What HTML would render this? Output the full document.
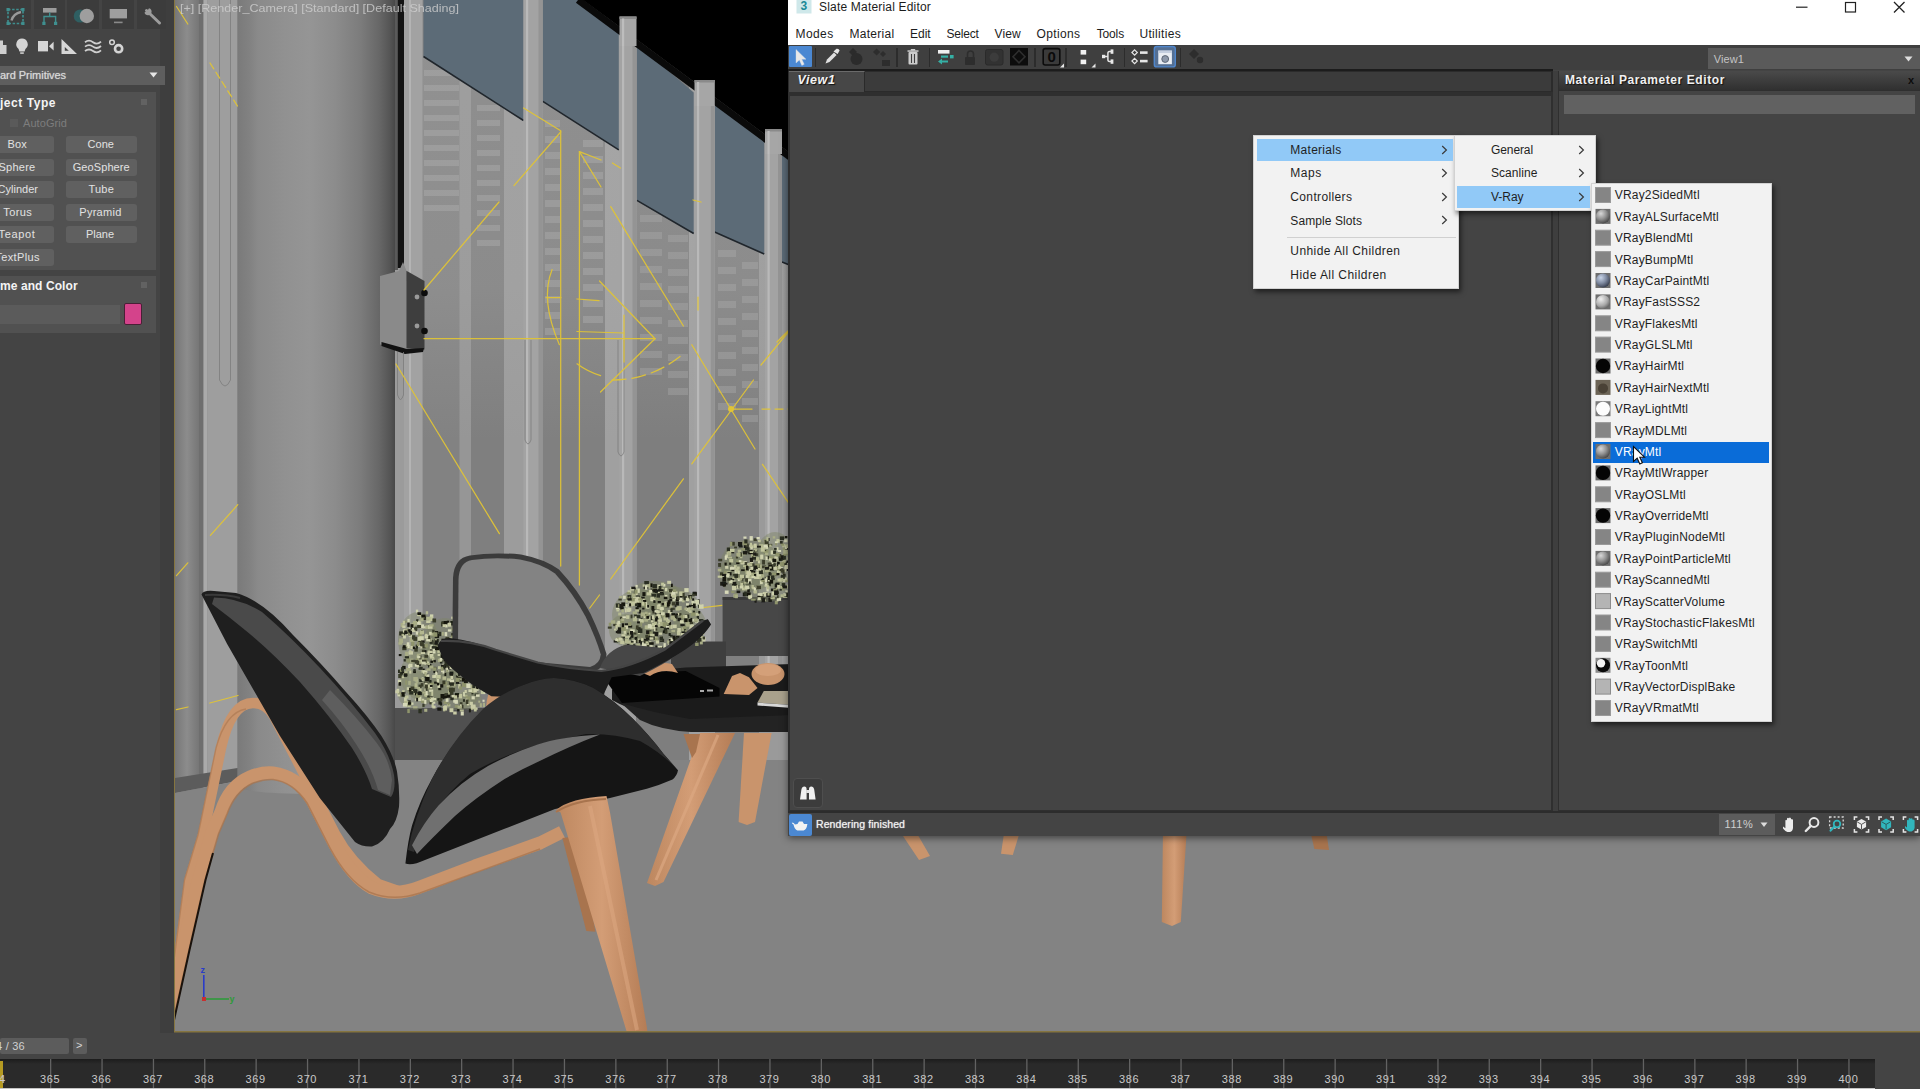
<!DOCTYPE html>
<html><head><meta charset="utf-8"><title>Slate Material Editor</title>
<style>
html,body{margin:0;padding:0;}
body{width:1920px;height:1089px;overflow:hidden;background:#444;font-family:"Liberation Sans",sans-serif;position:relative;}
div,span,svg{box-sizing:border-box;}

</style></head>
<body>
<svg style="position:absolute;left:0;top:0" width="1920" height="1089" viewBox="0 0 1920 1089">
<defs>
<linearGradient id="colg" x1="0" x2="1" y1="0" y2="0">
<stop offset="0" stop-color="#7a7a7a"/><stop offset="0.08" stop-color="#828282"/><stop offset="0.13" stop-color="#8a8a8a"/><stop offset="0.3" stop-color="#919191"/><stop offset="0.46" stop-color="#959595"/><stop offset="0.62" stop-color="#8c8c8c"/><stop offset="0.78" stop-color="#7c7c7c"/><stop offset="0.9" stop-color="#676767"/><stop offset="0.97" stop-color="#545454"/><stop offset="1" stop-color="#484848"/>
</linearGradient>
<linearGradient id="lstrip" x1="0" x2="1" y1="0" y2="0">
<stop offset="0" stop-color="#777"/><stop offset="0.5" stop-color="#8c8c8c"/><stop offset="1" stop-color="#767676"/>
</linearGradient>
<linearGradient id="wood" x1="0" x2="1" y1="0" y2="0"><stop offset="0" stop-color="#bd875f"/><stop offset="0.5" stop-color="#d39d76"/><stop offset="1" stop-color="#b47c55"/></linearGradient>
<filter id="b1" x="-5%" y="-5%" width="110%" height="110%"><feGaussianBlur stdDeviation="0.7"/></filter>
<filter id="b2" x="-2%" y="-2%" width="104%" height="104%"><feGaussianBlur stdDeviation="0.6"/></filter>
<linearGradient id="glz" gradientUnits="userSpaceOnUse" x1="0" y1="56" x2="0" y2="440"><stop offset="0" stop-color="#b0b0b0" stop-opacity=".32"/><stop offset=".6" stop-color="#b0b0b0" stop-opacity=".25"/><stop offset="1" stop-color="#b0b0b0" stop-opacity="0"/></linearGradient>
<clipPath id="vpclip"><rect x="175" y="0" width="1745" height="1031"/></clipPath>
</defs>
<rect x="173.5" y="0" width="1746.5" height="1032.5" fill="#857540"/>
<g clip-path="url(#vpclip)">
<!-- floor -->
<rect x="175" y="0" width="1745" height="1031" fill="#838383"/>
<!-- wall base: vertical stripes -->
<g id="wall">
<rect x="175" y="0" width="24" height="790" fill="url(#lstrip)"/>
<rect x="199" y="0" width="4.5" height="790" fill="#6e6e6e"/>
<rect x="203.5" y="0" width="4" height="790" fill="#aaaaaa"/>
<rect x="207.5" y="0" width="30" height="790" fill="#9e9e9e"/>
<rect x="394" y="0" width="28.5" height="760" fill="#9b9b9b"/>
<rect x="422.5" y="0" width="37" height="760" fill="#828282"/>
<rect x="459.5" y="0" width="11.5" height="760" fill="#969696"/>
<rect x="471" y="0" width="33" height="760" fill="#7f7f7f"/>
<rect x="504" y="0" width="36" height="760" fill="#9c9c9c"/>
<rect x="540" y="0" width="65" height="760" fill="#808080"/>
<rect x="605" y="0" width="31" height="760" fill="#a0a0a0"/>
<rect x="636" y="0" width="53" height="760" fill="#7e7e7e"/>
<rect x="689" y="0" width="26" height="760" fill="#a0a0a0"/>
<rect x="715" y="0" width="44" height="760" fill="#808080"/>
<rect x="759" y="0" width="31" height="760" fill="#9a9a9a"/>
</g>
<g>
<rect x="424" y="70.0" width="35" height="6" fill="#c4c4c4" opacity="0.3"/><rect x="424" y="85.0" width="35" height="6" fill="#c4c4c4" opacity="0.3"/><rect x="424" y="100.0" width="35" height="6" fill="#c4c4c4" opacity="0.3"/><rect x="424" y="115.0" width="35" height="6" fill="#c4c4c4" opacity="0.3"/><rect x="424" y="130.0" width="35" height="6" fill="#c4c4c4" opacity="0.3"/><rect x="424" y="145.0" width="35" height="6" fill="#c4c4c4" opacity="0.3"/><rect x="424" y="160.0" width="35" height="6" fill="#c4c4c4" opacity="0.3"/><rect x="424" y="175.0" width="35" height="6" fill="#c4c4c4" opacity="0.3"/><rect x="424" y="190.0" width="35" height="6" fill="#c4c4c4" opacity="0.3"/><rect x="424" y="205.0" width="35" height="6" fill="#c4c4c4" opacity="0.3"/>
<rect x="477" y="105.0" width="23" height="6" fill="#c4c4c4" opacity="0.3"/><rect x="477" y="120.0" width="23" height="6" fill="#c4c4c4" opacity="0.3"/><rect x="477" y="135.0" width="23" height="6" fill="#c4c4c4" opacity="0.3"/><rect x="477" y="150.0" width="23" height="6" fill="#c4c4c4" opacity="0.3"/><rect x="477" y="165.0" width="23" height="6" fill="#c4c4c4" opacity="0.3"/><rect x="477" y="180.0" width="23" height="6" fill="#c4c4c4" opacity="0.3"/><rect x="477" y="195.0" width="23" height="6" fill="#c4c4c4" opacity="0.3"/><rect x="477" y="210.0" width="23" height="6" fill="#c4c4c4" opacity="0.3"/><rect x="477" y="225.0" width="23" height="6" fill="#c4c4c4" opacity="0.3"/><rect x="477" y="240.0" width="23" height="6" fill="#c4c4c4" opacity="0.3"/>
<rect x="545" y="120.0" width="15" height="7" fill="#c4c4c4" opacity="0.28"/><rect x="545" y="136.0" width="15" height="7" fill="#c4c4c4" opacity="0.28"/><rect x="545" y="152.0" width="15" height="7" fill="#c4c4c4" opacity="0.28"/><rect x="545" y="168.0" width="15" height="7" fill="#c4c4c4" opacity="0.28"/><rect x="545" y="184.0" width="15" height="7" fill="#c4c4c4" opacity="0.28"/><rect x="545" y="200.0" width="15" height="7" fill="#c4c4c4" opacity="0.28"/><rect x="545" y="216.0" width="15" height="7" fill="#c4c4c4" opacity="0.28"/><rect x="545" y="232.0" width="15" height="7" fill="#c4c4c4" opacity="0.28"/><rect x="545" y="248.0" width="15" height="7" fill="#c4c4c4" opacity="0.28"/><rect x="545" y="264.0" width="15" height="7" fill="#c4c4c4" opacity="0.28"/><rect x="545" y="280.0" width="15" height="7" fill="#c4c4c4" opacity="0.28"/><rect x="545" y="296.0" width="15" height="7" fill="#c4c4c4" opacity="0.28"/><rect x="545" y="312.0" width="15" height="7" fill="#c4c4c4" opacity="0.28"/><rect x="545" y="328.0" width="15" height="7" fill="#c4c4c4" opacity="0.28"/>
<rect x="583" y="140.0" width="20" height="7" fill="#c4c4c4" opacity="0.3"/><rect x="583" y="156.0" width="20" height="7" fill="#c4c4c4" opacity="0.3"/><rect x="583" y="172.0" width="20" height="7" fill="#c4c4c4" opacity="0.3"/><rect x="583" y="188.0" width="20" height="7" fill="#c4c4c4" opacity="0.3"/><rect x="583" y="204.0" width="20" height="7" fill="#c4c4c4" opacity="0.3"/><rect x="583" y="220.0" width="20" height="7" fill="#c4c4c4" opacity="0.3"/><rect x="583" y="236.0" width="20" height="7" fill="#c4c4c4" opacity="0.3"/><rect x="583" y="252.0" width="20" height="7" fill="#c4c4c4" opacity="0.3"/><rect x="583" y="268.0" width="20" height="7" fill="#c4c4c4" opacity="0.3"/><rect x="583" y="284.0" width="20" height="7" fill="#c4c4c4" opacity="0.3"/><rect x="583" y="300.0" width="20" height="7" fill="#c4c4c4" opacity="0.3"/><rect x="583" y="316.0" width="20" height="7" fill="#c4c4c4" opacity="0.3"/>
<rect x="640" y="215.0" width="22" height="7" fill="#c4c4c4" opacity="0.25"/><rect x="640" y="232.0" width="22" height="7" fill="#c4c4c4" opacity="0.25"/><rect x="640" y="249.0" width="22" height="7" fill="#c4c4c4" opacity="0.25"/><rect x="640" y="266.0" width="22" height="7" fill="#c4c4c4" opacity="0.25"/><rect x="640" y="283.0" width="22" height="7" fill="#c4c4c4" opacity="0.25"/><rect x="640" y="300.0" width="22" height="7" fill="#c4c4c4" opacity="0.25"/><rect x="640" y="317.0" width="22" height="7" fill="#c4c4c4" opacity="0.25"/><rect x="640" y="334.0" width="22" height="7" fill="#c4c4c4" opacity="0.25"/><rect x="640" y="351.0" width="22" height="7" fill="#c4c4c4" opacity="0.25"/><rect x="640" y="368.0" width="22" height="7" fill="#c4c4c4" opacity="0.25"/>
<rect x="668" y="235.0" width="20" height="7" fill="#c4c4c4" opacity="0.25"/><rect x="668" y="252.0" width="20" height="7" fill="#c4c4c4" opacity="0.25"/><rect x="668" y="269.0" width="20" height="7" fill="#c4c4c4" opacity="0.25"/><rect x="668" y="286.0" width="20" height="7" fill="#c4c4c4" opacity="0.25"/><rect x="668" y="303.0" width="20" height="7" fill="#c4c4c4" opacity="0.25"/><rect x="668" y="320.0" width="20" height="7" fill="#c4c4c4" opacity="0.25"/><rect x="668" y="337.0" width="20" height="7" fill="#c4c4c4" opacity="0.25"/><rect x="668" y="354.0" width="20" height="7" fill="#c4c4c4" opacity="0.25"/><rect x="668" y="371.0" width="20" height="7" fill="#c4c4c4" opacity="0.25"/><rect x="668" y="388.0" width="20" height="7" fill="#c4c4c4" opacity="0.25"/>
<rect x="718" y="250.0" width="18" height="7" fill="#c4c4c4" opacity="0.25"/><rect x="718" y="267.0" width="18" height="7" fill="#c4c4c4" opacity="0.25"/><rect x="718" y="284.0" width="18" height="7" fill="#c4c4c4" opacity="0.25"/><rect x="718" y="301.0" width="18" height="7" fill="#c4c4c4" opacity="0.25"/><rect x="718" y="318.0" width="18" height="7" fill="#c4c4c4" opacity="0.25"/><rect x="718" y="335.0" width="18" height="7" fill="#c4c4c4" opacity="0.25"/><rect x="718" y="352.0" width="18" height="7" fill="#c4c4c4" opacity="0.25"/><rect x="718" y="369.0" width="18" height="7" fill="#c4c4c4" opacity="0.25"/><rect x="718" y="386.0" width="18" height="7" fill="#c4c4c4" opacity="0.25"/><rect x="718" y="403.0" width="18" height="7" fill="#c4c4c4" opacity="0.25"/>
<rect x="742" y="262.0" width="16" height="7" fill="#c4c4c4" opacity="0.25"/><rect x="742" y="279.0" width="16" height="7" fill="#c4c4c4" opacity="0.25"/><rect x="742" y="296.0" width="16" height="7" fill="#c4c4c4" opacity="0.25"/><rect x="742" y="313.0" width="16" height="7" fill="#c4c4c4" opacity="0.25"/><rect x="742" y="330.0" width="16" height="7" fill="#c4c4c4" opacity="0.25"/><rect x="742" y="347.0" width="16" height="7" fill="#c4c4c4" opacity="0.25"/><rect x="742" y="364.0" width="16" height="7" fill="#c4c4c4" opacity="0.25"/><rect x="742" y="381.0" width="16" height="7" fill="#c4c4c4" opacity="0.25"/><rect x="742" y="398.0" width="16" height="7" fill="#c4c4c4" opacity="0.25"/><rect x="742" y="415.0" width="16" height="7" fill="#c4c4c4" opacity="0.25"/>
</g>
<polygon points="422.5,56 524,120 543,101 619,150 637,200 694,233 715,232 764,254 790,262 790,440 422.5,440" fill="url(#glz)"/>
<rect x="395" y="0" width="3" height="270" fill="#5a5a5a"/><rect x="397.8" y="0" width="6.4" height="268" fill="#141414"/>
<rect x="404" y="0" width="18.5" height="700" fill="#a2a2a2"/>
<rect x="409" y="0" width="2" height="700" fill="#b4b4b4"/>
<polygon points="423.5,0 523.5,0 523.5,120.5 423.5,56.5" fill="#5c6b77"/>
<polygon points="542.8,0 583.5,0 618.8,33 618.8,149.8 542.8,101.3" fill="#5c6b77"/>
<polygon points="636.9,44 693.7,92.5 693.7,233.5 636.9,200.4" fill="#5c6b77"/>
<polygon points="714.6,103.5 764.2,141 764.2,254 714.6,232" fill="#5c6b77"/>
<polygon points="782,155 792,162 792,266 782,262" fill="#5c6b77"/>
<g stroke="#20262c" stroke-width="1.6" fill="none"><path d="M423.5 56.5L523.5 120.5M542.8 101.3L618.8 149.8M636.9 200.4L693.7 233.5M714.6 232L764.2 254M782 262L792 266"/></g>
<rect x="523.5" y="0" width="19.0" height="700" fill="#a3a3a3"/>
<rect x="526.0" y="0" width="2.2" height="700" fill="#b9b9b9"/>
<rect x="538.5" y="0" width="4" height="700" fill="#949494"/>
<rect x="619.5" y="16.5" width="17.0" height="683.5" fill="#a3a3a3"/>
<rect x="622.0" y="16.5" width="2.2" height="683.5" fill="#b9b9b9"/>
<rect x="632.5" y="16.5" width="4" height="683.5" fill="#949494"/>
<rect x="694.5" y="80" width="20.299999999999955" height="620" fill="#a3a3a3"/>
<rect x="697.0" y="80" width="2.2" height="620" fill="#b9b9b9"/>
<rect x="710.8" y="80" width="4" height="620" fill="#949494"/>
<rect x="765" y="129" width="17" height="571" fill="#a3a3a3"/>
<rect x="767.5" y="129" width="2.2" height="571" fill="#b9b9b9"/>
<rect x="778" y="129" width="4" height="571" fill="#949494"/>
<polygon points="583.5,0 792,0 792,154.5" fill="#000"/>
<path d="M578 0L792 158.5" stroke="#0a0a0a" stroke-width="7" fill="none"/>
<polygon points="583.5,0 792,0 792,151" fill="#000"/>
<rect x="619.5" y="16.5" width="17.0" height="29.5" fill="#a6a6a6"/>
<rect x="619.5" y="16.5" width="17.0" height="2.5" fill="#8a8a8a"/>
<rect x="622.0" y="18.5" width="2.2" height="27.5" fill="#bdbdbd"/>
<rect x="694.5" y="80" width="20.299999999999955" height="26" fill="#a6a6a6"/>
<rect x="694.5" y="80" width="20.299999999999955" height="2.5" fill="#8a8a8a"/>
<rect x="697.0" y="82" width="2.2" height="24" fill="#bdbdbd"/>
<rect x="765" y="129" width="17" height="25" fill="#a6a6a6"/>
<rect x="765" y="129" width="17" height="2.5" fill="#8a8a8a"/>
<rect x="767.5" y="131" width="2.2" height="23" fill="#bdbdbd"/>
<path d="M237.5 0H395V785Q395 794 316 794Q237.5 794 237.5 785Z" fill="url(#colg)"/>
<polygon points="175,778 237.5,768 237.5,781 175,793" fill="#5c5c5c"/>
<polygon points="175,793 237.5,781 237.5,1031 175,1031" fill="#838383"/>
<polygon points="395,708 500,708 620,708 620,760 395,760" fill="#4c4c4c"/>
<polygon points="395,708 470,708 520,742 560,760 395,760" fill="#505050"/>
<polygon points="380,276 399,271 403,262 406.4,270.7 406.4,348.5 380,344.4" fill="#8a8a8a"/>
<polygon points="406.4,270.7 424.5,281 424.5,349.5 406.4,348.5" fill="#3e3e3e"/>
<polygon points="381.5,342 407,349 424,348 423,352 405,354 381.5,346" fill="#111"/>
<circle cx="424.5" cy="293" r="3.3" fill="#0c0c0c"/><circle cx="424.5" cy="331" r="3.3" fill="#0c0c0c"/><circle cx="417" cy="297" r="2.4" fill="#9a9a9a"/><circle cx="417" cy="326" r="2.4" fill="#9a9a9a"/>
<g fill="none" stroke="#7c7c7c" stroke-width="1" opacity=".8"><path d="M219.5 0V380Q225 392 230.5 380V0"/><path d="M397.5 352V395Q400.5 404 403.5 395V352"/><path d="M525 340V440Q528 448 531 440V340"/><path d="M618 340V452Q621 460 624 452V340"/></g>
<g stroke="#e0c436" stroke-width="1.25" fill="none" stroke-linecap="round" opacity=".95">
<path d="M176.5 6.5L187.8 24"/>
<path d="M424 290L499 202"/>
<path d="M514 185.6L560.7 132"/>
<path d="M523.6 108L560.7 130.8"/>
<path d="M560.7 131L560.7 566"/>
<path d="M579.4 151.7L579.4 585"/>
<path d="M579.4 151.7L601 160"/>
<path d="M579.4 151.7L601 187"/>
<path d="M424 338.7L655 338.7"/>
<path d="M624 315L624 362"/>
<path d="M599.5 281L655 338.7"/>
<path d="M600.5 392L655 338.7"/>
<path d="M610.7 206.7L683.4 326"/>
<path d="M396 364L499.4 533.7"/>
<path d="M691.8 344.7L755 449"/>
<path d="M691.8 463.8L753.5 380"/>
<path d="M731 409L752 409"/>
<path d="M761 365L790 330"/>
<path d="M683.4 478.8L610.7 579"/>
<path d="M762.5 464.3L790 505"/>
<path d="M210.4 535.4L237.8 504.7"/>
<path d="M176.5 575.7L187.8 562.8"/>
<path d="M546 297.6L561 297.6"/>
<path d="M577 299L599 300.6"/>
<path d="M577 331.5L624 333"/>
<path d="M612.4 163L620.4 168"/>
<path d="M693 200L701 202"/>
<path d="M698 297L698 310"/>
<path d="M777 342L790 329"/>
<path d="M599.5 595L589.8 608"/>
<path d="M699.5 608L722 605.4"/>
<path d="M209.8 703L238 695.5"/>
<path d="M176.4 709.7L188 707"/>
<path d="M210 63L237.8 106.5" stroke-dasharray="7 4"/>
<path d="M762 409H790" stroke-dasharray="8 5"/>
<path d="M552 269.7Q540 300 559.4 344.7"/>
<path d="M577 363.8Q588 372 600.6 375.6"/>
<path d="M612 380Q650 380 680 356.5" stroke-dasharray="14 6"/>
</g>
<circle cx="731" cy="409" r="3" fill="#e0c436"/>
<rect x="722.6" y="597" width="70" height="59" fill="#474747"/>
<rect x="722.6" y="597" width="70" height="3" fill="#3a3a3a"/>
<polygon points="671,641.5 726,641.5 726,672 671,672" fill="#3e3e3e"/>
<g filter="url(#b1)"><ellipse cx="418.0" cy="640.0" rx="20.0" ry="28.0" fill="#7f8464" opacity=".45"/><ellipse cx="430.0" cy="675.0" rx="30.0" ry="28.0" fill="#7f8464" opacity=".45"/><ellipse cx="455.0" cy="690.0" rx="26.0" ry="20.0" fill="#7f8464" opacity=".45"/><ellipse cx="415.0" cy="690.0" rx="18.0" ry="20.0" fill="#7f8464" opacity=".45"/><ellipse cx="445.0" cy="640.0" rx="20.0" ry="22.0" fill="#7f8464" opacity=".45"/><ellipse cx="470.0" cy="700.0" rx="12.0" ry="10.0" fill="#7f8464" opacity=".45"/><rect x="406.1" y="695.4" width="2.5" height="3.2" fill="#c0c49c"/><rect x="434.5" y="674.0" width="2.1" height="1.9" fill="#1a1c14"/><rect x="434.1" y="681.6" width="3.5" height="2.1" fill="#1a1c14"/><rect x="473.3" y="677.8" width="3.3" height="3.9" fill="#c9cba6"/><rect x="425.1" y="676.8" width="4.5" height="4.4" fill="#15160f"/><rect x="431.5" y="702.9" width="2.3" height="4.6" fill="#c0c49c"/><rect x="423.9" y="681.6" width="4.4" height="3.0" fill="#3a3d2c"/><rect x="468.7" y="676.1" width="2.6" height="4.5" fill="#2a2d20"/><rect x="460.9" y="647.1" width="2.3" height="3.3" fill="#a9ad86"/><rect x="457.3" y="676.5" width="2.0" height="3.7" fill="#8f946c"/><rect x="403.7" y="620.8" width="3.2" height="1.9" fill="#8f946c"/><rect x="397.9" y="679.7" width="3.4" height="3.6" fill="#cfd2ae"/><rect x="409.2" y="627.7" width="4.0" height="3.3" fill="#c9cba6"/><rect x="435.3" y="632.4" width="3.5" height="3.8" fill="#3a3d2c"/><rect x="428.5" y="696.4" width="4.1" height="3.3" fill="#3a3d2c"/><rect x="444.5" y="649.4" width="3.1" height="2.8" fill="#c9cba6"/><rect x="443.9" y="705.6" width="3.2" height="2.8" fill="#b4b890"/><rect x="425.1" y="661.7" width="4.0" height="2.7" fill="#cfd2ae"/><rect x="448.0" y="690.7" width="2.3" height="3.4" fill="#a9ad86"/><rect x="471.5" y="690.0" width="1.9" height="4.4" fill="#2a2d20"/><rect x="461.9" y="633.7" width="2.1" height="3.5" fill="#2a2d20"/><rect x="441.5" y="621.3" width="3.6" height="2.6" fill="#2a2d20"/><rect x="422.1" y="640.4" width="2.5" height="2.5" fill="#1a1c14"/><rect x="459.7" y="709.5" width="4.1" height="1.9" fill="#b4b890"/><rect x="457.4" y="676.9" width="4.1" height="4.5" fill="#3a3d2c"/><rect x="450.8" y="678.8" width="2.4" height="3.6" fill="#15160f"/><rect x="429.5" y="665.8" width="3.6" height="3.0" fill="#8f946c"/><rect x="408.2" y="664.6" width="1.8" height="4.3" fill="#d6d8b8"/><rect x="397.4" y="692.3" width="3.1" height="4.1" fill="#cfd2ae"/><rect x="472.3" y="688.0" width="3.2" height="2.9" fill="#cfd2ae"/><rect x="425.2" y="625.4" width="4.3" height="3.5" fill="#a9ad86"/><rect x="449.1" y="646.9" width="1.9" height="2.4" fill="#2a2d20"/><rect x="454.7" y="694.3" width="2.8" height="4.3" fill="#3a3d2c"/><rect x="455.8" y="655.8" width="2.0" height="1.9" fill="#1a1c14"/><rect x="418.1" y="639.2" width="4.2" height="2.8" fill="#3a3d2c"/><rect x="424.6" y="634.7" width="4.0" height="3.8" fill="#cfd2ae"/><rect x="438.0" y="666.2" width="2.7" height="2.9" fill="#c0c49c"/><rect x="446.9" y="704.0" width="3.4" height="2.4" fill="#c0c49c"/><rect x="401.4" y="632.1" width="3.4" height="4.4" fill="#2a2d20"/><rect x="435.2" y="633.2" width="4.1" height="1.8" fill="#c9cba6"/><rect x="404.4" y="699.5" width="2.3" height="4.0" fill="#c9cba6"/><rect x="446.8" y="620.7" width="2.3" height="2.5" fill="#15160f"/><rect x="416.8" y="655.0" width="2.4" height="2.7" fill="#c0c49c"/><rect x="396.5" y="688.8" width="2.7" height="2.9" fill="#cfd2ae"/><rect x="422.6" y="668.6" width="2.1" height="2.4" fill="#15160f"/><rect x="455.9" y="675.1" width="2.3" height="2.4" fill="#2a2d20"/><rect x="411.9" y="642.3" width="2.1" height="3.9" fill="#2a2d20"/><rect x="410.8" y="689.4" width="4.3" height="2.6" fill="#cfd2ae"/><rect x="424.1" y="662.3" width="4.1" height="2.1" fill="#cfd2ae"/><rect x="413.8" y="691.1" width="2.0" height="3.3" fill="#b4b890"/><rect x="451.2" y="634.7" width="3.2" height="4.2" fill="#8f946c"/><rect x="407.9" y="657.7" width="2.0" height="4.5" fill="#8f946c"/><rect x="409.6" y="687.6" width="4.1" height="2.7" fill="#d6d8b8"/><rect x="403.6" y="659.1" width="2.2" height="2.4" fill="#2a2d20"/><rect x="443.1" y="681.8" width="4.1" height="3.5" fill="#8f946c"/><rect x="454.5" y="663.3" width="2.3" height="3.0" fill="#1a1c14"/><rect x="408.2" y="680.9" width="2.5" height="4.0" fill="#a9ad86"/><rect x="455.4" y="651.7" width="3.3" height="3.3" fill="#b4b890"/><rect x="429.6" y="639.9" width="3.2" height="4.0" fill="#2a2d20"/><rect x="446.2" y="667.7" width="2.5" height="4.1" fill="#d6d8b8"/><rect x="429.8" y="646.7" width="2.0" height="3.2" fill="#cfd2ae"/><rect x="410.0" y="637.6" width="4.4" height="4.4" fill="#a9ad86"/><rect x="451.5" y="627.6" width="3.2" height="3.1" fill="#8f946c"/><rect x="414.3" y="647.9" width="3.5" height="3.8" fill="#3a3d2c"/><rect x="476.9" y="686.2" width="4.3" height="2.2" fill="#a9ad86"/><rect x="462.9" y="699.2" width="2.6" height="2.6" fill="#2a2d20"/><rect x="443.7" y="621.0" width="3.5" height="4.2" fill="#15160f"/><rect x="474.7" y="707.6" width="2.9" height="2.2" fill="#cfd2ae"/><rect x="432.4" y="705.6" width="3.2" height="2.9" fill="#c9cba6"/><rect x="451.3" y="644.9" width="3.3" height="4.6" fill="#d6d8b8"/><rect x="417.0" y="614.0" width="4.5" height="2.2" fill="#c0c49c"/><rect x="463.8" y="694.8" width="3.7" height="2.0" fill="#a9ad86"/><rect x="470.6" y="705.5" width="2.9" height="4.3" fill="#b4b890"/><rect x="433.4" y="670.8" width="4.5" height="2.1" fill="#15160f"/><rect x="448.1" y="647.5" width="3.6" height="2.6" fill="#c0c49c"/><rect x="428.1" y="664.0" width="3.3" height="3.4" fill="#1a1c14"/><rect x="415.8" y="631.4" width="2.6" height="3.3" fill="#d6d8b8"/><rect x="418.6" y="666.8" width="4.1" height="3.0" fill="#2a2d20"/><rect x="471.5" y="696.2" width="3.3" height="3.2" fill="#d6d8b8"/><rect x="471.0" y="686.8" width="4.3" height="2.4" fill="#cfd2ae"/><rect x="467.0" y="701.5" width="2.1" height="3.9" fill="#c9cba6"/><rect x="443.1" y="708.2" width="2.2" height="3.2" fill="#a9ad86"/><rect x="445.5" y="636.9" width="3.7" height="3.9" fill="#3a3d2c"/><rect x="423.1" y="616.5" width="2.8" height="3.3" fill="#15160f"/><rect x="424.5" y="682.7" width="3.2" height="3.6" fill="#cfd2ae"/><rect x="428.0" y="625.2" width="4.6" height="3.6" fill="#c9cba6"/><rect x="459.0" y="683.5" width="2.4" height="4.4" fill="#3a3d2c"/><rect x="448.1" y="659.3" width="3.8" height="3.1" fill="#2a2d20"/><rect x="454.2" y="624.5" width="1.8" height="2.9" fill="#3a3d2c"/><rect x="432.3" y="647.2" width="3.4" height="3.9" fill="#cfd2ae"/><rect x="474.8" y="684.6" width="4.6" height="2.5" fill="#15160f"/><rect x="408.0" y="687.9" width="4.0" height="4.2" fill="#b4b890"/><rect x="463.1" y="691.9" width="1.8" height="4.4" fill="#cfd2ae"/><rect x="465.8" y="647.8" width="2.2" height="4.1" fill="#2a2d20"/><rect x="437.6" y="653.9" width="2.6" height="2.1" fill="#c9cba6"/><rect x="451.2" y="633.1" width="2.4" height="2.4" fill="#2a2d20"/><rect x="400.7" y="693.5" width="3.6" height="3.1" fill="#3a3d2c"/><rect x="420.7" y="683.1" width="2.6" height="3.5" fill="#3a3d2c"/><rect x="414.9" y="664.2" width="3.2" height="2.5" fill="#d6d8b8"/><rect x="448.9" y="681.0" width="4.5" height="3.8" fill="#2a2d20"/><rect x="422.5" y="650.1" width="4.0" height="2.3" fill="#1a1c14"/><rect x="450.3" y="621.1" width="3.4" height="4.4" fill="#15160f"/><rect x="408.6" y="687.9" width="2.8" height="3.9" fill="#15160f"/><rect x="415.6" y="681.3" width="2.7" height="2.1" fill="#a9ad86"/><rect x="429.7" y="656.7" width="4.5" height="1.9" fill="#c0c49c"/><rect x="461.7" y="677.5" width="3.8" height="4.1" fill="#15160f"/><rect x="424.8" y="694.3" width="3.5" height="2.3" fill="#c0c49c"/><rect x="414.0" y="628.4" width="2.9" height="2.3" fill="#15160f"/><rect x="414.9" y="692.4" width="3.3" height="2.9" fill="#15160f"/><rect x="434.7" y="631.1" width="3.5" height="4.3" fill="#15160f"/><rect x="465.8" y="696.5" width="4.3" height="4.2" fill="#8f946c"/><rect x="419.8" y="624.4" width="4.3" height="3.9" fill="#d6d8b8"/><rect x="407.7" y="702.6" width="2.9" height="4.3" fill="#c9cba6"/><rect x="442.8" y="664.6" width="2.2" height="3.1" fill="#2a2d20"/><rect x="469.6" y="701.8" width="3.3" height="3.3" fill="#c9cba6"/><rect x="405.6" y="704.7" width="2.1" height="1.9" fill="#b4b890"/><rect x="451.4" y="684.2" width="4.1" height="2.3" fill="#a9ad86"/><rect x="434.3" y="638.9" width="4.5" height="3.6" fill="#2a2d20"/><rect x="415.9" y="609.6" width="2.3" height="3.0" fill="#cfd2ae"/><rect x="456.8" y="672.6" width="4.3" height="3.3" fill="#c9cba6"/><rect x="442.4" y="680.6" width="3.0" height="3.7" fill="#3a3d2c"/><rect x="458.2" y="684.0" width="2.5" height="4.5" fill="#c0c49c"/><rect x="407.6" y="703.1" width="4.2" height="1.9" fill="#b4b890"/><rect x="402.2" y="691.6" width="3.2" height="2.1" fill="#15160f"/><rect x="422.1" y="616.8" width="3.0" height="2.2" fill="#c9cba6"/><rect x="429.6" y="680.1" width="1.9" height="3.3" fill="#15160f"/><rect x="402.1" y="690.2" width="2.6" height="4.2" fill="#c0c49c"/><rect x="399.2" y="631.4" width="4.0" height="4.1" fill="#2a2d20"/><rect x="432.2" y="629.7" width="2.4" height="4.4" fill="#3a3d2c"/><rect x="439.8" y="645.6" width="3.1" height="2.2" fill="#cfd2ae"/><rect x="444.3" y="695.0" width="3.8" height="3.3" fill="#cfd2ae"/><rect x="474.7" y="693.6" width="3.9" height="2.4" fill="#2a2d20"/><rect x="429.0" y="638.3" width="2.8" height="3.4" fill="#b4b890"/><rect x="397.9" y="691.8" width="3.0" height="2.7" fill="#8f946c"/><rect x="418.5" y="684.6" width="3.2" height="3.3" fill="#3a3d2c"/><rect x="407.4" y="702.7" width="4.0" height="3.4" fill="#8f946c"/><rect x="434.7" y="633.5" width="4.4" height="4.4" fill="#15160f"/><rect x="481.3" y="691.9" width="4.0" height="2.2" fill="#cfd2ae"/><rect x="441.1" y="665.7" width="4.0" height="3.8" fill="#2a2d20"/><rect x="461.2" y="642.4" width="2.8" height="2.7" fill="#a9ad86"/><rect x="447.8" y="640.1" width="2.3" height="2.2" fill="#3a3d2c"/><rect x="455.9" y="664.3" width="3.9" height="4.4" fill="#d6d8b8"/><rect x="449.8" y="691.5" width="3.7" height="3.8" fill="#3a3d2c"/><rect x="451.7" y="696.2" width="3.6" height="2.3" fill="#1a1c14"/><rect x="427.1" y="695.4" width="2.4" height="2.4" fill="#2a2d20"/><rect x="438.4" y="701.0" width="3.0" height="3.7" fill="#1a1c14"/><rect x="443.0" y="706.0" width="4.1" height="4.6" fill="#c0c49c"/><rect x="417.1" y="624.9" width="4.0" height="3.2" fill="#3a3d2c"/><rect x="437.8" y="647.0" width="4.0" height="3.4" fill="#3a3d2c"/><rect x="411.1" y="635.6" width="1.8" height="2.1" fill="#a9ad86"/><rect x="421.2" y="699.7" width="4.5" height="3.3" fill="#8f946c"/><rect x="445.5" y="663.1" width="3.0" height="4.4" fill="#3a3d2c"/><rect x="448.2" y="666.3" width="2.6" height="3.2" fill="#15160f"/><rect x="446.8" y="662.9" width="2.5" height="1.8" fill="#d6d8b8"/><rect x="432.2" y="675.1" width="2.8" height="2.9" fill="#c9cba6"/><rect x="478.3" y="700.6" width="1.9" height="2.1" fill="#a9ad86"/><rect x="418.2" y="632.6" width="3.6" height="4.2" fill="#8f946c"/><rect x="463.2" y="645.3" width="2.8" height="3.0" fill="#15160f"/><rect x="417.4" y="696.5" width="4.0" height="4.5" fill="#cfd2ae"/><rect x="431.9" y="632.8" width="4.0" height="3.2" fill="#8f946c"/><rect x="458.4" y="656.6" width="2.1" height="2.2" fill="#b4b890"/><rect x="459.1" y="693.9" width="3.0" height="4.5" fill="#c0c49c"/><rect x="398.2" y="674.0" width="3.7" height="4.1" fill="#3a3d2c"/><rect x="460.7" y="711.5" width="3.1" height="4.0" fill="#d6d8b8"/><rect x="471.2" y="688.7" width="3.6" height="4.2" fill="#a9ad86"/><rect x="405.1" y="651.8" width="3.2" height="4.3" fill="#a9ad86"/><rect x="404.5" y="696.1" width="2.2" height="3.5" fill="#c0c49c"/><rect x="460.9" y="704.9" width="2.6" height="3.2" fill="#3a3d2c"/><rect x="413.3" y="685.8" width="4.2" height="2.1" fill="#8f946c"/><rect x="462.2" y="682.5" width="4.4" height="4.5" fill="#8f946c"/><rect x="418.1" y="661.9" width="2.6" height="4.3" fill="#15160f"/><rect x="416.2" y="619.2" width="2.3" height="3.4" fill="#2a2d20"/><rect x="419.2" y="678.8" width="3.2" height="3.2" fill="#2a2d20"/><rect x="447.9" y="629.3" width="3.5" height="2.3" fill="#d6d8b8"/><rect x="399.2" y="638.5" width="3.9" height="4.6" fill="#a9ad86"/><rect x="413.2" y="670.9" width="2.7" height="2.2" fill="#15160f"/><rect x="406.6" y="631.0" width="3.6" height="4.1" fill="#c0c49c"/><rect x="453.4" y="636.6" width="1.8" height="1.9" fill="#8f946c"/><rect x="421.5" y="670.1" width="3.9" height="2.6" fill="#c0c49c"/><rect x="450.3" y="696.9" width="3.5" height="3.3" fill="#2a2d20"/><rect x="416.6" y="686.9" width="3.4" height="2.8" fill="#a9ad86"/><rect x="421.0" y="630.1" width="1.9" height="1.9" fill="#3a3d2c"/><rect x="406.5" y="646.5" width="3.7" height="2.1" fill="#a9ad86"/><rect x="473.9" y="707.5" width="2.8" height="4.0" fill="#c0c49c"/><rect x="451.7" y="694.9" width="4.4" height="2.6" fill="#cfd2ae"/><rect x="402.2" y="665.9" width="3.4" height="3.3" fill="#15160f"/><rect x="429.4" y="700.9" width="2.2" height="3.5" fill="#3a3d2c"/><rect x="403.9" y="629.2" width="2.6" height="1.9" fill="#b4b890"/><rect x="405.3" y="680.3" width="2.0" height="4.5" fill="#8f946c"/><rect x="426.7" y="663.5" width="3.7" height="1.9" fill="#3a3d2c"/><rect x="421.7" y="677.4" width="2.0" height="3.4" fill="#d6d8b8"/><rect x="454.9" y="693.1" width="4.2" height="4.2" fill="#15160f"/><rect x="424.2" y="699.9" width="2.2" height="4.0" fill="#d6d8b8"/><rect x="420.6" y="677.9" width="3.5" height="1.8" fill="#a9ad86"/><rect x="479.7" y="703.2" width="2.2" height="3.9" fill="#a9ad86"/><rect x="455.1" y="633.1" width="2.9" height="3.5" fill="#8f946c"/><rect x="406.6" y="658.4" width="3.3" height="4.0" fill="#8f946c"/><rect x="436.7" y="679.0" width="2.5" height="3.4" fill="#cfd2ae"/><rect x="426.2" y="620.3" width="4.4" height="2.7" fill="#c9cba6"/><rect x="453.2" y="711.5" width="3.5" height="3.0" fill="#c9cba6"/><rect x="426.3" y="685.2" width="3.0" height="3.8" fill="#8f946c"/><rect x="454.6" y="700.2" width="3.3" height="3.6" fill="#d6d8b8"/><rect x="474.5" y="685.6" width="4.5" height="1.9" fill="#c0c49c"/><rect x="424.2" y="708.7" width="3.1" height="3.1" fill="#a9ad86"/><rect x="438.3" y="687.3" width="3.0" height="2.9" fill="#1a1c14"/><rect x="404.8" y="656.2" width="4.2" height="2.2" fill="#2a2d20"/><rect x="400.7" y="622.9" width="3.2" height="4.1" fill="#a9ad86"/><rect x="416.9" y="653.6" width="3.8" height="4.0" fill="#a9ad86"/><rect x="414.6" y="678.8" width="3.3" height="2.5" fill="#c9cba6"/><rect x="442.3" y="663.8" width="2.3" height="3.4" fill="#d6d8b8"/><rect x="440.2" y="649.6" width="4.4" height="3.8" fill="#c9cba6"/><rect x="457.0" y="678.3" width="4.6" height="2.0" fill="#a9ad86"/><rect x="429.8" y="653.7" width="3.6" height="2.9" fill="#cfd2ae"/><rect x="444.4" y="672.9" width="1.9" height="3.3" fill="#15160f"/><rect x="444.5" y="693.1" width="3.6" height="4.6" fill="#3a3d2c"/><rect x="456.9" y="679.1" width="3.2" height="2.6" fill="#1a1c14"/><rect x="419.2" y="622.1" width="2.0" height="2.8" fill="#cfd2ae"/><rect x="416.7" y="644.9" width="3.1" height="2.2" fill="#cfd2ae"/><rect x="405.7" y="630.5" width="2.0" height="3.4" fill="#1a1c14"/><rect x="449.7" y="662.2" width="3.4" height="3.4" fill="#1a1c14"/><rect x="429.2" y="624.3" width="4.4" height="2.2" fill="#a9ad86"/><rect x="430.5" y="648.5" width="3.5" height="2.2" fill="#d6d8b8"/><rect x="415.7" y="644.6" width="2.4" height="3.8" fill="#2a2d20"/><rect x="429.7" y="684.6" width="2.4" height="3.8" fill="#d6d8b8"/><rect x="425.3" y="661.4" width="3.2" height="2.6" fill="#c0c49c"/><rect x="427.5" y="651.4" width="2.0" height="4.1" fill="#cfd2ae"/><rect x="422.4" y="691.5" width="4.1" height="2.1" fill="#a9ad86"/><rect x="433.2" y="666.9" width="3.2" height="2.9" fill="#1a1c14"/><rect x="413.1" y="706.2" width="4.4" height="2.2" fill="#a9ad86"/><rect x="458.5" y="630.8" width="3.8" height="4.1" fill="#c9cba6"/><rect x="430.9" y="632.8" width="3.0" height="2.6" fill="#a9ad86"/><rect x="402.8" y="693.6" width="2.3" height="1.8" fill="#d6d8b8"/><rect x="429.5" y="682.6" width="4.3" height="2.1" fill="#8f946c"/><rect x="432.0" y="651.2" width="3.5" height="2.3" fill="#d6d8b8"/><rect x="439.9" y="659.9" width="2.5" height="3.6" fill="#1a1c14"/><rect x="446.7" y="685.5" width="2.8" height="1.9" fill="#c0c49c"/><rect x="398.0" y="669.6" width="3.1" height="3.4" fill="#2a2d20"/><rect x="402.3" y="646.6" width="4.2" height="3.6" fill="#3a3d2c"/><rect x="432.4" y="667.2" width="4.0" height="3.5" fill="#8f946c"/><rect x="399.9" y="669.2" width="3.0" height="4.6" fill="#8f946c"/><rect x="427.2" y="663.0" width="2.8" height="2.0" fill="#a9ad86"/><rect x="442.6" y="639.5" width="1.8" height="2.2" fill="#3a3d2c"/><rect x="423.3" y="626.3" width="2.2" height="2.1" fill="#cfd2ae"/><rect x="422.5" y="658.4" width="4.6" height="4.2" fill="#8f946c"/><rect x="399.7" y="671.8" width="3.9" height="2.9" fill="#2a2d20"/><rect x="419.5" y="688.7" width="2.0" height="2.3" fill="#c0c49c"/><rect x="401.5" y="633.8" width="2.5" height="2.4" fill="#a9ad86"/><rect x="418.9" y="655.4" width="2.6" height="4.2" fill="#3a3d2c"/><rect x="422.4" y="703.9" width="2.2" height="3.0" fill="#3a3d2c"/><rect x="426.8" y="684.5" width="4.6" height="3.0" fill="#c9cba6"/><rect x="408.7" y="663.7" width="3.8" height="3.6" fill="#cfd2ae"/><rect x="441.3" y="623.1" width="2.5" height="3.4" fill="#1a1c14"/><rect x="458.9" y="653.0" width="4.5" height="2.7" fill="#8f946c"/><rect x="416.8" y="663.2" width="2.4" height="4.3" fill="#c9cba6"/><rect x="441.2" y="621.9" width="2.4" height="3.0" fill="#3a3d2c"/><rect x="415.9" y="658.1" width="2.9" height="3.6" fill="#8f946c"/><rect x="411.6" y="622.8" width="3.5" height="4.5" fill="#a9ad86"/><rect x="446.3" y="669.9" width="1.9" height="1.9" fill="#8f946c"/><rect x="403.4" y="671.2" width="4.1" height="3.4" fill="#b4b890"/><rect x="424.5" y="673.5" width="3.8" height="4.1" fill="#1a1c14"/><rect x="443.5" y="657.6" width="3.5" height="3.9" fill="#15160f"/><rect x="475.5" y="686.7" width="3.1" height="4.1" fill="#cfd2ae"/><rect x="417.3" y="636.8" width="3.9" height="4.0" fill="#cfd2ae"/><rect x="435.2" y="641.8" width="3.0" height="3.8" fill="#3a3d2c"/><rect x="477.3" y="678.9" width="4.2" height="2.0" fill="#b4b890"/><rect x="404.0" y="698.0" width="2.5" height="3.3" fill="#c9cba6"/><rect x="421.8" y="698.7" width="2.4" height="2.0" fill="#c9cba6"/><rect x="452.1" y="617.0" width="3.5" height="2.5" fill="#b4b890"/><rect x="410.5" y="686.5" width="3.9" height="3.6" fill="#3a3d2c"/><rect x="421.2" y="644.2" width="4.5" height="4.1" fill="#3a3d2c"/><rect x="471.2" y="705.5" width="4.4" height="3.5" fill="#b4b890"/><rect x="449.6" y="671.6" width="3.8" height="2.9" fill="#1a1c14"/><rect x="450.0" y="681.5" width="3.9" height="4.3" fill="#2a2d20"/><rect x="421.7" y="657.3" width="2.2" height="4.6" fill="#a9ad86"/><rect x="433.3" y="640.3" width="3.2" height="4.4" fill="#3a3d2c"/><rect x="404.0" y="673.4" width="3.7" height="3.0" fill="#3a3d2c"/><rect x="469.8" y="685.0" width="3.2" height="3.2" fill="#a9ad86"/><rect x="472.3" y="684.5" width="3.0" height="4.0" fill="#2a2d20"/><rect x="408.7" y="634.8" width="4.5" height="2.0" fill="#c9cba6"/><rect x="459.9" y="695.9" width="2.0" height="1.9" fill="#c0c49c"/><rect x="424.5" y="688.6" width="1.8" height="2.4" fill="#cfd2ae"/><rect x="412.0" y="635.2" width="3.3" height="4.3" fill="#3a3d2c"/><rect x="410.4" y="645.7" width="2.5" height="3.4" fill="#c9cba6"/><rect x="434.7" y="639.1" width="2.1" height="3.4" fill="#b4b890"/><rect x="410.6" y="627.5" width="4.3" height="2.1" fill="#2a2d20"/><rect x="465.5" y="698.7" width="2.0" height="3.0" fill="#d6d8b8"/><rect x="414.8" y="684.5" width="2.0" height="2.0" fill="#8f946c"/><rect x="412.0" y="627.8" width="2.1" height="2.4" fill="#d6d8b8"/><rect x="419.8" y="630.5" width="4.2" height="3.8" fill="#b4b890"/><rect x="459.2" y="686.4" width="2.8" height="3.1" fill="#8f946c"/><rect x="472.7" y="674.9" width="2.9" height="3.0" fill="#a9ad86"/><rect x="416.0" y="693.5" width="4.4" height="3.5" fill="#8f946c"/><rect x="465.8" y="699.5" width="2.7" height="4.5" fill="#3a3d2c"/><rect x="424.2" y="693.6" width="3.1" height="2.8" fill="#b4b890"/><rect x="429.6" y="654.4" width="2.8" height="2.6" fill="#c9cba6"/><rect x="421.2" y="616.8" width="3.8" height="2.2" fill="#3a3d2c"/><rect x="435.2" y="671.4" width="2.3" height="4.1" fill="#d6d8b8"/><rect x="416.8" y="641.8" width="2.3" height="4.2" fill="#8f946c"/><rect x="421.9" y="649.7" width="2.8" height="3.1" fill="#3a3d2c"/><rect x="455.7" y="655.3" width="4.6" height="3.8" fill="#c9cba6"/><rect x="411.2" y="641.8" width="3.2" height="4.2" fill="#8f946c"/><rect x="471.2" y="688.2" width="4.1" height="2.8" fill="#a9ad86"/><rect x="452.9" y="623.1" width="1.9" height="2.6" fill="#b4b890"/><rect x="416.2" y="695.4" width="3.4" height="2.5" fill="#8f946c"/><rect x="445.2" y="624.3" width="2.4" height="3.2" fill="#d6d8b8"/><rect x="418.0" y="620.7" width="2.7" height="3.2" fill="#c0c49c"/><rect x="432.9" y="698.0" width="3.2" height="2.3" fill="#cfd2ae"/><rect x="406.8" y="687.2" width="2.3" height="2.8" fill="#c9cba6"/><rect x="398.4" y="642.3" width="3.7" height="2.4" fill="#a9ad86"/><rect x="433.7" y="674.5" width="2.8" height="3.4" fill="#cfd2ae"/><rect x="469.4" y="676.1" width="2.4" height="4.3" fill="#c9cba6"/><rect x="443.7" y="701.2" width="3.2" height="2.8" fill="#8f946c"/><rect x="437.9" y="658.7" width="3.9" height="3.4" fill="#a9ad86"/><rect x="437.3" y="648.3" width="2.5" height="4.6" fill="#c0c49c"/><rect x="452.1" y="638.2" width="4.3" height="2.4" fill="#d6d8b8"/><rect x="417.6" y="692.1" width="4.5" height="3.0" fill="#2a2d20"/><rect x="420.2" y="615.6" width="4.4" height="2.4" fill="#b4b890"/><rect x="426.1" y="674.3" width="3.2" height="2.6" fill="#cfd2ae"/><rect x="417.0" y="621.8" width="2.8" height="2.9" fill="#d6d8b8"/><rect x="441.0" y="664.8" width="2.9" height="3.1" fill="#1a1c14"/><rect x="468.9" y="708.8" width="1.9" height="3.6" fill="#1a1c14"/><rect x="440.7" y="654.4" width="3.8" height="4.4" fill="#15160f"/><rect x="443.7" y="664.3" width="2.3" height="3.4" fill="#15160f"/><rect x="398.6" y="682.1" width="2.5" height="3.6" fill="#15160f"/><rect x="443.2" y="695.8" width="3.9" height="2.8" fill="#15160f"/><rect x="408.5" y="651.2" width="4.5" height="3.4" fill="#c9cba6"/><rect x="415.1" y="698.5" width="3.0" height="2.3" fill="#c9cba6"/><rect x="412.8" y="646.6" width="2.1" height="2.5" fill="#15160f"/><rect x="410.2" y="702.4" width="3.3" height="2.5" fill="#cfd2ae"/><rect x="422.0" y="659.7" width="4.5" height="3.5" fill="#3a3d2c"/><rect x="404.7" y="644.4" width="3.2" height="2.3" fill="#a9ad86"/><rect x="442.0" y="642.7" width="2.0" height="3.8" fill="#1a1c14"/><rect x="402.8" y="645.2" width="2.9" height="3.1" fill="#15160f"/><rect x="441.0" y="667.7" width="2.3" height="4.5" fill="#cfd2ae"/><rect x="434.5" y="645.5" width="4.0" height="2.3" fill="#8f946c"/><rect x="447.8" y="622.7" width="3.4" height="4.0" fill="#c9cba6"/><rect x="398.8" y="654.0" width="2.7" height="2.1" fill="#15160f"/><rect x="430.1" y="697.4" width="3.9" height="3.1" fill="#cfd2ae"/><rect x="407.4" y="618.9" width="2.3" height="4.0" fill="#cfd2ae"/><rect x="482.5" y="699.7" width="2.1" height="2.1" fill="#d6d8b8"/><rect x="427.7" y="638.1" width="2.9" height="2.9" fill="#2a2d20"/><rect x="458.5" y="635.9" width="3.6" height="2.9" fill="#2a2d20"/><rect x="454.9" y="704.9" width="3.8" height="2.7" fill="#8f946c"/><rect x="447.3" y="653.4" width="3.7" height="4.1" fill="#15160f"/><rect x="442.3" y="696.6" width="1.9" height="2.7" fill="#1a1c14"/><rect x="426.4" y="668.4" width="4.2" height="2.4" fill="#a9ad86"/><rect x="464.5" y="670.1" width="2.0" height="3.5" fill="#1a1c14"/><rect x="428.6" y="680.5" width="2.1" height="1.8" fill="#2a2d20"/><rect x="425.6" y="691.1" width="2.1" height="4.0" fill="#d6d8b8"/><rect x="424.6" y="643.9" width="3.3" height="3.6" fill="#8f946c"/><rect x="457.1" y="709.1" width="2.3" height="2.3" fill="#1a1c14"/><rect x="433.8" y="659.9" width="2.2" height="2.7" fill="#b4b890"/><rect x="465.4" y="679.5" width="3.5" height="1.9" fill="#8f946c"/><rect x="464.1" y="627.7" width="3.2" height="4.4" fill="#cfd2ae"/><rect x="406.8" y="642.3" width="2.6" height="3.9" fill="#d6d8b8"/><rect x="411.7" y="629.3" width="3.8" height="2.7" fill="#c9cba6"/><rect x="418.0" y="659.6" width="4.0" height="4.1" fill="#c0c49c"/><rect x="430.0" y="614.4" width="3.3" height="3.6" fill="#cfd2ae"/><rect x="425.4" y="684.8" width="3.0" height="4.5" fill="#b4b890"/><rect x="407.0" y="629.2" width="3.7" height="3.1" fill="#1a1c14"/><rect x="449.5" y="664.9" width="2.3" height="4.1" fill="#c9cba6"/><rect x="406.0" y="628.7" width="2.8" height="3.0" fill="#a9ad86"/><rect x="424.8" y="684.5" width="3.1" height="3.7" fill="#3a3d2c"/><rect x="441.1" y="666.7" width="2.1" height="4.2" fill="#8f946c"/><rect x="451.2" y="616.6" width="2.8" height="2.2" fill="#c9cba6"/><rect x="437.5" y="684.8" width="3.0" height="3.1" fill="#cfd2ae"/><rect x="442.5" y="676.5" width="3.6" height="3.3" fill="#b4b890"/><rect x="437.0" y="683.0" width="2.1" height="2.4" fill="#15160f"/><rect x="449.0" y="679.0" width="2.1" height="2.1" fill="#c0c49c"/><rect x="440.1" y="702.3" width="2.1" height="3.2" fill="#1a1c14"/><rect x="450.5" y="676.0" width="2.6" height="3.5" fill="#c9cba6"/><rect x="433.4" y="632.3" width="4.0" height="4.5" fill="#8f946c"/><rect x="440.2" y="684.2" width="3.1" height="3.4" fill="#15160f"/><rect x="410.4" y="658.6" width="2.9" height="4.5" fill="#a9ad86"/><rect x="429.9" y="685.0" width="2.7" height="2.0" fill="#1a1c14"/><rect x="407.3" y="709.0" width="2.5" height="4.1" fill="#8f946c"/><rect x="421.3" y="614.6" width="4.2" height="3.0" fill="#15160f"/><rect x="459.7" y="702.2" width="2.8" height="3.8" fill="#3a3d2c"/><rect x="418.2" y="691.3" width="2.6" height="3.6" fill="#15160f"/><rect x="423.0" y="670.6" width="4.4" height="3.1" fill="#cfd2ae"/><rect x="449.0" y="660.7" width="4.2" height="1.9" fill="#cfd2ae"/><rect x="409.3" y="670.3" width="2.1" height="3.3" fill="#c9cba6"/><rect x="414.5" y="626.7" width="2.8" height="3.7" fill="#3a3d2c"/><rect x="444.6" y="632.1" width="2.6" height="4.1" fill="#d6d8b8"/><rect x="413.3" y="677.0" width="4.5" height="3.9" fill="#a9ad86"/><rect x="407.3" y="622.5" width="2.4" height="4.4" fill="#1a1c14"/><rect x="426.9" y="697.6" width="4.1" height="2.4" fill="#8f946c"/><rect x="407.9" y="700.2" width="2.9" height="3.1" fill="#3a3d2c"/><rect x="459.9" y="704.3" width="1.8" height="2.7" fill="#cfd2ae"/><rect x="463.9" y="679.4" width="4.0" height="3.7" fill="#1a1c14"/><rect x="463.1" y="652.8" width="2.4" height="3.2" fill="#d6d8b8"/><rect x="402.9" y="635.3" width="3.0" height="3.2" fill="#cfd2ae"/><rect x="402.9" y="629.4" width="2.1" height="3.2" fill="#cfd2ae"/><rect x="457.6" y="705.7" width="4.3" height="3.0" fill="#a9ad86"/><rect x="443.8" y="649.0" width="3.6" height="4.4" fill="#c9cba6"/><rect x="449.5" y="672.6" width="3.5" height="3.1" fill="#1a1c14"/><rect x="432.0" y="658.5" width="2.7" height="4.4" fill="#c0c49c"/><rect x="444.5" y="661.6" width="4.4" height="4.3" fill="#2a2d20"/><rect x="475.9" y="687.0" width="2.5" height="2.1" fill="#15160f"/><rect x="457.5" y="644.5" width="3.4" height="2.2" fill="#15160f"/><rect x="401.6" y="676.3" width="2.6" height="1.9" fill="#c0c49c"/><rect x="426.2" y="638.6" width="4.3" height="2.8" fill="#d6d8b8"/><rect x="441.4" y="638.7" width="4.6" height="3.6" fill="#1a1c14"/><rect x="457.1" y="636.9" width="4.1" height="2.7" fill="#2a2d20"/><rect x="437.3" y="698.2" width="2.2" height="2.5" fill="#1a1c14"/><rect x="408.5" y="631.3" width="2.2" height="4.1" fill="#1a1c14"/><rect x="480.8" y="689.7" width="2.7" height="4.3" fill="#c0c49c"/><rect x="413.4" y="689.1" width="4.0" height="3.8" fill="#2a2d20"/><rect x="420.1" y="710.2" width="2.0" height="2.0" fill="#8f946c"/><rect x="414.8" y="660.1" width="3.1" height="3.5" fill="#3a3d2c"/><rect x="409.1" y="650.2" width="2.3" height="2.5" fill="#c0c49c"/><rect x="413.3" y="669.1" width="2.5" height="2.8" fill="#2a2d20"/><rect x="416.2" y="697.8" width="1.9" height="3.6" fill="#1a1c14"/><rect x="406.2" y="668.0" width="4.5" height="3.0" fill="#a9ad86"/><rect x="459.6" y="664.0" width="4.1" height="4.5" fill="#d6d8b8"/><rect x="442.5" y="624.2" width="3.3" height="2.8" fill="#c9cba6"/><rect x="430.4" y="660.6" width="2.6" height="2.3" fill="#15160f"/><rect x="437.1" y="645.9" width="2.4" height="1.9" fill="#cfd2ae"/><rect x="429.7" y="698.9" width="3.1" height="3.2" fill="#cfd2ae"/><rect x="464.6" y="690.0" width="2.2" height="3.0" fill="#c9cba6"/><rect x="429.1" y="632.6" width="2.4" height="2.7" fill="#c9cba6"/><rect x="428.2" y="635.7" width="1.9" height="3.4" fill="#3a3d2c"/><rect x="411.2" y="659.8" width="4.3" height="2.4" fill="#3a3d2c"/><rect x="413.0" y="621.0" width="4.2" height="4.3" fill="#a9ad86"/><rect x="395.3" y="690.3" width="3.8" height="3.0" fill="#c9cba6"/><rect x="436.2" y="675.0" width="4.5" height="3.7" fill="#c0c49c"/><rect x="424.4" y="654.8" width="3.6" height="3.0" fill="#3a3d2c"/><rect x="430.4" y="645.1" width="2.4" height="4.3" fill="#cfd2ae"/><rect x="403.9" y="673.6" width="3.1" height="3.2" fill="#1a1c14"/><rect x="447.0" y="686.6" width="2.2" height="2.3" fill="#8f946c"/><rect x="455.9" y="681.0" width="3.2" height="2.9" fill="#1a1c14"/><rect x="401.6" y="671.2" width="2.6" height="2.0" fill="#1a1c14"/><rect x="435.0" y="646.5" width="4.2" height="3.7" fill="#15160f"/><rect x="453.8" y="695.3" width="3.4" height="3.4" fill="#c0c49c"/><rect x="422.0" y="661.6" width="3.8" height="2.7" fill="#cfd2ae"/><rect x="434.9" y="640.3" width="2.8" height="4.2" fill="#1a1c14"/><rect x="440.1" y="645.9" width="2.4" height="2.9" fill="#d6d8b8"/><rect x="442.5" y="670.6" width="1.9" height="3.0" fill="#d6d8b8"/><rect x="429.9" y="649.4" width="2.7" height="4.4" fill="#15160f"/><rect x="401.0" y="693.7" width="2.3" height="3.0" fill="#b4b890"/><rect x="439.7" y="657.9" width="2.5" height="3.0" fill="#d6d8b8"/><rect x="437.3" y="707.4" width="4.2" height="3.3" fill="#15160f"/><rect x="419.8" y="642.1" width="4.1" height="3.8" fill="#3a3d2c"/><rect x="441.8" y="631.9" width="2.0" height="3.8" fill="#a9ad86"/><rect x="429.1" y="631.8" width="2.5" height="1.8" fill="#cfd2ae"/><rect x="407.7" y="644.9" width="2.0" height="3.1" fill="#d6d8b8"/><rect x="418.4" y="660.7" width="2.4" height="3.5" fill="#a9ad86"/><rect x="403.9" y="701.0" width="4.4" height="2.9" fill="#b4b890"/><rect x="401.4" y="692.1" width="3.4" height="4.6" fill="#15160f"/><rect x="432.8" y="701.6" width="2.5" height="2.2" fill="#cfd2ae"/><rect x="458.7" y="694.7" width="3.3" height="3.1" fill="#c0c49c"/><rect x="457.4" y="642.1" width="4.4" height="3.8" fill="#3a3d2c"/><rect x="463.6" y="635.6" width="3.6" height="3.0" fill="#d6d8b8"/><rect x="425.6" y="688.0" width="2.0" height="2.8" fill="#3a3d2c"/><rect x="408.0" y="702.2" width="3.2" height="2.6" fill="#15160f"/><rect x="447.7" y="639.8" width="4.3" height="2.0" fill="#15160f"/><rect x="449.0" y="687.7" width="3.9" height="4.5" fill="#3a3d2c"/><rect x="410.5" y="624.2" width="2.9" height="3.3" fill="#15160f"/><rect x="418.4" y="709.1" width="3.4" height="4.2" fill="#2a2d20"/><rect x="457.7" y="653.5" width="3.8" height="2.7" fill="#c0c49c"/><rect x="457.6" y="672.5" width="2.8" height="3.6" fill="#2a2d20"/><rect x="449.9" y="637.6" width="3.9" height="2.7" fill="#c9cba6"/><rect x="473.5" y="688.7" width="3.4" height="3.7" fill="#c9cba6"/><rect x="470.9" y="678.2" width="3.0" height="3.9" fill="#c0c49c"/><rect x="462.6" y="641.0" width="3.9" height="2.2" fill="#b4b890"/><rect x="457.1" y="647.8" width="2.3" height="3.4" fill="#a9ad86"/><rect x="459.1" y="666.5" width="3.9" height="1.9" fill="#2a2d20"/><rect x="447.4" y="702.6" width="2.3" height="2.9" fill="#8f946c"/><rect x="482.8" y="702.7" width="2.2" height="4.3" fill="#a9ad86"/><rect x="401.1" y="667.1" width="2.9" height="3.8" fill="#2a2d20"/><rect x="466.3" y="683.6" width="4.2" height="4.4" fill="#d6d8b8"/><rect x="428.9" y="616.6" width="4.1" height="4.4" fill="#c0c49c"/><rect x="407.6" y="629.3" width="1.9" height="2.0" fill="#1a1c14"/><rect x="431.3" y="691.9" width="1.9" height="4.0" fill="#c0c49c"/><rect x="429.1" y="689.6" width="4.1" height="2.2" fill="#cfd2ae"/><rect x="445.7" y="698.4" width="2.8" height="3.5" fill="#d6d8b8"/><rect x="468.4" y="689.3" width="3.7" height="2.7" fill="#cfd2ae"/><rect x="471.0" y="704.5" width="4.5" height="4.1" fill="#c9cba6"/><rect x="420.8" y="652.1" width="4.2" height="1.9" fill="#c9cba6"/><rect x="419.3" y="636.2" width="4.5" height="4.0" fill="#cfd2ae"/><rect x="451.7" y="687.9" width="3.2" height="3.9" fill="#3a3d2c"/><rect x="404.2" y="630.5" width="2.7" height="3.5" fill="#1a1c14"/><rect x="444.2" y="705.5" width="2.4" height="4.2" fill="#c9cba6"/><rect x="426.3" y="616.9" width="4.3" height="3.0" fill="#b4b890"/><rect x="416.5" y="660.5" width="2.7" height="4.5" fill="#3a3d2c"/><rect x="414.6" y="683.2" width="2.8" height="4.2" fill="#b4b890"/><rect x="432.4" y="618.5" width="3.7" height="4.0" fill="#3a3d2c"/><rect x="408.5" y="632.7" width="2.8" height="2.5" fill="#8f946c"/><rect x="417.2" y="655.6" width="3.3" height="2.8" fill="#cfd2ae"/><rect x="475.8" y="694.3" width="3.8" height="2.5" fill="#d6d8b8"/><rect x="455.9" y="678.0" width="3.9" height="3.9" fill="#8f946c"/><rect x="429.3" y="665.5" width="4.0" height="2.8" fill="#a9ad86"/><rect x="447.0" y="678.3" width="3.9" height="2.6" fill="#b4b890"/><rect x="425.8" y="611.2" width="2.4" height="3.1" fill="#b4b890"/><rect x="425.2" y="633.8" width="2.1" height="3.3" fill="#c9cba6"/><rect x="420.4" y="646.4" width="2.0" height="2.2" fill="#c9cba6"/><rect x="446.8" y="694.8" width="3.7" height="2.9" fill="#15160f"/><rect x="402.9" y="703.0" width="4.3" height="3.6" fill="#d6d8b8"/><rect x="413.3" y="636.7" width="4.0" height="4.2" fill="#3a3d2c"/><rect x="420.4" y="618.1" width="3.2" height="3.1" fill="#a9ad86"/><rect x="433.3" y="659.8" width="2.6" height="2.7" fill="#1a1c14"/><rect x="438.7" y="631.8" width="2.5" height="4.3" fill="#2a2d20"/><rect x="453.2" y="699.8" width="4.3" height="2.9" fill="#d6d8b8"/><rect x="402.3" y="625.4" width="3.3" height="2.7" fill="#c9cba6"/><rect x="449.6" y="679.5" width="4.4" height="2.8" fill="#d6d8b8"/><rect x="450.2" y="659.6" width="3.3" height="1.9" fill="#1a1c14"/><rect x="409.2" y="691.1" width="4.1" height="3.5" fill="#2a2d20"/><rect x="412.9" y="689.3" width="3.6" height="1.9" fill="#2a2d20"/><rect x="438.7" y="697.9" width="3.7" height="3.6" fill="#3a3d2c"/><rect x="428.2" y="650.5" width="4.6" height="2.7" fill="#c9cba6"/><rect x="446.9" y="656.1" width="3.4" height="3.7" fill="#1a1c14"/><rect x="424.3" y="672.1" width="2.3" height="4.4" fill="#a9ad86"/><rect x="440.5" y="694.0" width="4.2" height="4.0" fill="#15160f"/><rect x="431.7" y="646.1" width="4.0" height="2.6" fill="#2a2d20"/><rect x="417.4" y="612.3" width="3.7" height="2.7" fill="#15160f"/><rect x="409.8" y="630.7" width="2.2" height="3.7" fill="#1a1c14"/><rect x="443.6" y="664.8" width="1.8" height="2.9" fill="#2a2d20"/><rect x="402.7" y="620.7" width="2.3" height="3.8" fill="#c0c49c"/><rect x="446.0" y="644.1" width="3.8" height="2.4" fill="#cfd2ae"/><rect x="449.5" y="708.2" width="3.9" height="4.0" fill="#c9cba6"/></g>
<g filter="url(#b1)"><ellipse cx="640.0" cy="615.0" rx="28.0" ry="26.0" fill="#7f8464" opacity=".45"/><ellipse cx="670.0" cy="610.0" rx="30.0" ry="24.0" fill="#7f8464" opacity=".45"/><ellipse cx="655.0" cy="595.0" rx="26.0" ry="14.0" fill="#7f8464" opacity=".45"/><ellipse cx="625.0" cy="630.0" rx="16.0" ry="16.0" fill="#7f8464" opacity=".45"/><ellipse cx="690.0" cy="625.0" rx="16.0" ry="18.0" fill="#7f8464" opacity=".45"/><ellipse cx="650.0" cy="638.0" rx="30.0" ry="12.0" fill="#7f8464" opacity=".45"/><rect x="691.2" y="633.9" width="4.2" height="2.5" fill="#a9ad86"/><rect x="671.1" y="639.1" width="4.5" height="3.3" fill="#3a3d2c"/><rect x="651.4" y="598.4" width="4.2" height="2.8" fill="#c9cba6"/><rect x="649.2" y="645.2" width="3.4" height="2.5" fill="#d6d8b8"/><rect x="619.9" y="616.8" width="3.7" height="2.3" fill="#3a3d2c"/><rect x="697.1" y="638.6" width="4.3" height="3.9" fill="#3a3d2c"/><rect x="686.6" y="604.9" width="2.3" height="3.9" fill="#15160f"/><rect x="678.9" y="613.1" width="2.5" height="2.6" fill="#3a3d2c"/><rect x="656.8" y="617.2" width="3.7" height="3.1" fill="#8f946c"/><rect x="698.1" y="604.7" width="3.8" height="3.2" fill="#3a3d2c"/><rect x="628.6" y="602.7" width="4.3" height="3.5" fill="#d6d8b8"/><rect x="684.8" y="614.5" width="4.5" height="3.8" fill="#2a2d20"/><rect x="657.4" y="617.3" width="3.5" height="2.9" fill="#a9ad86"/><rect x="680.6" y="615.2" width="4.4" height="3.5" fill="#8f946c"/><rect x="613.7" y="640.4" width="4.6" height="2.1" fill="#1a1c14"/><rect x="642.7" y="597.0" width="2.0" height="4.5" fill="#c9cba6"/><rect x="632.1" y="639.8" width="3.9" height="3.3" fill="#d6d8b8"/><rect x="687.0" y="596.8" width="1.8" height="4.4" fill="#c9cba6"/><rect x="670.0" y="634.8" width="2.7" height="1.9" fill="#2a2d20"/><rect x="651.8" y="636.2" width="4.3" height="3.9" fill="#c9cba6"/><rect x="694.0" y="631.6" width="4.5" height="2.1" fill="#15160f"/><rect x="658.9" y="637.4" width="3.2" height="2.2" fill="#15160f"/><rect x="667.8" y="609.9" width="3.8" height="4.5" fill="#c9cba6"/><rect x="674.4" y="597.2" width="2.3" height="2.1" fill="#d6d8b8"/><rect x="670.8" y="616.6" width="4.6" height="2.5" fill="#c9cba6"/><rect x="651.4" y="597.1" width="2.4" height="4.0" fill="#cfd2ae"/><rect x="669.6" y="605.3" width="3.0" height="3.3" fill="#a9ad86"/><rect x="647.7" y="586.4" width="2.5" height="2.1" fill="#c0c49c"/><rect x="659.1" y="613.3" width="3.3" height="2.9" fill="#2a2d20"/><rect x="675.8" y="635.8" width="3.8" height="3.0" fill="#1a1c14"/><rect x="658.2" y="622.2" width="4.3" height="4.4" fill="#c9cba6"/><rect x="665.3" y="648.0" width="2.8" height="3.3" fill="#15160f"/><rect x="700.0" y="624.4" width="3.7" height="4.4" fill="#2a2d20"/><rect x="637.4" y="644.5" width="2.1" height="2.7" fill="#b4b890"/><rect x="691.7" y="629.1" width="4.1" height="2.0" fill="#c9cba6"/><rect x="671.0" y="613.2" width="3.5" height="1.8" fill="#cfd2ae"/><rect x="679.8" y="594.7" width="2.3" height="3.4" fill="#15160f"/><rect x="646.0" y="613.2" width="2.9" height="2.1" fill="#8f946c"/><rect x="692.7" y="626.7" width="3.7" height="1.9" fill="#1a1c14"/><rect x="673.2" y="637.1" width="2.6" height="4.5" fill="#15160f"/><rect x="620.4" y="606.5" width="3.3" height="3.1" fill="#15160f"/><rect x="636.3" y="595.6" width="3.5" height="3.3" fill="#15160f"/><rect x="677.0" y="631.1" width="3.4" height="4.1" fill="#c0c49c"/><rect x="615.8" y="605.1" width="4.1" height="4.3" fill="#d6d8b8"/><rect x="675.5" y="639.5" width="2.2" height="2.6" fill="#c9cba6"/><rect x="629.6" y="629.0" width="2.7" height="2.3" fill="#a9ad86"/><rect x="635.3" y="589.9" width="2.1" height="3.2" fill="#b4b890"/><rect x="679.0" y="597.6" width="3.1" height="3.8" fill="#d6d8b8"/><rect x="685.8" y="621.6" width="3.1" height="3.8" fill="#d6d8b8"/><rect x="688.6" y="607.1" width="2.9" height="2.0" fill="#d6d8b8"/><rect x="633.9" y="597.3" width="3.8" height="3.1" fill="#b4b890"/><rect x="682.1" y="628.0" width="3.3" height="2.3" fill="#1a1c14"/><rect x="689.3" y="607.1" width="4.4" height="2.7" fill="#a9ad86"/><rect x="659.4" y="646.9" width="3.6" height="4.1" fill="#15160f"/><rect x="680.4" y="624.1" width="4.3" height="2.1" fill="#1a1c14"/><rect x="689.2" y="636.3" width="2.6" height="4.4" fill="#1a1c14"/><rect x="665.2" y="615.2" width="2.2" height="3.5" fill="#cfd2ae"/><rect x="650.3" y="597.3" width="2.3" height="3.8" fill="#cfd2ae"/><rect x="641.7" y="646.8" width="4.1" height="3.6" fill="#3a3d2c"/><rect x="683.0" y="614.9" width="4.4" height="3.1" fill="#a9ad86"/><rect x="695.5" y="613.0" width="3.5" height="2.8" fill="#c0c49c"/><rect x="669.8" y="641.3" width="2.0" height="3.2" fill="#d6d8b8"/><rect x="634.8" y="613.5" width="2.8" height="3.3" fill="#c9cba6"/><rect x="645.0" y="611.7" width="2.7" height="3.6" fill="#a9ad86"/><rect x="655.3" y="618.9" width="2.0" height="4.1" fill="#2a2d20"/><rect x="637.0" y="627.1" width="3.6" height="2.9" fill="#2a2d20"/><rect x="670.6" y="607.7" width="4.2" height="2.2" fill="#3a3d2c"/><rect x="657.5" y="584.8" width="2.5" height="3.1" fill="#c9cba6"/><rect x="629.7" y="599.1" width="2.1" height="4.1" fill="#c0c49c"/><rect x="644.7" y="605.7" width="2.8" height="2.7" fill="#8f946c"/><rect x="643.0" y="615.8" width="3.1" height="2.2" fill="#2a2d20"/><rect x="628.0" y="598.8" width="2.1" height="2.5" fill="#d6d8b8"/><rect x="625.3" y="629.6" width="2.3" height="2.2" fill="#8f946c"/><rect x="644.6" y="639.4" width="2.6" height="3.8" fill="#8f946c"/><rect x="666.7" y="622.1" width="3.9" height="3.9" fill="#8f946c"/><rect x="635.7" y="625.3" width="2.0" height="2.7" fill="#a9ad86"/><rect x="655.4" y="597.6" width="3.0" height="2.0" fill="#8f946c"/><rect x="695.6" y="633.7" width="3.0" height="3.3" fill="#a9ad86"/><rect x="630.2" y="641.3" width="3.3" height="3.1" fill="#b4b890"/><rect x="686.0" y="603.2" width="3.0" height="2.5" fill="#d6d8b8"/><rect x="641.0" y="596.7" width="3.8" height="1.9" fill="#1a1c14"/><rect x="701.9" y="627.2" width="2.0" height="2.2" fill="#cfd2ae"/><rect x="692.8" y="610.7" width="2.2" height="3.3" fill="#2a2d20"/><rect x="692.2" y="603.7" width="4.5" height="2.4" fill="#cfd2ae"/><rect x="694.9" y="619.4" width="3.5" height="3.4" fill="#cfd2ae"/><rect x="652.4" y="609.3" width="3.1" height="4.3" fill="#3a3d2c"/><rect x="652.0" y="622.9" width="4.4" height="3.7" fill="#c0c49c"/><rect x="637.2" y="638.6" width="2.5" height="3.7" fill="#c9cba6"/><rect x="640.3" y="640.3" width="1.9" height="4.3" fill="#15160f"/><rect x="630.6" y="614.6" width="1.9" height="3.7" fill="#3a3d2c"/><rect x="640.4" y="618.2" width="2.2" height="3.2" fill="#1a1c14"/><rect x="644.7" y="625.3" width="4.3" height="3.8" fill="#b4b890"/><rect x="657.7" y="647.7" width="3.2" height="4.1" fill="#d6d8b8"/><rect x="638.0" y="600.7" width="3.4" height="3.1" fill="#c0c49c"/><rect x="635.0" y="636.2" width="2.4" height="3.8" fill="#2a2d20"/><rect x="677.3" y="628.0" width="3.5" height="3.9" fill="#c9cba6"/><rect x="627.7" y="607.8" width="3.6" height="3.6" fill="#c9cba6"/><rect x="681.7" y="631.4" width="3.3" height="3.9" fill="#15160f"/><rect x="637.9" y="630.4" width="2.2" height="3.7" fill="#c0c49c"/><rect x="699.5" y="636.0" width="4.5" height="4.3" fill="#c0c49c"/><rect x="653.3" y="600.2" width="2.2" height="2.7" fill="#1a1c14"/><rect x="636.3" y="643.5" width="3.8" height="2.6" fill="#a9ad86"/><rect x="640.0" y="618.9" width="3.5" height="3.9" fill="#b4b890"/><rect x="623.4" y="644.5" width="2.9" height="3.5" fill="#8f946c"/><rect x="668.7" y="622.1" width="2.3" height="3.1" fill="#15160f"/><rect x="664.5" y="601.5" width="2.8" height="3.6" fill="#d6d8b8"/><rect x="654.1" y="636.4" width="3.6" height="4.3" fill="#a9ad86"/><rect x="675.6" y="601.4" width="3.3" height="4.1" fill="#1a1c14"/><rect x="616.0" y="638.0" width="2.4" height="2.7" fill="#c9cba6"/><rect x="638.5" y="597.4" width="2.8" height="3.0" fill="#a9ad86"/><rect x="648.8" y="641.3" width="2.6" height="3.4" fill="#c9cba6"/><rect x="627.6" y="590.3" width="3.6" height="3.1" fill="#c0c49c"/><rect x="686.4" y="596.1" width="2.6" height="4.5" fill="#cfd2ae"/><rect x="677.6" y="617.8" width="3.6" height="3.4" fill="#1a1c14"/><rect x="632.7" y="597.0" width="3.9" height="4.1" fill="#cfd2ae"/><rect x="618.2" y="612.6" width="3.1" height="2.9" fill="#b4b890"/><rect x="627.9" y="595.0" width="3.3" height="4.3" fill="#3a3d2c"/><rect x="667.5" y="619.3" width="2.0" height="3.8" fill="#c9cba6"/><rect x="647.0" y="617.1" width="2.8" height="2.8" fill="#c0c49c"/><rect x="652.9" y="631.4" width="1.9" height="3.1" fill="#2a2d20"/><rect x="638.8" y="618.9" width="2.2" height="2.6" fill="#cfd2ae"/><rect x="683.7" y="626.8" width="2.0" height="3.7" fill="#3a3d2c"/><rect x="650.6" y="588.7" width="3.2" height="2.6" fill="#2a2d20"/><rect x="610.8" y="620.3" width="4.4" height="3.5" fill="#a9ad86"/><rect x="616.9" y="637.6" width="4.0" height="4.4" fill="#8f946c"/><rect x="634.1" y="614.3" width="3.2" height="4.5" fill="#2a2d20"/><rect x="661.1" y="624.3" width="3.0" height="2.5" fill="#b4b890"/><rect x="624.6" y="624.6" width="3.5" height="4.5" fill="#c9cba6"/><rect x="690.4" y="629.2" width="1.9" height="4.2" fill="#2a2d20"/><rect x="704.8" y="621.0" width="2.9" height="4.3" fill="#1a1c14"/><rect x="617.3" y="623.4" width="2.5" height="3.3" fill="#c0c49c"/><rect x="616.5" y="630.6" width="3.2" height="2.6" fill="#c0c49c"/><rect x="658.8" y="618.1" width="3.0" height="4.0" fill="#b4b890"/><rect x="667.1" y="640.4" width="3.0" height="3.2" fill="#a9ad86"/><rect x="621.4" y="609.3" width="2.5" height="3.0" fill="#a9ad86"/><rect x="653.4" y="610.1" width="4.0" height="2.8" fill="#2a2d20"/><rect x="646.3" y="641.5" width="2.6" height="4.2" fill="#b4b890"/><rect x="676.0" y="596.8" width="2.8" height="4.2" fill="#15160f"/><rect x="653.1" y="628.4" width="4.2" height="2.2" fill="#3a3d2c"/><rect x="617.2" y="630.0" width="3.9" height="3.6" fill="#1a1c14"/><rect x="667.0" y="625.4" width="2.1" height="3.9" fill="#15160f"/><rect x="691.0" y="612.4" width="4.4" height="3.4" fill="#8f946c"/><rect x="622.9" y="595.7" width="2.9" height="3.2" fill="#d6d8b8"/><rect x="647.5" y="647.3" width="4.4" height="2.6" fill="#cfd2ae"/><rect x="633.0" y="601.8" width="2.9" height="1.9" fill="#c9cba6"/><rect x="652.4" y="586.7" width="2.7" height="2.7" fill="#8f946c"/><rect x="647.4" y="634.8" width="4.0" height="3.3" fill="#8f946c"/><rect x="655.0" y="625.1" width="3.0" height="2.1" fill="#1a1c14"/><rect x="656.3" y="632.3" width="1.8" height="2.9" fill="#c9cba6"/><rect x="672.4" y="624.6" width="4.3" height="3.6" fill="#c9cba6"/><rect x="664.7" y="594.9" width="2.7" height="2.7" fill="#cfd2ae"/><rect x="685.7" y="607.7" width="3.8" height="3.1" fill="#cfd2ae"/><rect x="634.5" y="616.3" width="2.8" height="2.8" fill="#cfd2ae"/><rect x="643.9" y="638.9" width="3.3" height="3.6" fill="#1a1c14"/><rect x="669.7" y="593.9" width="2.5" height="4.2" fill="#15160f"/><rect x="665.9" y="616.8" width="1.8" height="3.9" fill="#d6d8b8"/><rect x="681.5" y="627.4" width="2.4" height="3.8" fill="#a9ad86"/><rect x="668.8" y="638.1" width="4.4" height="4.6" fill="#d6d8b8"/><rect x="628.2" y="625.2" width="4.0" height="2.4" fill="#15160f"/><rect x="624.9" y="608.1" width="1.8" height="4.3" fill="#c9cba6"/><rect x="637.1" y="621.4" width="2.9" height="2.0" fill="#15160f"/><rect x="653.2" y="588.9" width="4.3" height="3.6" fill="#15160f"/><rect x="633.2" y="644.1" width="2.0" height="4.1" fill="#3a3d2c"/><rect x="659.7" y="638.7" width="4.4" height="3.3" fill="#2a2d20"/><rect x="663.1" y="583.9" width="2.3" height="2.7" fill="#d6d8b8"/><rect x="677.0" y="612.9" width="2.2" height="2.4" fill="#c9cba6"/><rect x="669.1" y="626.3" width="2.1" height="2.3" fill="#a9ad86"/><rect x="689.0" y="594.9" width="2.1" height="2.1" fill="#8f946c"/><rect x="685.1" y="616.4" width="2.2" height="2.2" fill="#cfd2ae"/><rect x="649.2" y="634.5" width="3.3" height="1.9" fill="#2a2d20"/><rect x="607.8" y="626.5" width="3.9" height="2.2" fill="#3a3d2c"/><rect x="675.0" y="614.5" width="2.6" height="4.3" fill="#2a2d20"/><rect x="621.4" y="634.2" width="4.1" height="4.3" fill="#c9cba6"/><rect x="641.9" y="642.3" width="4.5" height="4.0" fill="#d6d8b8"/><rect x="629.3" y="633.2" width="4.1" height="4.6" fill="#1a1c14"/><rect x="695.3" y="628.7" width="3.0" height="3.6" fill="#1a1c14"/><rect x="691.0" y="603.4" width="3.6" height="2.8" fill="#15160f"/><rect x="675.8" y="606.7" width="3.9" height="3.9" fill="#b4b890"/><rect x="670.6" y="624.8" width="2.0" height="4.1" fill="#c0c49c"/><rect x="679.5" y="591.5" width="4.5" height="3.7" fill="#a9ad86"/><rect x="619.2" y="596.0" width="2.9" height="2.1" fill="#a9ad86"/><rect x="629.7" y="604.2" width="1.9" height="2.1" fill="#b4b890"/><rect x="688.7" y="604.8" width="2.7" height="2.4" fill="#1a1c14"/><rect x="644.8" y="601.8" width="2.3" height="4.2" fill="#d6d8b8"/><rect x="688.6" y="621.3" width="4.5" height="2.7" fill="#3a3d2c"/><rect x="663.4" y="615.9" width="3.9" height="4.6" fill="#b4b890"/><rect x="623.7" y="639.2" width="4.0" height="3.1" fill="#2a2d20"/><rect x="649.3" y="630.3" width="2.0" height="1.8" fill="#3a3d2c"/><rect x="652.9" y="584.8" width="3.3" height="3.3" fill="#3a3d2c"/><rect x="643.7" y="586.1" width="4.6" height="3.0" fill="#1a1c14"/><rect x="657.8" y="645.8" width="4.2" height="2.7" fill="#d6d8b8"/><rect x="652.5" y="635.3" width="3.9" height="3.7" fill="#c0c49c"/><rect x="628.4" y="637.8" width="3.0" height="1.9" fill="#c9cba6"/><rect x="645.9" y="636.1" width="4.6" height="3.8" fill="#1a1c14"/><rect x="701.4" y="621.6" width="3.2" height="2.5" fill="#1a1c14"/><rect x="634.4" y="597.9" width="3.6" height="4.5" fill="#c9cba6"/><rect x="658.2" y="632.5" width="4.0" height="2.3" fill="#c9cba6"/><rect x="639.0" y="600.2" width="1.9" height="2.7" fill="#a9ad86"/><rect x="651.6" y="593.8" width="4.5" height="3.0" fill="#2a2d20"/><rect x="638.7" y="609.8" width="2.3" height="3.7" fill="#1a1c14"/><rect x="655.0" y="610.1" width="2.0" height="4.5" fill="#2a2d20"/><rect x="660.2" y="589.6" width="2.8" height="4.5" fill="#c9cba6"/><rect x="672.5" y="635.6" width="3.0" height="3.7" fill="#15160f"/><rect x="684.9" y="630.3" width="2.1" height="1.8" fill="#8f946c"/><rect x="627.0" y="632.8" width="1.9" height="1.9" fill="#3a3d2c"/><rect x="665.8" y="648.7" width="2.9" height="4.3" fill="#c0c49c"/><rect x="670.7" y="592.2" width="2.5" height="4.3" fill="#c9cba6"/><rect x="698.2" y="632.5" width="4.2" height="3.4" fill="#3a3d2c"/><rect x="616.4" y="622.5" width="2.4" height="3.7" fill="#c9cba6"/><rect x="675.3" y="591.4" width="2.3" height="2.1" fill="#c9cba6"/><rect x="626.4" y="596.4" width="3.7" height="4.3" fill="#8f946c"/><rect x="686.4" y="596.9" width="2.8" height="3.7" fill="#c0c49c"/><rect x="627.4" y="607.4" width="2.0" height="4.1" fill="#c9cba6"/><rect x="663.7" y="627.6" width="3.3" height="4.4" fill="#2a2d20"/><rect x="637.9" y="628.4" width="4.5" height="4.6" fill="#2a2d20"/><rect x="657.1" y="588.6" width="2.8" height="4.5" fill="#cfd2ae"/><rect x="649.4" y="627.0" width="4.5" height="2.3" fill="#c0c49c"/><rect x="667.7" y="648.2" width="3.1" height="3.5" fill="#c0c49c"/><rect x="654.9" y="589.5" width="3.1" height="3.3" fill="#1a1c14"/><rect x="631.2" y="597.7" width="4.4" height="3.8" fill="#8f946c"/><rect x="651.1" y="616.2" width="2.4" height="4.1" fill="#1a1c14"/><rect x="617.4" y="620.8" width="3.0" height="3.2" fill="#cfd2ae"/><rect x="697.6" y="599.2" width="2.1" height="4.5" fill="#2a2d20"/><rect x="624.6" y="623.3" width="3.9" height="2.0" fill="#1a1c14"/><rect x="653.7" y="627.0" width="1.8" height="4.3" fill="#cfd2ae"/><rect x="629.2" y="631.3" width="2.0" height="4.3" fill="#a9ad86"/><rect x="634.5" y="635.7" width="2.3" height="2.3" fill="#c0c49c"/><rect x="649.1" y="642.2" width="4.6" height="2.6" fill="#15160f"/><rect x="669.5" y="644.3" width="2.4" height="4.6" fill="#b4b890"/><rect x="626.1" y="615.3" width="3.2" height="3.6" fill="#c0c49c"/><rect x="638.6" y="639.8" width="1.9" height="3.1" fill="#15160f"/><rect x="676.6" y="596.2" width="2.9" height="3.6" fill="#3a3d2c"/><rect x="673.2" y="618.1" width="2.6" height="3.1" fill="#b4b890"/><rect x="630.4" y="629.4" width="4.3" height="2.5" fill="#d6d8b8"/><rect x="660.6" y="587.7" width="3.4" height="1.9" fill="#b4b890"/><rect x="698.5" y="632.2" width="3.9" height="2.3" fill="#3a3d2c"/><rect x="656.8" y="604.5" width="3.8" height="4.6" fill="#c0c49c"/><rect x="668.2" y="590.4" width="2.6" height="1.8" fill="#b4b890"/><rect x="627.3" y="598.2" width="4.4" height="2.4" fill="#1a1c14"/><rect x="655.2" y="617.8" width="3.1" height="3.9" fill="#15160f"/><rect x="692.2" y="625.4" width="2.4" height="3.0" fill="#3a3d2c"/><rect x="652.4" y="618.0" width="2.3" height="2.3" fill="#a9ad86"/><rect x="668.9" y="589.0" width="4.2" height="3.2" fill="#3a3d2c"/><rect x="681.9" y="598.8" width="2.7" height="3.5" fill="#b4b890"/><rect x="664.9" y="587.9" width="2.5" height="3.4" fill="#cfd2ae"/><rect x="684.8" y="614.9" width="2.2" height="1.9" fill="#cfd2ae"/><rect x="658.6" y="586.0" width="2.8" height="3.8" fill="#2a2d20"/><rect x="675.3" y="613.4" width="2.7" height="1.8" fill="#1a1c14"/><rect x="692.5" y="635.0" width="4.4" height="2.9" fill="#cfd2ae"/><rect x="649.5" y="624.6" width="2.6" height="3.9" fill="#cfd2ae"/><rect x="671.8" y="594.4" width="4.3" height="3.3" fill="#c0c49c"/><rect x="636.0" y="647.0" width="2.1" height="3.7" fill="#c9cba6"/><rect x="636.5" y="649.4" width="2.5" height="3.2" fill="#2a2d20"/><rect x="693.7" y="618.8" width="3.4" height="3.3" fill="#2a2d20"/><rect x="666.0" y="620.2" width="4.1" height="2.0" fill="#b4b890"/><rect x="621.3" y="602.4" width="3.9" height="3.7" fill="#15160f"/><rect x="692.2" y="598.3" width="1.9" height="3.2" fill="#15160f"/><rect x="660.3" y="626.0" width="3.5" height="2.0" fill="#1a1c14"/><rect x="623.6" y="629.4" width="2.6" height="4.5" fill="#c9cba6"/><rect x="657.6" y="624.0" width="2.6" height="2.5" fill="#b4b890"/><rect x="686.0" y="621.3" width="3.7" height="4.3" fill="#a9ad86"/><rect x="616.4" y="609.3" width="2.9" height="2.2" fill="#c0c49c"/><rect x="626.5" y="608.9" width="3.7" height="3.0" fill="#c9cba6"/><rect x="648.1" y="583.4" width="4.5" height="3.7" fill="#15160f"/><rect x="671.3" y="613.1" width="3.8" height="4.1" fill="#15160f"/><rect x="696.7" y="615.9" width="2.4" height="3.1" fill="#2a2d20"/><rect x="660.0" y="647.2" width="2.4" height="4.4" fill="#8f946c"/><rect x="688.2" y="595.1" width="3.9" height="3.6" fill="#1a1c14"/><rect x="657.6" y="589.1" width="2.4" height="2.6" fill="#1a1c14"/><rect x="655.6" y="614.5" width="3.7" height="3.2" fill="#a9ad86"/><rect x="634.7" y="589.4" width="1.9" height="3.0" fill="#15160f"/><rect x="660.0" y="591.9" width="3.5" height="3.3" fill="#1a1c14"/><rect x="671.4" y="629.9" width="3.7" height="2.2" fill="#a9ad86"/><rect x="643.8" y="640.0" width="4.3" height="3.4" fill="#3a3d2c"/><rect x="628.1" y="622.0" width="3.3" height="4.0" fill="#8f946c"/><rect x="675.0" y="637.0" width="3.4" height="4.5" fill="#2a2d20"/><rect x="671.0" y="583.7" width="1.8" height="3.3" fill="#15160f"/><rect x="672.0" y="590.9" width="3.5" height="3.9" fill="#d6d8b8"/><rect x="694.0" y="602.6" width="4.4" height="1.8" fill="#cfd2ae"/><rect x="659.4" y="636.4" width="2.9" height="3.9" fill="#c9cba6"/><rect x="627.5" y="595.0" width="1.9" height="2.5" fill="#2a2d20"/><rect x="615.8" y="630.9" width="3.8" height="2.3" fill="#1a1c14"/><rect x="663.8" y="596.7" width="3.6" height="2.4" fill="#15160f"/><rect x="620.0" y="620.5" width="4.3" height="2.3" fill="#8f946c"/><rect x="642.4" y="614.2" width="4.4" height="3.1" fill="#2a2d20"/><rect x="670.9" y="599.0" width="4.1" height="1.9" fill="#cfd2ae"/><rect x="661.6" y="603.0" width="2.5" height="2.4" fill="#1a1c14"/><rect x="684.1" y="631.8" width="2.2" height="2.7" fill="#2a2d20"/><rect x="621.2" y="618.3" width="2.9" height="2.8" fill="#a9ad86"/><rect x="656.8" y="614.1" width="4.0" height="3.7" fill="#c9cba6"/><rect x="691.2" y="624.5" width="2.5" height="3.7" fill="#cfd2ae"/><rect x="679.9" y="620.2" width="4.0" height="3.0" fill="#cfd2ae"/><rect x="660.0" y="589.3" width="3.6" height="2.1" fill="#1a1c14"/><rect x="661.6" y="613.1" width="2.9" height="4.0" fill="#8f946c"/><rect x="621.2" y="636.6" width="4.0" height="2.1" fill="#2a2d20"/><rect x="641.0" y="637.5" width="1.9" height="3.8" fill="#8f946c"/><rect x="683.4" y="618.5" width="4.6" height="3.3" fill="#8f946c"/><rect x="657.7" y="601.0" width="3.3" height="1.9" fill="#15160f"/><rect x="689.6" y="596.1" width="1.9" height="4.0" fill="#8f946c"/><rect x="629.1" y="603.3" width="2.1" height="3.1" fill="#15160f"/><rect x="613.2" y="623.9" width="3.3" height="2.2" fill="#3a3d2c"/><rect x="654.8" y="637.6" width="3.5" height="3.1" fill="#8f946c"/><rect x="684.3" y="588.1" width="4.4" height="4.1" fill="#cfd2ae"/><rect x="689.0" y="610.2" width="2.7" height="2.7" fill="#c0c49c"/><rect x="621.4" y="626.9" width="4.5" height="4.0" fill="#8f946c"/><rect x="615.4" y="624.7" width="2.2" height="4.0" fill="#c0c49c"/><rect x="630.9" y="645.1" width="3.5" height="3.8" fill="#2a2d20"/><rect x="645.1" y="639.8" width="3.2" height="3.1" fill="#2a2d20"/><rect x="683.5" y="596.3" width="3.7" height="4.0" fill="#2a2d20"/><rect x="652.5" y="584.1" width="4.4" height="4.2" fill="#2a2d20"/><rect x="643.0" y="600.0" width="3.2" height="2.2" fill="#15160f"/><rect x="665.6" y="604.8" width="3.5" height="2.6" fill="#3a3d2c"/><rect x="645.3" y="634.9" width="3.6" height="2.8" fill="#3a3d2c"/><rect x="646.3" y="583.2" width="4.1" height="3.8" fill="#a9ad86"/><rect x="620.2" y="640.6" width="4.4" height="3.4" fill="#c0c49c"/><rect x="632.8" y="617.7" width="4.1" height="3.6" fill="#b4b890"/><rect x="651.9" y="615.2" width="2.5" height="3.8" fill="#c9cba6"/><rect x="680.7" y="633.1" width="3.9" height="3.6" fill="#a9ad86"/><rect x="659.5" y="636.4" width="3.5" height="4.1" fill="#2a2d20"/><rect x="627.0" y="642.6" width="2.4" height="4.3" fill="#15160f"/><rect x="655.4" y="633.5" width="3.2" height="2.5" fill="#d6d8b8"/><rect x="632.7" y="611.4" width="4.2" height="2.8" fill="#a9ad86"/><rect x="674.7" y="604.4" width="1.8" height="2.8" fill="#2a2d20"/><rect x="630.3" y="587.1" width="3.7" height="3.4" fill="#c9cba6"/><rect x="651.1" y="636.4" width="3.7" height="3.5" fill="#2a2d20"/><rect x="633.5" y="632.6" width="2.9" height="1.9" fill="#3a3d2c"/><rect x="672.0" y="602.1" width="3.0" height="3.3" fill="#3a3d2c"/><rect x="635.2" y="590.8" width="2.2" height="3.4" fill="#a9ad86"/><rect x="643.3" y="615.6" width="4.6" height="2.5" fill="#cfd2ae"/><rect x="695.1" y="599.8" width="4.0" height="4.5" fill="#cfd2ae"/><rect x="691.4" y="600.7" width="3.3" height="4.3" fill="#cfd2ae"/><rect x="667.6" y="646.5" width="3.6" height="1.9" fill="#a9ad86"/><rect x="608.7" y="622.7" width="2.4" height="3.1" fill="#8f946c"/><rect x="662.8" y="630.4" width="2.7" height="2.8" fill="#15160f"/><rect x="639.9" y="620.7" width="3.6" height="2.5" fill="#a9ad86"/><rect x="681.7" y="592.9" width="3.0" height="4.5" fill="#3a3d2c"/><rect x="668.6" y="633.0" width="2.1" height="2.9" fill="#1a1c14"/><rect x="660.4" y="608.2" width="2.2" height="4.3" fill="#b4b890"/><rect x="684.4" y="607.5" width="2.7" height="2.6" fill="#a9ad86"/><rect x="630.9" y="640.8" width="2.6" height="1.8" fill="#2a2d20"/><rect x="644.0" y="646.9" width="3.8" height="3.9" fill="#b4b890"/><rect x="628.6" y="635.6" width="1.9" height="3.3" fill="#cfd2ae"/><rect x="663.5" y="643.1" width="2.3" height="4.2" fill="#d6d8b8"/><rect x="661.1" y="582.7" width="3.0" height="3.0" fill="#c0c49c"/><rect x="633.6" y="592.7" width="3.9" height="2.0" fill="#3a3d2c"/><rect x="618.6" y="637.6" width="4.0" height="3.1" fill="#c9cba6"/><rect x="647.5" y="592.0" width="3.4" height="2.0" fill="#cfd2ae"/><rect x="700.9" y="631.5" width="3.3" height="3.5" fill="#b4b890"/><rect x="654.3" y="648.0" width="2.2" height="3.2" fill="#c9cba6"/><rect x="654.4" y="610.1" width="3.8" height="2.4" fill="#d6d8b8"/><rect x="635.2" y="609.3" width="4.1" height="2.4" fill="#b4b890"/><rect x="646.2" y="605.3" width="3.2" height="3.3" fill="#d6d8b8"/><rect x="625.6" y="604.1" width="2.0" height="3.4" fill="#cfd2ae"/><rect x="665.5" y="613.2" width="4.0" height="4.2" fill="#15160f"/><rect x="666.4" y="602.3" width="3.4" height="3.9" fill="#15160f"/><rect x="659.5" y="592.8" width="4.4" height="2.3" fill="#2a2d20"/><rect x="692.4" y="634.9" width="4.0" height="3.8" fill="#2a2d20"/><rect x="668.4" y="643.6" width="2.8" height="3.0" fill="#c9cba6"/><rect x="690.8" y="627.9" width="2.4" height="3.6" fill="#2a2d20"/><rect x="651.4" y="606.0" width="2.9" height="3.8" fill="#15160f"/><rect x="656.6" y="593.3" width="3.4" height="4.3" fill="#2a2d20"/><rect x="626.7" y="592.2" width="3.4" height="2.0" fill="#8f946c"/><rect x="654.3" y="631.9" width="4.1" height="4.4" fill="#1a1c14"/><rect x="648.1" y="590.2" width="2.5" height="3.0" fill="#8f946c"/><rect x="624.8" y="638.7" width="3.9" height="4.5" fill="#b4b890"/><rect x="687.5" y="608.1" width="2.4" height="4.1" fill="#b4b890"/><rect x="693.8" y="618.8" width="2.1" height="1.9" fill="#15160f"/><rect x="672.6" y="589.2" width="3.6" height="2.8" fill="#8f946c"/><rect x="698.9" y="619.0" width="4.5" height="2.4" fill="#2a2d20"/><rect x="635.3" y="591.5" width="2.5" height="3.5" fill="#c9cba6"/><rect x="703.6" y="621.6" width="2.3" height="3.0" fill="#a9ad86"/><rect x="645.5" y="641.3" width="2.7" height="2.2" fill="#c0c49c"/><rect x="670.4" y="608.7" width="2.2" height="3.3" fill="#2a2d20"/><rect x="690.9" y="618.8" width="4.4" height="2.8" fill="#d6d8b8"/><rect x="659.5" y="607.8" width="4.4" height="2.1" fill="#c0c49c"/><rect x="634.5" y="636.7" width="2.5" height="2.6" fill="#1a1c14"/><rect x="626.9" y="640.6" width="3.6" height="3.2" fill="#b4b890"/><rect x="636.6" y="615.1" width="3.9" height="3.0" fill="#2a2d20"/><rect x="634.8" y="598.7" width="3.7" height="3.8" fill="#c9cba6"/><rect x="633.5" y="644.9" width="1.9" height="4.5" fill="#15160f"/><rect x="646.6" y="592.4" width="4.4" height="3.0" fill="#c0c49c"/><rect x="638.2" y="597.8" width="3.3" height="2.1" fill="#8f946c"/><rect x="636.0" y="588.5" width="3.8" height="4.4" fill="#cfd2ae"/><rect x="649.2" y="589.7" width="2.9" height="3.1" fill="#d6d8b8"/><rect x="644.1" y="618.7" width="4.0" height="3.0" fill="#a9ad86"/><rect x="648.1" y="631.4" width="4.4" height="4.1" fill="#8f946c"/><rect x="693.8" y="618.3" width="4.0" height="3.6" fill="#a9ad86"/><rect x="699.0" y="604.3" width="4.6" height="4.5" fill="#cfd2ae"/><rect x="690.4" y="617.9" width="1.9" height="3.8" fill="#1a1c14"/><rect x="636.4" y="596.6" width="3.0" height="2.0" fill="#c9cba6"/><rect x="679.2" y="591.6" width="3.3" height="4.4" fill="#c0c49c"/><rect x="630.0" y="631.0" width="3.0" height="3.7" fill="#1a1c14"/><rect x="641.1" y="638.2" width="2.3" height="2.7" fill="#c9cba6"/><rect x="647.8" y="624.1" width="3.4" height="4.0" fill="#d6d8b8"/><rect x="692.6" y="592.3" width="4.4" height="3.5" fill="#2a2d20"/><rect x="684.2" y="618.4" width="3.4" height="3.7" fill="#15160f"/><rect x="683.0" y="626.3" width="3.5" height="2.6" fill="#8f946c"/><rect x="640.3" y="622.5" width="1.8" height="4.0" fill="#8f946c"/><rect x="649.5" y="637.3" width="4.0" height="2.4" fill="#c9cba6"/><rect x="646.9" y="645.0" width="2.4" height="3.2" fill="#3a3d2c"/><rect x="677.4" y="606.1" width="4.3" height="3.9" fill="#b4b890"/><rect x="631.3" y="586.7" width="4.4" height="2.4" fill="#1a1c14"/><rect x="631.4" y="601.5" width="3.3" height="4.3" fill="#c0c49c"/><rect x="667.2" y="580.8" width="3.9" height="3.1" fill="#c9cba6"/><rect x="689.4" y="624.8" width="4.5" height="4.4" fill="#c9cba6"/><rect x="631.9" y="593.4" width="3.4" height="3.4" fill="#a9ad86"/><rect x="688.0" y="634.2" width="3.7" height="3.6" fill="#d6d8b8"/><rect x="629.1" y="636.8" width="2.4" height="2.8" fill="#2a2d20"/><rect x="650.1" y="633.8" width="4.4" height="2.3" fill="#c0c49c"/><rect x="642.2" y="607.7" width="2.3" height="1.8" fill="#15160f"/><rect x="692.7" y="591.7" width="3.8" height="2.1" fill="#1a1c14"/><rect x="615.2" y="638.6" width="3.2" height="2.5" fill="#cfd2ae"/><rect x="664.4" y="602.4" width="2.4" height="4.5" fill="#b4b890"/><rect x="625.1" y="636.1" width="4.6" height="1.8" fill="#c0c49c"/><rect x="635.5" y="584.9" width="2.2" height="2.7" fill="#d6d8b8"/><rect x="651.8" y="608.9" width="2.5" height="2.3" fill="#1a1c14"/><rect x="685.8" y="597.7" width="3.0" height="3.3" fill="#cfd2ae"/><rect x="688.6" y="629.5" width="1.9" height="4.5" fill="#d6d8b8"/><rect x="645.3" y="614.1" width="2.4" height="3.9" fill="#8f946c"/><rect x="686.2" y="624.0" width="3.3" height="2.7" fill="#a9ad86"/><rect x="640.7" y="612.4" width="4.3" height="4.1" fill="#a9ad86"/><rect x="636.9" y="602.8" width="4.3" height="4.6" fill="#15160f"/><rect x="643.6" y="602.6" width="2.5" height="3.3" fill="#8f946c"/><rect x="615.8" y="603.4" width="4.1" height="4.3" fill="#2a2d20"/><rect x="660.2" y="606.9" width="3.4" height="3.1" fill="#cfd2ae"/><rect x="658.2" y="604.2" width="2.1" height="2.0" fill="#cfd2ae"/><rect x="640.1" y="619.6" width="3.6" height="2.5" fill="#c0c49c"/><rect x="614.0" y="628.6" width="2.3" height="1.9" fill="#c0c49c"/><rect x="618.0" y="627.4" width="3.1" height="3.6" fill="#1a1c14"/><rect x="634.7" y="589.4" width="2.9" height="4.2" fill="#8f946c"/><rect x="625.6" y="599.8" width="2.1" height="2.9" fill="#b4b890"/><rect x="692.9" y="603.5" width="2.8" height="4.6" fill="#15160f"/><rect x="664.7" y="630.2" width="2.8" height="3.7" fill="#3a3d2c"/><rect x="698.3" y="611.0" width="2.0" height="2.6" fill="#1a1c14"/><rect x="667.7" y="600.2" width="2.9" height="3.6" fill="#15160f"/><rect x="617.9" y="604.2" width="3.4" height="3.2" fill="#8f946c"/><rect x="647.2" y="605.0" width="1.9" height="2.6" fill="#15160f"/><rect x="622.3" y="616.3" width="3.6" height="1.9" fill="#d6d8b8"/><rect x="641.7" y="601.7" width="2.5" height="4.0" fill="#c0c49c"/><rect x="701.4" y="637.3" width="4.1" height="4.2" fill="#c9cba6"/><rect x="653.9" y="621.6" width="3.2" height="2.1" fill="#b4b890"/><rect x="644.3" y="581.0" width="4.6" height="3.1" fill="#2a2d20"/><rect x="651.0" y="620.3" width="2.5" height="2.0" fill="#c9cba6"/><rect x="670.8" y="615.4" width="3.9" height="4.3" fill="#a9ad86"/><rect x="669.3" y="598.7" width="3.0" height="2.5" fill="#1a1c14"/><rect x="682.2" y="633.8" width="3.5" height="4.0" fill="#cfd2ae"/><rect x="660.1" y="622.0" width="4.2" height="4.2" fill="#a9ad86"/><rect x="618.4" y="598.7" width="3.4" height="1.8" fill="#3a3d2c"/><rect x="702.6" y="636.5" width="2.4" height="2.9" fill="#3a3d2c"/><rect x="656.1" y="610.4" width="3.7" height="3.0" fill="#c9cba6"/><rect x="621.8" y="623.3" width="2.2" height="3.9" fill="#15160f"/><rect x="692.2" y="593.9" width="2.4" height="2.4" fill="#3a3d2c"/><rect x="644.9" y="585.2" width="2.5" height="4.6" fill="#d6d8b8"/><rect x="646.4" y="616.0" width="2.6" height="2.8" fill="#15160f"/><rect x="695.1" y="642.7" width="3.5" height="3.3" fill="#8f946c"/><rect x="699.9" y="640.3" width="2.9" height="4.1" fill="#a9ad86"/><rect x="669.3" y="641.1" width="3.7" height="4.3" fill="#1a1c14"/><rect x="655.7" y="616.3" width="2.2" height="2.8" fill="#1a1c14"/><rect x="662.6" y="622.4" width="4.1" height="4.3" fill="#8f946c"/><rect x="619.4" y="604.0" width="3.9" height="4.6" fill="#1a1c14"/><rect x="680.9" y="633.3" width="3.8" height="2.0" fill="#cfd2ae"/><rect x="689.1" y="638.3" width="3.4" height="2.9" fill="#2a2d20"/><rect x="635.8" y="625.3" width="2.8" height="4.2" fill="#3a3d2c"/><rect x="648.4" y="612.6" width="2.1" height="2.0" fill="#c0c49c"/><rect x="657.5" y="619.5" width="4.4" height="2.3" fill="#c9cba6"/><rect x="642.7" y="584.4" width="1.9" height="2.4" fill="#c0c49c"/><rect x="655.8" y="640.4" width="3.2" height="3.2" fill="#c9cba6"/><rect x="688.6" y="619.0" width="3.2" height="2.9" fill="#15160f"/><rect x="661.0" y="612.2" width="3.7" height="3.2" fill="#cfd2ae"/><rect x="651.9" y="648.2" width="1.9" height="3.6" fill="#2a2d20"/><rect x="635.1" y="603.4" width="3.1" height="2.8" fill="#2a2d20"/><rect x="655.3" y="645.4" width="2.0" height="3.0" fill="#1a1c14"/><rect x="651.4" y="596.7" width="2.6" height="3.3" fill="#c0c49c"/><rect x="635.5" y="607.2" width="3.2" height="2.0" fill="#15160f"/><rect x="646.1" y="630.3" width="3.3" height="3.9" fill="#1a1c14"/><rect x="668.8" y="638.8" width="1.8" height="2.0" fill="#15160f"/><rect x="642.4" y="592.1" width="3.1" height="3.9" fill="#15160f"/><rect x="666.0" y="625.9" width="3.1" height="1.8" fill="#d6d8b8"/><rect x="635.8" y="639.5" width="1.8" height="3.6" fill="#3a3d2c"/><rect x="697.2" y="637.8" width="4.3" height="3.8" fill="#2a2d20"/></g>
<g filter="url(#b1)"><ellipse cx="750.0" cy="565.0" rx="30.0" ry="26.0" fill="#7f8464" opacity=".45"/><ellipse cx="775.0" cy="560.0" rx="20.0" ry="28.0" fill="#7f8464" opacity=".45"/><ellipse cx="735.0" cy="575.0" rx="16.0" ry="18.0" fill="#7f8464" opacity=".45"/><ellipse cx="765.0" cy="590.0" rx="24.0" ry="12.0" fill="#7f8464" opacity=".45"/><rect x="734.6" y="574.1" width="4.4" height="3.1" fill="#8f946c"/><rect x="761.3" y="578.4" width="2.5" height="2.5" fill="#15160f"/><rect x="793.7" y="568.9" width="2.9" height="4.2" fill="#15160f"/><rect x="734.1" y="546.6" width="2.9" height="1.8" fill="#3a3d2c"/><rect x="776.6" y="547.2" width="1.9" height="4.0" fill="#cfd2ae"/><rect x="780.2" y="554.9" width="3.8" height="4.3" fill="#cfd2ae"/><rect x="778.5" y="567.1" width="4.3" height="2.1" fill="#d6d8b8"/><rect x="726.6" y="551.2" width="4.0" height="4.2" fill="#b4b890"/><rect x="748.8" y="594.3" width="2.8" height="3.4" fill="#cfd2ae"/><rect x="761.6" y="599.3" width="4.4" height="1.9" fill="#a9ad86"/><rect x="737.8" y="578.4" width="3.8" height="2.7" fill="#d6d8b8"/><rect x="758.3" y="576.0" width="3.8" height="2.4" fill="#c0c49c"/><rect x="780.9" y="576.1" width="2.1" height="3.1" fill="#2a2d20"/><rect x="765.8" y="569.8" width="4.0" height="2.9" fill="#8f946c"/><rect x="727.8" y="556.6" width="4.2" height="1.9" fill="#b4b890"/><rect x="763.9" y="539.1" width="3.3" height="4.4" fill="#8f946c"/><rect x="737.8" y="552.5" width="2.7" height="2.0" fill="#c9cba6"/><rect x="747.8" y="578.7" width="3.7" height="4.5" fill="#d6d8b8"/><rect x="742.5" y="561.2" width="4.3" height="2.9" fill="#d6d8b8"/><rect x="751.9" y="572.4" width="4.2" height="3.7" fill="#a9ad86"/><rect x="779.3" y="555.0" width="3.8" height="2.5" fill="#a9ad86"/><rect x="756.6" y="574.4" width="4.0" height="4.6" fill="#c9cba6"/><rect x="740.6" y="562.4" width="3.6" height="2.0" fill="#cfd2ae"/><rect x="764.9" y="568.6" width="4.4" height="3.5" fill="#a9ad86"/><rect x="737.8" y="570.3" width="2.0" height="3.7" fill="#cfd2ae"/><rect x="791.1" y="553.6" width="2.6" height="3.5" fill="#15160f"/><rect x="729.8" y="549.0" width="2.5" height="4.0" fill="#cfd2ae"/><rect x="726.3" y="571.0" width="4.1" height="2.5" fill="#a9ad86"/><rect x="730.6" y="566.5" width="2.1" height="2.7" fill="#c0c49c"/><rect x="782.7" y="547.8" width="3.9" height="2.4" fill="#8f946c"/><rect x="760.3" y="554.9" width="1.9" height="4.5" fill="#c0c49c"/><rect x="783.4" y="559.8" width="2.0" height="3.5" fill="#a9ad86"/><rect x="762.0" y="565.5" width="4.0" height="2.6" fill="#3a3d2c"/><rect x="743.0" y="565.2" width="3.4" height="1.9" fill="#b4b890"/><rect x="748.2" y="550.0" width="4.4" height="4.3" fill="#15160f"/><rect x="793.0" y="566.4" width="1.9" height="3.1" fill="#1a1c14"/><rect x="774.8" y="588.4" width="3.3" height="4.3" fill="#2a2d20"/><rect x="783.2" y="596.1" width="4.1" height="1.9" fill="#c0c49c"/><rect x="786.5" y="584.6" width="3.4" height="1.8" fill="#b4b890"/><rect x="774.1" y="548.0" width="2.5" height="1.9" fill="#2a2d20"/><rect x="757.9" y="539.7" width="2.8" height="2.5" fill="#c0c49c"/><rect x="783.2" y="569.4" width="2.8" height="2.4" fill="#c9cba6"/><rect x="757.7" y="593.2" width="2.5" height="2.6" fill="#d6d8b8"/><rect x="785.4" y="545.0" width="3.2" height="3.4" fill="#c9cba6"/><rect x="747.2" y="589.0" width="2.6" height="3.3" fill="#1a1c14"/><rect x="749.0" y="569.1" width="4.2" height="4.0" fill="#c9cba6"/><rect x="753.7" y="538.3" width="3.2" height="2.7" fill="#3a3d2c"/><rect x="740.5" y="560.6" width="2.9" height="2.7" fill="#a9ad86"/><rect x="749.4" y="544.9" width="3.8" height="2.9" fill="#c9cba6"/><rect x="745.1" y="578.3" width="2.9" height="4.0" fill="#3a3d2c"/><rect x="764.6" y="566.2" width="3.6" height="3.9" fill="#8f946c"/><rect x="737.1" y="577.3" width="2.4" height="2.2" fill="#b4b890"/><rect x="718.2" y="558.8" width="4.0" height="2.5" fill="#3a3d2c"/><rect x="752.2" y="544.6" width="4.2" height="3.3" fill="#a9ad86"/><rect x="745.4" y="543.6" width="3.4" height="2.1" fill="#8f946c"/><rect x="776.4" y="539.1" width="3.4" height="3.6" fill="#c0c49c"/><rect x="745.3" y="593.4" width="4.2" height="2.1" fill="#8f946c"/><rect x="781.8" y="583.1" width="3.4" height="4.0" fill="#2a2d20"/><rect x="755.9" y="586.1" width="3.4" height="2.1" fill="#c0c49c"/><rect x="759.2" y="574.5" width="2.3" height="2.0" fill="#cfd2ae"/><rect x="751.4" y="585.0" width="2.5" height="3.5" fill="#b4b890"/><rect x="789.2" y="575.0" width="2.9" height="2.5" fill="#c0c49c"/><rect x="788.5" y="595.1" width="3.7" height="3.9" fill="#b4b890"/><rect x="768.6" y="572.2" width="2.2" height="2.9" fill="#15160f"/><rect x="785.2" y="547.4" width="3.9" height="4.4" fill="#15160f"/><rect x="756.3" y="567.0" width="2.2" height="3.9" fill="#d6d8b8"/><rect x="727.4" y="572.1" width="4.2" height="3.3" fill="#1a1c14"/><rect x="776.8" y="583.0" width="3.5" height="3.4" fill="#b4b890"/><rect x="740.0" y="554.8" width="2.4" height="3.4" fill="#b4b890"/><rect x="734.6" y="569.8" width="3.0" height="3.8" fill="#d6d8b8"/><rect x="770.7" y="550.4" width="4.1" height="4.1" fill="#cfd2ae"/><rect x="759.5" y="569.7" width="4.2" height="2.9" fill="#c0c49c"/><rect x="752.5" y="552.1" width="3.6" height="4.0" fill="#1a1c14"/><rect x="785.4" y="590.3" width="2.3" height="3.8" fill="#d6d8b8"/><rect x="783.5" y="557.9" width="2.1" height="4.0" fill="#b4b890"/><rect x="725.2" y="554.5" width="2.8" height="3.4" fill="#c9cba6"/><rect x="750.0" y="570.0" width="3.6" height="3.9" fill="#1a1c14"/><rect x="754.2" y="544.8" width="2.1" height="2.6" fill="#8f946c"/><rect x="767.9" y="543.9" width="4.3" height="2.1" fill="#3a3d2c"/><rect x="789.4" y="562.2" width="3.9" height="2.6" fill="#8f946c"/><rect x="768.7" y="581.8" width="2.1" height="4.4" fill="#2a2d20"/><rect x="742.4" y="575.6" width="2.1" height="3.2" fill="#3a3d2c"/><rect x="743.5" y="586.3" width="3.8" height="3.9" fill="#a9ad86"/><rect x="766.4" y="587.1" width="2.3" height="4.3" fill="#d6d8b8"/><rect x="767.1" y="544.6" width="2.2" height="2.7" fill="#3a3d2c"/><rect x="772.2" y="577.8" width="2.6" height="2.3" fill="#3a3d2c"/><rect x="753.6" y="590.8" width="2.1" height="2.3" fill="#c0c49c"/><rect x="759.2" y="576.3" width="2.8" height="2.5" fill="#b4b890"/><rect x="755.4" y="553.3" width="2.8" height="2.7" fill="#3a3d2c"/><rect x="747.5" y="573.9" width="2.8" height="4.2" fill="#c0c49c"/><rect x="724.8" y="590.5" width="3.8" height="3.4" fill="#d6d8b8"/><rect x="768.3" y="563.4" width="3.5" height="2.2" fill="#d6d8b8"/><rect x="747.1" y="549.6" width="2.3" height="2.3" fill="#3a3d2c"/><rect x="783.7" y="561.9" width="1.9" height="4.0" fill="#2a2d20"/><rect x="745.9" y="574.7" width="2.7" height="3.2" fill="#cfd2ae"/><rect x="757.3" y="585.5" width="3.2" height="3.5" fill="#a9ad86"/><rect x="772.7" y="536.2" width="2.5" height="2.3" fill="#a9ad86"/><rect x="764.8" y="549.9" width="2.4" height="4.1" fill="#3a3d2c"/><rect x="724.7" y="555.8" width="2.2" height="4.0" fill="#d6d8b8"/><rect x="788.5" y="558.6" width="3.7" height="2.2" fill="#8f946c"/><rect x="782.9" y="578.1" width="3.8" height="3.9" fill="#c9cba6"/><rect x="742.8" y="592.5" width="3.0" height="3.9" fill="#1a1c14"/><rect x="753.8" y="543.6" width="2.9" height="4.2" fill="#c9cba6"/><rect x="771.1" y="563.4" width="3.8" height="3.3" fill="#15160f"/><rect x="748.9" y="581.4" width="1.9" height="3.1" fill="#2a2d20"/><rect x="769.9" y="566.7" width="4.3" height="3.8" fill="#15160f"/><rect x="744.6" y="562.0" width="2.8" height="2.9" fill="#3a3d2c"/><rect x="736.2" y="561.9" width="3.3" height="2.2" fill="#15160f"/><rect x="765.7" y="545.7" width="2.3" height="3.2" fill="#cfd2ae"/><rect x="750.9" y="564.5" width="2.5" height="1.9" fill="#c9cba6"/><rect x="754.5" y="599.6" width="2.1" height="3.1" fill="#1a1c14"/><rect x="728.9" y="579.6" width="4.4" height="3.5" fill="#8f946c"/><rect x="779.0" y="556.4" width="4.0" height="4.5" fill="#15160f"/><rect x="754.1" y="575.3" width="4.1" height="3.6" fill="#c9cba6"/><rect x="742.9" y="542.6" width="3.5" height="1.8" fill="#c0c49c"/><rect x="720.2" y="581.8" width="4.3" height="3.9" fill="#1a1c14"/><rect x="742.5" y="569.5" width="4.4" height="1.9" fill="#8f946c"/><rect x="739.8" y="578.5" width="2.0" height="2.6" fill="#b4b890"/><rect x="782.3" y="544.0" width="3.3" height="3.3" fill="#b4b890"/><rect x="776.7" y="564.2" width="4.1" height="3.3" fill="#b4b890"/><rect x="788.0" y="561.4" width="3.0" height="3.0" fill="#b4b890"/><rect x="770.8" y="560.2" width="3.2" height="3.9" fill="#d6d8b8"/><rect x="787.4" y="584.8" width="2.2" height="3.8" fill="#c9cba6"/><rect x="717.8" y="568.7" width="3.6" height="2.7" fill="#a9ad86"/><rect x="762.9" y="592.1" width="4.3" height="4.2" fill="#c9cba6"/><rect x="751.1" y="598.8" width="4.6" height="1.8" fill="#8f946c"/><rect x="731.2" y="591.1" width="3.4" height="2.1" fill="#8f946c"/><rect x="722.3" y="581.4" width="3.7" height="4.5" fill="#1a1c14"/><rect x="789.0" y="546.0" width="2.1" height="2.6" fill="#c9cba6"/><rect x="756.2" y="571.3" width="2.7" height="4.3" fill="#cfd2ae"/><rect x="777.0" y="568.7" width="2.0" height="4.1" fill="#cfd2ae"/><rect x="791.4" y="549.9" width="2.0" height="3.1" fill="#2a2d20"/><rect x="733.4" y="594.1" width="3.2" height="3.7" fill="#a9ad86"/><rect x="770.6" y="564.2" width="3.0" height="2.1" fill="#a9ad86"/><rect x="781.2" y="577.6" width="2.4" height="3.3" fill="#b4b890"/><rect x="752.2" y="587.0" width="2.8" height="2.3" fill="#c0c49c"/><rect x="774.8" y="600.7" width="3.0" height="3.6" fill="#8f946c"/><rect x="763.3" y="551.0" width="4.1" height="2.0" fill="#8f946c"/><rect x="734.4" y="566.7" width="2.4" height="2.3" fill="#2a2d20"/><rect x="788.6" y="586.8" width="3.1" height="3.8" fill="#cfd2ae"/><rect x="782.5" y="561.7" width="4.3" height="4.5" fill="#1a1c14"/><rect x="753.8" y="590.1" width="3.1" height="3.4" fill="#b4b890"/><rect x="731.2" y="550.5" width="3.0" height="2.8" fill="#15160f"/><rect x="773.9" y="588.3" width="2.2" height="3.0" fill="#2a2d20"/><rect x="786.9" y="567.1" width="2.2" height="3.9" fill="#1a1c14"/><rect x="745.1" y="547.3" width="4.4" height="3.1" fill="#2a2d20"/><rect x="793.9" y="551.6" width="2.6" height="3.1" fill="#2a2d20"/><rect x="785.2" y="592.5" width="3.9" height="4.4" fill="#2a2d20"/><rect x="756.5" y="537.0" width="3.3" height="2.3" fill="#d6d8b8"/><rect x="776.1" y="568.6" width="4.5" height="1.9" fill="#8f946c"/><rect x="749.7" y="559.7" width="3.5" height="4.1" fill="#c9cba6"/><rect x="751.1" y="554.3" width="4.0" height="3.0" fill="#a9ad86"/><rect x="764.9" y="583.3" width="2.5" height="2.2" fill="#cfd2ae"/><rect x="775.1" y="591.3" width="3.9" height="2.7" fill="#3a3d2c"/><rect x="779.7" y="568.2" width="3.7" height="4.4" fill="#3a3d2c"/><rect x="779.5" y="578.2" width="2.8" height="3.6" fill="#b4b890"/><rect x="780.9" y="543.1" width="3.0" height="2.6" fill="#8f946c"/><rect x="735.9" y="555.8" width="2.2" height="2.7" fill="#3a3d2c"/><rect x="756.7" y="564.8" width="4.1" height="4.4" fill="#1a1c14"/><rect x="758.9" y="570.1" width="4.0" height="3.9" fill="#2a2d20"/><rect x="736.9" y="566.5" width="2.8" height="3.2" fill="#c0c49c"/><rect x="766.2" y="549.7" width="2.3" height="2.9" fill="#8f946c"/><rect x="780.6" y="558.1" width="2.4" height="1.9" fill="#2a2d20"/><rect x="740.7" y="578.7" width="2.6" height="2.2" fill="#3a3d2c"/><rect x="722.2" y="572.8" width="4.1" height="3.6" fill="#a9ad86"/><rect x="779.8" y="536.4" width="4.5" height="3.7" fill="#2a2d20"/><rect x="752.0" y="556.3" width="1.9" height="2.5" fill="#3a3d2c"/><rect x="790.7" y="546.1" width="3.7" height="3.1" fill="#d6d8b8"/><rect x="730.1" y="579.9" width="2.3" height="4.1" fill="#2a2d20"/><rect x="784.2" y="539.4" width="3.3" height="2.9" fill="#d6d8b8"/><rect x="724.4" y="563.3" width="2.6" height="2.2" fill="#c9cba6"/><rect x="790.2" y="570.0" width="3.1" height="3.9" fill="#8f946c"/><rect x="757.4" y="595.8" width="3.4" height="3.1" fill="#15160f"/><rect x="758.0" y="567.0" width="3.1" height="2.9" fill="#3a3d2c"/><rect x="775.0" y="556.7" width="2.6" height="4.2" fill="#d6d8b8"/><rect x="790.8" y="558.2" width="2.2" height="3.5" fill="#1a1c14"/><rect x="760.7" y="547.1" width="4.0" height="4.6" fill="#c0c49c"/><rect x="769.5" y="572.8" width="2.1" height="3.3" fill="#2a2d20"/><rect x="750.4" y="546.2" width="2.4" height="3.1" fill="#cfd2ae"/><rect x="760.0" y="580.6" width="2.8" height="3.5" fill="#cfd2ae"/><rect x="783.3" y="594.5" width="4.5" height="2.6" fill="#2a2d20"/><rect x="730.2" y="578.1" width="3.9" height="2.8" fill="#1a1c14"/><rect x="766.3" y="555.8" width="3.1" height="3.1" fill="#2a2d20"/><rect x="757.5" y="597.2" width="3.3" height="3.0" fill="#cfd2ae"/><rect x="764.2" y="540.8" width="3.3" height="3.5" fill="#b4b890"/><rect x="738.7" y="552.5" width="2.9" height="4.5" fill="#b4b890"/><rect x="744.6" y="551.0" width="3.2" height="2.1" fill="#3a3d2c"/><rect x="773.1" y="563.3" width="2.8" height="2.6" fill="#3a3d2c"/><rect x="755.4" y="563.9" width="4.3" height="3.7" fill="#8f946c"/><rect x="724.1" y="570.7" width="2.4" height="2.8" fill="#8f946c"/><rect x="763.9" y="545.8" width="2.4" height="3.0" fill="#c0c49c"/><rect x="773.2" y="558.0" width="3.9" height="4.1" fill="#15160f"/><rect x="769.2" y="544.5" width="2.4" height="2.2" fill="#b4b890"/><rect x="739.9" y="574.7" width="4.1" height="3.5" fill="#c0c49c"/><rect x="743.4" y="536.5" width="3.1" height="2.2" fill="#d6d8b8"/><rect x="731.9" y="580.5" width="3.6" height="3.6" fill="#cfd2ae"/><rect x="750.0" y="542.8" width="2.0" height="4.3" fill="#c0c49c"/><rect x="774.2" y="558.5" width="2.7" height="4.4" fill="#c9cba6"/><rect x="765.2" y="542.6" width="2.7" height="3.0" fill="#a9ad86"/><rect x="761.5" y="597.9" width="3.6" height="4.5" fill="#1a1c14"/><rect x="720.0" y="572.3" width="3.3" height="3.4" fill="#3a3d2c"/><rect x="782.9" y="573.7" width="2.8" height="3.1" fill="#2a2d20"/><rect x="790.9" y="551.9" width="2.6" height="4.3" fill="#cfd2ae"/><rect x="726.4" y="573.2" width="3.3" height="2.7" fill="#cfd2ae"/><rect x="783.1" y="576.9" width="2.4" height="2.0" fill="#3a3d2c"/><rect x="749.8" y="557.8" width="3.2" height="4.2" fill="#1a1c14"/><rect x="788.4" y="571.1" width="2.7" height="3.9" fill="#1a1c14"/><rect x="741.5" y="553.3" width="4.1" height="2.0" fill="#a9ad86"/><rect x="747.3" y="563.2" width="2.6" height="2.8" fill="#d6d8b8"/><rect x="773.1" y="550.5" width="3.0" height="3.4" fill="#2a2d20"/><rect x="735.1" y="585.0" width="4.1" height="2.8" fill="#1a1c14"/><rect x="734.1" y="583.9" width="2.9" height="3.3" fill="#3a3d2c"/><rect x="762.6" y="580.0" width="2.8" height="2.0" fill="#15160f"/><rect x="757.8" y="568.0" width="3.4" height="2.6" fill="#c9cba6"/><rect x="753.7" y="548.5" width="2.7" height="3.9" fill="#b4b890"/><rect x="782.4" y="569.4" width="2.2" height="4.4" fill="#3a3d2c"/><rect x="765.5" y="579.6" width="3.5" height="3.4" fill="#3a3d2c"/><rect x="768.9" y="556.2" width="4.6" height="4.1" fill="#8f946c"/><rect x="774.3" y="556.4" width="3.0" height="3.4" fill="#c9cba6"/><rect x="775.6" y="565.6" width="3.4" height="2.5" fill="#8f946c"/><rect x="770.4" y="575.4" width="3.8" height="2.7" fill="#b4b890"/><rect x="753.9" y="573.9" width="2.3" height="2.9" fill="#15160f"/><rect x="753.6" y="550.1" width="3.7" height="2.1" fill="#3a3d2c"/><rect x="759.1" y="544.2" width="4.2" height="3.2" fill="#b4b890"/><rect x="753.2" y="566.4" width="2.8" height="3.7" fill="#2a2d20"/><rect x="736.6" y="590.6" width="3.7" height="2.5" fill="#1a1c14"/><rect x="736.2" y="560.3" width="4.3" height="2.1" fill="#8f946c"/><rect x="770.9" y="588.5" width="4.6" height="2.7" fill="#1a1c14"/><rect x="750.4" y="566.0" width="3.7" height="3.0" fill="#cfd2ae"/><rect x="778.7" y="554.0" width="2.6" height="4.3" fill="#3a3d2c"/><rect x="749.6" y="536.1" width="3.2" height="4.5" fill="#d6d8b8"/><rect x="782.1" y="586.9" width="2.5" height="3.6" fill="#8f946c"/><rect x="743.9" y="544.3" width="4.5" height="3.9" fill="#1a1c14"/><rect x="753.8" y="587.7" width="2.1" height="2.7" fill="#d6d8b8"/><rect x="779.6" y="587.2" width="2.2" height="3.5" fill="#2a2d20"/><rect x="785.0" y="545.7" width="3.8" height="3.6" fill="#c9cba6"/><rect x="756.4" y="585.6" width="4.6" height="3.5" fill="#3a3d2c"/><rect x="736.5" y="585.1" width="2.0" height="3.7" fill="#c9cba6"/><rect x="772.7" y="594.4" width="2.1" height="4.0" fill="#8f946c"/><rect x="746.3" y="592.4" width="4.4" height="3.8" fill="#15160f"/><rect x="764.9" y="566.9" width="4.0" height="2.8" fill="#1a1c14"/><rect x="733.9" y="565.1" width="2.9" height="4.5" fill="#c0c49c"/><rect x="724.9" y="582.7" width="2.6" height="1.9" fill="#1a1c14"/><rect x="760.4" y="554.6" width="2.9" height="4.3" fill="#cfd2ae"/><rect x="732.3" y="577.0" width="2.7" height="2.0" fill="#a9ad86"/><rect x="778.0" y="571.0" width="2.6" height="4.4" fill="#c0c49c"/><rect x="789.2" y="546.4" width="2.2" height="4.6" fill="#3a3d2c"/><rect x="729.1" y="561.6" width="2.1" height="3.2" fill="#2a2d20"/><rect x="753.4" y="553.3" width="1.9" height="1.9" fill="#b4b890"/><rect x="764.5" y="540.1" width="4.2" height="4.3" fill="#3a3d2c"/><rect x="752.9" y="557.0" width="4.0" height="2.7" fill="#2a2d20"/><rect x="759.9" y="564.4" width="1.9" height="4.5" fill="#a9ad86"/><rect x="730.9" y="541.8" width="3.9" height="3.8" fill="#3a3d2c"/><rect x="726.8" y="547.5" width="3.2" height="4.5" fill="#2a2d20"/><rect x="771.5" y="575.2" width="3.0" height="2.8" fill="#b4b890"/><rect x="789.2" y="558.6" width="3.9" height="2.5" fill="#15160f"/><rect x="752.9" y="554.0" width="2.1" height="2.5" fill="#8f946c"/><rect x="753.4" y="565.5" width="3.8" height="3.5" fill="#1a1c14"/><rect x="740.9" y="581.8" width="3.1" height="3.0" fill="#3a3d2c"/><rect x="748.9" y="576.4" width="3.0" height="1.9" fill="#b4b890"/><rect x="773.2" y="588.6" width="4.3" height="2.9" fill="#8f946c"/><rect x="757.0" y="545.7" width="3.9" height="1.9" fill="#1a1c14"/><rect x="748.2" y="595.2" width="3.9" height="3.1" fill="#cfd2ae"/><rect x="745.5" y="571.2" width="3.5" height="3.1" fill="#b4b890"/><rect x="717.7" y="575.6" width="4.5" height="2.2" fill="#c0c49c"/><rect x="776.6" y="599.0" width="2.1" height="2.4" fill="#c0c49c"/><rect x="787.7" y="574.5" width="4.3" height="3.0" fill="#d6d8b8"/><rect x="727.3" y="551.1" width="3.2" height="3.6" fill="#b4b890"/><rect x="762.1" y="560.0" width="2.9" height="4.5" fill="#3a3d2c"/><rect x="738.0" y="542.0" width="4.2" height="4.2" fill="#1a1c14"/><rect x="742.0" y="587.7" width="2.7" height="2.6" fill="#c0c49c"/><rect x="732.8" y="574.0" width="3.8" height="1.8" fill="#3a3d2c"/><rect x="766.3" y="593.1" width="4.4" height="3.9" fill="#1a1c14"/><rect x="779.9" y="541.0" width="2.8" height="2.6" fill="#2a2d20"/><rect x="742.9" y="551.1" width="4.4" height="3.4" fill="#1a1c14"/><rect x="725.1" y="565.9" width="3.3" height="2.9" fill="#c9cba6"/><rect x="761.1" y="594.0" width="2.4" height="4.4" fill="#3a3d2c"/><rect x="740.3" y="582.5" width="3.0" height="4.0" fill="#c0c49c"/><rect x="771.8" y="591.6" width="2.5" height="3.9" fill="#cfd2ae"/><rect x="763.4" y="544.6" width="4.2" height="2.8" fill="#d6d8b8"/><rect x="729.2" y="559.0" width="4.0" height="3.5" fill="#c0c49c"/><rect x="777.1" y="561.9" width="2.6" height="4.2" fill="#15160f"/><rect x="731.4" y="568.3" width="2.8" height="2.8" fill="#15160f"/><rect x="753.4" y="570.7" width="1.8" height="2.0" fill="#15160f"/><rect x="739.8" y="552.4" width="2.1" height="4.2" fill="#3a3d2c"/><rect x="722.1" y="573.8" width="4.2" height="4.3" fill="#1a1c14"/><rect x="745.6" y="543.5" width="3.1" height="3.9" fill="#3a3d2c"/><rect x="768.8" y="597.3" width="3.9" height="2.1" fill="#3a3d2c"/><rect x="775.5" y="582.6" width="4.1" height="2.6" fill="#1a1c14"/><rect x="767.7" y="538.0" width="1.9" height="3.0" fill="#1a1c14"/><rect x="772.4" y="558.8" width="3.9" height="3.5" fill="#15160f"/><rect x="775.8" y="584.9" width="4.2" height="3.8" fill="#c9cba6"/><rect x="766.4" y="537.1" width="2.2" height="4.2" fill="#b4b890"/><rect x="750.7" y="572.5" width="3.1" height="3.5" fill="#a9ad86"/><rect x="787.3" y="557.2" width="2.6" height="2.5" fill="#a9ad86"/><rect x="750.2" y="563.3" width="4.3" height="3.3" fill="#3a3d2c"/><rect x="738.8" y="560.1" width="2.6" height="2.0" fill="#d6d8b8"/><rect x="749.6" y="551.2" width="3.6" height="1.8" fill="#c0c49c"/><rect x="773.3" y="566.8" width="3.6" height="3.1" fill="#c9cba6"/><rect x="767.5" y="578.1" width="4.3" height="3.3" fill="#cfd2ae"/><rect x="774.1" y="590.4" width="4.2" height="4.6" fill="#1a1c14"/><rect x="722.8" y="584.4" width="2.9" height="2.3" fill="#15160f"/><rect x="782.6" y="586.0" width="4.3" height="2.5" fill="#3a3d2c"/><rect x="764.8" y="552.6" width="3.4" height="2.6" fill="#a9ad86"/><rect x="767.5" y="592.9" width="2.1" height="2.7" fill="#a9ad86"/><rect x="739.5" y="577.9" width="2.7" height="2.6" fill="#a9ad86"/><rect x="764.8" y="576.9" width="2.7" height="4.6" fill="#15160f"/><rect x="753.1" y="552.8" width="3.3" height="2.8" fill="#1a1c14"/><rect x="757.9" y="560.3" width="2.3" height="3.1" fill="#c9cba6"/><rect x="741.5" y="548.0" width="3.4" height="2.5" fill="#8f946c"/><rect x="771.4" y="580.4" width="1.8" height="3.3" fill="#c9cba6"/><rect x="769.0" y="558.3" width="2.6" height="2.5" fill="#cfd2ae"/><rect x="783.3" y="593.3" width="2.9" height="3.1" fill="#cfd2ae"/><rect x="768.3" y="564.4" width="4.4" height="4.2" fill="#15160f"/><rect x="788.7" y="584.9" width="3.0" height="2.8" fill="#2a2d20"/><rect x="778.2" y="564.5" width="2.9" height="4.3" fill="#c9cba6"/><rect x="775.3" y="584.1" width="1.9" height="2.5" fill="#b4b890"/><rect x="744.8" y="566.1" width="2.8" height="3.0" fill="#a9ad86"/><rect x="745.9" y="584.6" width="3.5" height="2.4" fill="#2a2d20"/><rect x="784.9" y="536.0" width="2.5" height="2.2" fill="#15160f"/><rect x="775.2" y="573.0" width="4.3" height="2.3" fill="#15160f"/><rect x="780.5" y="594.3" width="3.9" height="2.9" fill="#b4b890"/><rect x="732.1" y="581.7" width="4.2" height="3.7" fill="#1a1c14"/><rect x="744.2" y="591.5" width="2.6" height="4.3" fill="#2a2d20"/><rect x="767.7" y="562.5" width="4.0" height="2.2" fill="#3a3d2c"/><rect x="742.8" y="541.3" width="4.3" height="3.9" fill="#8f946c"/><rect x="737.7" y="549.6" width="3.6" height="2.4" fill="#b4b890"/><rect x="772.2" y="572.6" width="4.2" height="2.5" fill="#8f946c"/><rect x="784.4" y="564.9" width="4.5" height="4.1" fill="#c9cba6"/><rect x="787.1" y="548.1" width="4.0" height="3.7" fill="#15160f"/><rect x="736.4" y="552.8" width="4.2" height="3.9" fill="#a9ad86"/><rect x="775.3" y="541.8" width="1.8" height="3.4" fill="#8f946c"/><rect x="785.2" y="579.7" width="3.0" height="2.6" fill="#8f946c"/><rect x="765.6" y="577.0" width="3.1" height="2.3" fill="#c0c49c"/><rect x="769.2" y="566.6" width="2.5" height="2.0" fill="#c0c49c"/><rect x="734.3" y="573.8" width="3.9" height="4.1" fill="#2a2d20"/><rect x="761.2" y="579.9" width="4.2" height="1.9" fill="#8f946c"/><rect x="721.9" y="576.2" width="2.3" height="2.4" fill="#d6d8b8"/><rect x="777.8" y="550.0" width="3.3" height="2.0" fill="#d6d8b8"/><rect x="746.8" y="571.2" width="4.3" height="4.1" fill="#c9cba6"/><rect x="770.8" y="575.3" width="3.7" height="4.2" fill="#2a2d20"/><rect x="730.3" y="548.9" width="4.3" height="3.2" fill="#c0c49c"/><rect x="728.0" y="552.6" width="3.2" height="2.9" fill="#a9ad86"/><rect x="768.4" y="597.9" width="3.5" height="4.1" fill="#1a1c14"/><rect x="777.0" y="597.5" width="4.1" height="3.4" fill="#d6d8b8"/><rect x="735.5" y="568.3" width="2.9" height="4.2" fill="#c0c49c"/><rect x="764.8" y="578.4" width="2.4" height="4.3" fill="#d6d8b8"/><rect x="790.7" y="554.7" width="3.1" height="4.2" fill="#d6d8b8"/><rect x="718.1" y="563.0" width="3.0" height="3.9" fill="#3a3d2c"/><rect x="734.5" y="593.3" width="3.1" height="3.8" fill="#8f946c"/><rect x="784.9" y="577.5" width="1.9" height="2.8" fill="#c9cba6"/><rect x="769.6" y="579.5" width="3.6" height="4.2" fill="#15160f"/><rect x="780.1" y="586.0" width="1.9" height="2.8" fill="#b4b890"/><rect x="781.8" y="560.6" width="3.9" height="2.7" fill="#a9ad86"/><rect x="761.2" y="574.3" width="2.9" height="2.9" fill="#a9ad86"/><rect x="722.4" y="576.9" width="3.7" height="4.5" fill="#15160f"/><rect x="774.7" y="583.8" width="2.4" height="3.8" fill="#1a1c14"/><rect x="765.5" y="556.3" width="2.2" height="3.7" fill="#d6d8b8"/><rect x="767.6" y="575.5" width="2.3" height="4.5" fill="#1a1c14"/><rect x="745.1" y="585.4" width="4.1" height="3.9" fill="#cfd2ae"/><rect x="756.0" y="557.1" width="3.3" height="4.0" fill="#b4b890"/><rect x="739.7" y="585.8" width="3.5" height="2.7" fill="#cfd2ae"/><rect x="746.0" y="565.6" width="2.6" height="4.6" fill="#15160f"/><rect x="751.4" y="575.9" width="4.2" height="2.3" fill="#cfd2ae"/><rect x="724.4" y="562.6" width="2.4" height="3.0" fill="#15160f"/><rect x="738.8" y="545.6" width="3.8" height="1.9" fill="#1a1c14"/><rect x="748.1" y="563.2" width="4.2" height="3.0" fill="#b4b890"/><rect x="735.1" y="594.5" width="2.8" height="3.7" fill="#a9ad86"/><rect x="743.5" y="581.7" width="2.8" height="1.9" fill="#a9ad86"/><rect x="744.3" y="539.5" width="3.2" height="3.9" fill="#2a2d20"/><rect x="731.9" y="585.9" width="4.3" height="4.4" fill="#c9cba6"/><rect x="741.1" y="569.3" width="3.6" height="1.8" fill="#15160f"/><rect x="782.2" y="557.2" width="2.2" height="2.9" fill="#3a3d2c"/><rect x="783.0" y="553.3" width="2.7" height="4.0" fill="#8f946c"/><rect x="767.0" y="585.2" width="2.3" height="4.1" fill="#b4b890"/><rect x="780.1" y="562.1" width="4.3" height="4.3" fill="#8f946c"/><rect x="729.9" y="541.9" width="2.4" height="4.2" fill="#8f946c"/><rect x="726.2" y="574.8" width="3.1" height="2.6" fill="#cfd2ae"/><rect x="784.1" y="552.9" width="4.4" height="2.4" fill="#8f946c"/><rect x="729.3" y="579.8" width="3.3" height="3.8" fill="#cfd2ae"/><rect x="783.3" y="549.8" width="4.6" height="4.0" fill="#a9ad86"/><rect x="774.9" y="541.3" width="2.9" height="1.8" fill="#d6d8b8"/><rect x="783.0" y="585.5" width="3.8" height="2.5" fill="#1a1c14"/><rect x="788.9" y="551.8" width="2.7" height="2.4" fill="#15160f"/><rect x="787.2" y="561.7" width="3.1" height="2.1" fill="#c0c49c"/><rect x="754.8" y="548.8" width="2.2" height="2.7" fill="#a9ad86"/><rect x="781.0" y="555.2" width="2.7" height="4.3" fill="#1a1c14"/><rect x="730.0" y="567.1" width="4.6" height="2.7" fill="#d6d8b8"/><rect x="770.5" y="597.3" width="4.3" height="2.0" fill="#b4b890"/><rect x="748.5" y="595.8" width="2.1" height="3.4" fill="#cfd2ae"/><rect x="776.9" y="595.2" width="1.8" height="3.0" fill="#3a3d2c"/><rect x="783.0" y="555.8" width="2.9" height="3.9" fill="#2a2d20"/><rect x="786.2" y="544.3" width="2.0" height="3.3" fill="#b4b890"/><rect x="727.3" y="578.1" width="3.1" height="2.6" fill="#3a3d2c"/><rect x="764.6" y="585.0" width="2.9" height="1.8" fill="#c9cba6"/><rect x="780.8" y="574.9" width="3.6" height="2.5" fill="#2a2d20"/><rect x="786.6" y="560.6" width="3.9" height="2.3" fill="#1a1c14"/><rect x="777.5" y="578.5" width="3.0" height="3.0" fill="#c0c49c"/><rect x="775.7" y="552.8" width="3.9" height="3.6" fill="#8f946c"/><rect x="759.7" y="592.9" width="3.0" height="3.1" fill="#cfd2ae"/></g>
<path d="M612 690 Q640 668 700 667 L792 664 L792 716 L690 720 Q640 716 612 700Z" fill="#1b1b1b"/>
<path d="M621 703 Q650 712 690 719 L792 715 L792 732 L691 732 Q660 730 640 720Z" fill="#232323"/>
<polygon points="700,733 735,733 663.5,882 655,886 647,883" fill="url(#wood)"/>
<path d="M718 735L656 880" stroke="#dca882" stroke-width="3" opacity=".7"/>
<polygon points="744,733 771.6,733 755,822 747,825 738.6,822" fill="#c9946c"/>
<polygon points="683.5,734 700,734 696,752 692,758" fill="#a8744e"/>
<ellipse cx="768" cy="674" rx="16.5" ry="11" fill="#c9946c"/><ellipse cx="768" cy="670" rx="13" ry="6" fill="#dca882" opacity=".6"/>
<polygon points="723.7,694 732,676 740,673 749,677.3 757.5,688 749,695" fill="#c9946c"/>
<polygon points="757.5,702.6 763.8,691 792,691 792,705" fill="#a9a18c"/><polygon points="757.5,702.6 792,705 792,708 757.5,705.5" fill="#d8d8d8"/>
<polygon points="601,674 685.7,671 719.5,688 719.5,696.5 622,703" fill="#050505"/>
<rect x="700" y="690" width="4" height="2" fill="#aaa"/><rect x="707" y="689.5" width="6" height="2" fill="#aaa"/>
<path d="M486 708 Q488 678 510 676 Q528 676 536 684 L528 690 Q514 684 503 690 Q498 700 497 712Z" fill="#c9946c"/>
<path d="M640 672 Q655 660 672 664 L678 673 Q662 668 650 676Z" fill="#c9946c"/>
<path d="M452.3 645 L453 578 Q454 558 470 555.5 Q492 552 521 554.4 Q545 559 559 569.6 Q578 590 590.6 614 Q601 636 606.5 654 Q606 668 592 672 L470 660Z" fill="#3b3b3b"/>
<path d="M458 645 L458.5 580 Q459 562 472 560 Q494 557 520 559.4 Q542 563.5 555 573.5 Q573 593 585.5 616.5 Q596 638 600.8 654.5 Q600 664 590 667 L470 656Z" fill="#838383"/>
<path d="M600 668 Q606 650 626.5 644.5 L664 648 L707.8 619.2 L711 624.5 Q690 652 640 676Z" fill="#474747"/>
<path d="M437.5 645.6 Q441 637 452 638.2 Q470 640 495.6 649.8 L537.8 662.5 Q565 668.5 601.2 671 Q630 668 664.5 649.8 Q688 632 700.5 621.3 L707.8 619.2 L711 624.5 Q705 634 696 641.4 Q680 655 643.4 673 L611.7 677.3 L601 700 L491.4 696.3 Q470 684 459.7 675 Q446 664 442.8 658.3Z" fill="#1d1d1d"/>
<path d="M441 641 Q470 640 495.6 649.8 L537.8 662.5 Q565 668.5 601.2 671 Q630 668 664.5 649.8 Q688 632 703 620.5" fill="none" stroke="#444" stroke-width="2.2"/>
<path d="M166 1010 L180 950 L189.5 880 L203 835 L221 748 Q231 703 253 703 Q266 703 274 716 L302 770 L335 834 Q350 862 378 884 L398 891" stroke="#c9946c" stroke-width="10.5" fill="none" stroke-linejoin="round"/>
<path d="M166 1024 L182.5 950 L198.5 880 L212 832 L221 812 Q229 786 250 777 Q262 772 273 773 Q297 776 312 800 L335 845 Q352 877 372 888 Q395 897 420 887 L475 866 L540 843 L562 832" stroke="#c9946c" stroke-width="13" fill="none" stroke-linejoin="round"/>
<path d="M172 1026 L189 950 L205 880 L218.5 834 L227 814 Q235 792 252 783.5 Q264 779 273 779.5 Q293 782 307 803 L330 848 Q347 880 369 892 Q393 902 420 893 L540 849" stroke="#a8744e" stroke-width="1.6" fill="none" opacity=".75"/>
<path d="M174 960 L184.5 880 L198 835 L216 748 Q226 712 246 709" stroke="#a8744e" stroke-width="1.4" fill="none" opacity=".6"/>
<path d="M172.5 1027 L189.5 950 L205.5 880 L213 853" stroke="#1a120c" stroke-width="2" fill="none"/>
<path d="M201.5 594.5 Q203 590 214 591 L236 593 Q262 600 293 635 Q322 664 346 692 Q368 716 381.5 736 Q394 756 397 771.5 Q400 790 399 806.7 Q397 822 390 829 Q384 843 372 846.5 Q362 847 355 842 L319.8 798 L280 736 L227 643.7Z" fill="#1f1f1f"/>
<path d="M214 597.5 Q240 598 262 612 Q290 636 320 668 Q350 700 375 733 Q390 754 394 775 Q396 790 391 797 L372 789 Q366 770 352 748 Q330 716 300 682 Q270 650 245 630 Q228 616 212 604Z" fill="#4a4a4a"/>
<path d="M330 690 Q356 716 376 742 Q390 760 392 780 L390 795 L378 790 Q372 768 356 744 Q342 722 322 700Z" fill="#5e5e5e"/>
<path d="M205 595 Q225 594 240 598" stroke="#3a3a3a" stroke-width="2" fill="none"/>
<path d="M405.4 863.5 Q408 840 412 825.5 Q420 800 431.9 779 Q442 760 455 742.8 Q468 726 481.4 713 Q500 696 522 685.5 Q540 678 554 678 Q575 679 593 687.8 Q614 700 632.6 718.6 Q650 736 663.4 753.8 L678 770.3 Q677 776 672.5 779.5 Q660 785 646.8 788.7 L610 797.9 L555 808.9 L504.6 828.8 L425 860 Q412 866 405.4 863.5Z" fill="#151515"/>
<path d="M483 709 Q500 694 522 685.5 Q540 678 554 678 Q575 679 593 687.8 Q614 700 632.6 718.6 Q650 736 663.4 753.8 L676 768 Q660 752 640 741 Q612 733 586 734 L540 744 Q500 756 470 774 Q450 790 432 815 Q420 835 414 852 L408 850 Q414 818 431.9 779 Q452 740 483 709Z" fill="#2e2e2e"/>
<path d="M412 845.3 Q424 822 438.5 805.6 Q460 782 488 766 Q512 753 537.6 744.5 Q560 737 600 734.5 Q570 746 537.6 762 Q520 770 504.6 779 Q475 798 455 816 Q432 838 417 854Z" fill="#707070"/>
<polygon points="562.4,838 579,836 595.4,931.8 586.3,931" fill="#a8744e"/>
<path d="M556 810 Q570 798 606.5 796 L610 812.5 L646.8 1027 L648 1036 L628 1036 L560.6 812.5Z" fill="url(#wood)"/>
<path d="M590 806 L637 1030" stroke="#dca882" stroke-width="4" opacity=".55" fill="none"/>
<path d="M556 812 Q575 800 606 799" stroke="#a8744e" stroke-width="2" fill="none"/>
<polygon points="899,830 915,830 930,856 919,860" fill="#c9946c"/>
<polygon points="1004.5,830 1020.5,830 1012.8,855 1001,853.8" fill="#c9946c"/>
<polygon points="1163,830 1186.8,830 1180.8,922 1172,926 1161.8,922" fill="url(#wood)"/>
<polygon points="1310,830 1326,830 1329,850 1314.4,849" fill="#a8744e"/>
<path d="M203.8 999V975" stroke="#2a3cc8" stroke-width="1.6"/><path d="M203.8 999H229" stroke="#2e9a3a" stroke-width="1.6"/><rect x="202" y="997" width="4" height="4" fill="#c83030"/>
</g>
<text x="180" y="12" font-family="'Liberation Sans',sans-serif" font-size="11.5" fill="#d0d0d0" opacity=".8" textLength="279" lengthAdjust="spacingAndGlyphs">[+] [Render_Camera] [Standard] [Default Shading]</text>
<text x="200.5" y="973" font-family="'Liberation Sans',sans-serif" font-size="9" font-weight="bold" fill="#2a3cc8">z</text><text x="229.5" y="1002" font-family="'Liberation Sans',sans-serif" font-size="9" font-weight="bold" fill="#2e9a3a">y</text>
</svg>

<div style="position:absolute;left:0px;top:0px;width:160px;height:1033px;background:#444444;"></div><div style="position:absolute;left:160px;top:0px;width:14px;height:1033px;background:#3e3e3e;"></div><div style="position:absolute;left:-2px;top:0px;width:33px;height:29px;background:#3c3c3c;"></div><div style="position:absolute;left:34px;top:0px;width:31px;height:29px;background:#3c3c3c;"></div><div style="position:absolute;left:67px;top:0px;width:32px;height:29px;background:#3c3c3c;"></div><div style="position:absolute;left:102px;top:0px;width:32px;height:29px;background:#3c3c3c;"></div><div style="position:absolute;left:137px;top:0px;width:29px;height:29px;background:#3c3c3c;"></div><svg style="position:absolute;left:0;top:0" width="167" height="62" viewBox="0 0 167 62">
<g fill="none" stroke="#3f8f8f" stroke-width="1.6">
<rect x="8" y="9.5" width="15" height="14" stroke-dasharray="2.5 1.6"/>
</g>
<g fill="#3f8f8f"><rect x="6.5" y="8" width="3.2" height="3.2"/><rect x="21.3" y="8" width="3.2" height="3.2"/><rect x="6.5" y="21.8" width="3.2" height="3.2"/><rect x="21.3" y="21.8" width="3.2" height="3.2"/></g>
<path d="M11.5 20.5 Q13.5 13.5 21 12" fill="none" stroke="#9a9a9a" stroke-width="2.4"/>
<rect x="43" y="8" width="13.5" height="4.6" fill="#9c9c9c"/>
<path d="M49.7 12.6V16.5M44 23V16.5H55.6V23" fill="none" stroke="#3f8f8f" stroke-width="1.4"/>
<rect x="42.3" y="21.8" width="3.2" height="3.2" fill="#3f8f8f"/><rect x="54" y="21.8" width="3.2" height="3.2" fill="#3f8f8f"/>
<circle cx="80.3" cy="16" r="6.6" fill="#2f5f62"/><circle cx="86.8" cy="16" r="7.2" fill="#9e9e9e"/>
<rect x="109.7" y="9" width="17.3" height="9.4" fill="#9e9e9e"/><rect x="114" y="21.6" width="8.6" height="1.6" fill="#8a8a8a"/>
<path d="M146.5 10.5 L159.5 23" stroke="#9c9c9c" stroke-width="3" stroke-linecap="round" fill="none"/>
<path d="M144.5 12.5 A3.6 3.6 0 1 0 149 8.2 L147.2 11 Z" fill="#9c9c9c"/>
<!-- row2 -->
<path d="M-1 40.5H3V45H6.5V54H-1Z" fill="#cfcfcf"/>
<path d="M22 38.6a5.7 5.7 0 0 1 3.4 10.3 L24.6 51.5H19.4L18.6 48.9A5.7 5.7 0 0 1 22 38.6Z" fill="#d4d4d4"/><rect x="20.2" y="52.2" width="3.6" height="1.8" fill="#bdbdbd"/>
<rect x="38" y="41" width="10" height="10.4" fill="#d6d6d6"/><path d="M49 46.2 L53.6 41.8V50.6Z" fill="#d6d6d6"/>
<path d="M61.5 39 L77 54 H61.5Z M64.8 47 V50.8H68.8Z" fill="#d6d6d6" fill-rule="evenodd"/>
<g fill="none" stroke="#cfcfcf" stroke-width="1.8"><path d="M85 42.2 q4 -3 8 0 t8 -0.6"/><path d="M85 46.6 q4 -3 8 0 t8 -0.6"/><path d="M85 51 q4 -3 8 0 t8 -0.6"/></g>
<circle cx="112" cy="42.2" r="2.3" fill="none" stroke="#d4d4d4" stroke-width="1.5"/><circle cx="118.6" cy="48.7" r="3.6" fill="none" stroke="#d4d4d4" stroke-width="2.6"/>
</svg><div style="position:absolute;left:0px;top:66px;width:165px;height:19px;background:#5e5e5e;"></div><span style="position:absolute;left:0.0px;top:70.3px;font-family:'Liberation Sans',sans-serif;font-size:11px;line-height:1;white-space:pre;color:#d8d8d8;font-weight:normal;font-style:normal;letter-spacing:-0.04px;text-shadow:0 0 1px #bbb;">ard Primitives</span><svg style="position:absolute;left:149px;top:72px" width="9" height="6"><path d="M0.5 0.5H8.5L4.5 5.5Z" fill="#e6e6e6"/></svg><div style="position:absolute;left:0px;top:92px;width:156px;height:178px;background:#515151;"></div><div style="position:absolute;left:141px;top:99px;width:6px;height:6px;background:#626262;"></div><span style="position:absolute;left:0.0px;top:96.8px;font-family:'Liberation Sans',sans-serif;font-size:12px;line-height:1;white-space:pre;color:#f4f4f4;font-weight:bold;font-style:normal;letter-spacing:0.54px;">ject Type</span><div style="position:absolute;left:10px;top:119px;width:8px;height:8px;background:#5a5a5a;"></div><span style="position:absolute;left:23.0px;top:118.3px;font-family:'Liberation Sans',sans-serif;font-size:11px;line-height:1;white-space:pre;color:#7d7d7d;font-weight:normal;font-style:normal;letter-spacing:0.07px;">AutoGrid</span><div style="position:absolute;left:-19px;top:136.0px;width:73px;height:17px;background:#606060;border-radius:3px;"></div><span style="position:absolute;left:7.4px;top:139.1px;font-family:'Liberation Sans',sans-serif;font-size:11px;line-height:1;white-space:pre;color:#e2e2e2;font-weight:normal;font-style:normal;letter-spacing:0.21px;">Box</span><div style="position:absolute;left:66px;top:136.0px;width:71px;height:17px;background:#606060;border-radius:3px;"></div><span style="position:absolute;left:87.6px;top:139.1px;font-family:'Liberation Sans',sans-serif;font-size:11px;line-height:1;white-space:pre;color:#e2e2e2;font-weight:normal;font-style:normal;letter-spacing:0.03px;">Cone</span><div style="position:absolute;left:-19px;top:158.5px;width:73px;height:17px;background:#606060;border-radius:3px;"></div><span style="position:absolute;left:-1.5px;top:161.6px;font-family:'Liberation Sans',sans-serif;font-size:11px;line-height:1;white-space:pre;color:#e2e2e2;font-weight:normal;font-style:normal;letter-spacing:0.25px;">Sphere</span><div style="position:absolute;left:66px;top:158.5px;width:71px;height:17px;background:#606060;border-radius:3px;"></div><span style="position:absolute;left:72.7px;top:161.6px;font-family:'Liberation Sans',sans-serif;font-size:11px;line-height:1;white-space:pre;color:#e2e2e2;font-weight:normal;font-style:normal;letter-spacing:0.09px;">GeoSphere</span><div style="position:absolute;left:-19px;top:181.0px;width:73px;height:17px;background:#606060;border-radius:3px;"></div><span style="position:absolute;left:-2.5px;top:184.1px;font-family:'Liberation Sans',sans-serif;font-size:11px;line-height:1;white-space:pre;color:#e2e2e2;font-weight:normal;font-style:normal;letter-spacing:0.02px;">Cylinder</span><div style="position:absolute;left:66px;top:181.0px;width:71px;height:17px;background:#606060;border-radius:3px;"></div><span style="position:absolute;left:88.4px;top:184.1px;font-family:'Liberation Sans',sans-serif;font-size:11px;line-height:1;white-space:pre;color:#e2e2e2;font-weight:normal;font-style:normal;letter-spacing:0.23px;">Tube</span><div style="position:absolute;left:-19px;top:203.5px;width:73px;height:17px;background:#606060;border-radius:3px;"></div><span style="position:absolute;left:3.3px;top:206.6px;font-family:'Liberation Sans',sans-serif;font-size:11px;line-height:1;white-space:pre;color:#e2e2e2;font-weight:normal;font-style:normal;letter-spacing:0.36px;">Torus</span><div style="position:absolute;left:66px;top:203.5px;width:71px;height:17px;background:#606060;border-radius:3px;"></div><span style="position:absolute;left:79.3px;top:206.6px;font-family:'Liberation Sans',sans-serif;font-size:11px;line-height:1;white-space:pre;color:#e2e2e2;font-weight:normal;font-style:normal;letter-spacing:0.27px;">Pyramid</span><div style="position:absolute;left:-19px;top:226.0px;width:73px;height:17px;background:#606060;border-radius:3px;"></div><span style="position:absolute;left:-1.5px;top:229.1px;font-family:'Liberation Sans',sans-serif;font-size:11px;line-height:1;white-space:pre;color:#e2e2e2;font-weight:normal;font-style:normal;letter-spacing:0.66px;">Teapot</span><div style="position:absolute;left:66px;top:226.0px;width:71px;height:17px;background:#606060;border-radius:3px;"></div><span style="position:absolute;left:86.0px;top:229.1px;font-family:'Liberation Sans',sans-serif;font-size:11px;line-height:1;white-space:pre;color:#e2e2e2;font-weight:normal;font-style:normal;letter-spacing:-0.03px;">Plane</span><div style="position:absolute;left:-19px;top:248.5px;width:73px;height:17px;background:#606060;border-radius:3px;"></div><span style="position:absolute;left:-4.5px;top:251.6px;font-family:'Liberation Sans',sans-serif;font-size:11px;line-height:1;white-space:pre;color:#e2e2e2;font-weight:normal;font-style:normal;letter-spacing:0.33px;">TextPlus</span><div style="position:absolute;left:0px;top:276px;width:156px;height:57px;background:#515151;"></div><div style="position:absolute;left:141px;top:282px;width:6px;height:6px;background:#626262;"></div><span style="position:absolute;left:0.0px;top:279.6px;font-family:'Liberation Sans',sans-serif;font-size:12px;line-height:1;white-space:pre;color:#f4f4f4;font-weight:bold;font-style:normal;letter-spacing:0.08px;">me and Color</span><div style="position:absolute;left:0px;top:305px;width:120px;height:19px;background:#5b5b5b;"></div><div style="position:absolute;left:123.5px;top:302.5px;width:18.5px;height:22px;background:#d4438b;border:1.5px solid #4a2036;border-radius:2px;"></div>
<div style="position:absolute;left:788px;top:0px;width:1132px;height:836px;background:#444444;box-shadow:0 2px 7px 0 rgba(0,0,0,.5);"></div><div style="position:absolute;left:788px;top:0px;width:1132px;height:45px;background:#ffffff;"></div><svg style="position:absolute;left:796px;top:0" width="17" height="14" viewBox="0 0 17 14"><rect x="0.5" y="0" width="15" height="13.5" fill="#cfe8ea"/></svg><span style="position:absolute;left:800.5px;top:0.1px;font-family:'Liberation Sans',sans-serif;font-size:12px;line-height:1;white-space:pre;color:#1a8a96;font-weight:bold;font-style:normal;letter-spacing:0.81px;">3</span><span style="position:absolute;left:819.0px;top:1.4px;font-family:'Liberation Sans',sans-serif;font-size:12px;line-height:1;white-space:pre;color:#1c1c1c;font-weight:normal;font-style:normal;letter-spacing:0.19px;">Slate Material Editor</span><svg style="position:absolute;left:1790px;top:0" width="125" height="16" viewBox="0 0 125 16"><path d="M6 7.2H17.5" stroke="#222" stroke-width="1.2"/><rect x="55.5" y="2.5" width="10" height="9.5" fill="none" stroke="#222" stroke-width="1.2"/><path d="M104 2L114.5 12.5M114.5 2L104 12.5" stroke="#222" stroke-width="1.3"/></svg><span style="position:absolute;left:795.5px;top:28.0px;font-family:'Liberation Sans',sans-serif;font-size:12px;line-height:1;white-space:pre;color:#1c1c1c;font-weight:normal;font-style:normal;letter-spacing:0.41px;">Modes</span><span style="position:absolute;left:849.5px;top:28.0px;font-family:'Liberation Sans',sans-serif;font-size:12px;line-height:1;white-space:pre;color:#1c1c1c;font-weight:normal;font-style:normal;letter-spacing:0.28px;">Material</span><span style="position:absolute;left:910.0px;top:28.0px;font-family:'Liberation Sans',sans-serif;font-size:12px;line-height:1;white-space:pre;color:#1c1c1c;font-weight:normal;font-style:normal;letter-spacing:0.00px;">Edit</span><span style="position:absolute;left:946.5px;top:28.0px;font-family:'Liberation Sans',sans-serif;font-size:12px;line-height:1;white-space:pre;color:#1c1c1c;font-weight:normal;font-style:normal;letter-spacing:-0.21px;">Select</span><span style="position:absolute;left:994.6px;top:28.0px;font-family:'Liberation Sans',sans-serif;font-size:12px;line-height:1;white-space:pre;color:#1c1c1c;font-weight:normal;font-style:normal;letter-spacing:0.10px;">View</span><span style="position:absolute;left:1036.6px;top:28.0px;font-family:'Liberation Sans',sans-serif;font-size:12px;line-height:1;white-space:pre;color:#1c1c1c;font-weight:normal;font-style:normal;letter-spacing:0.33px;">Options</span><span style="position:absolute;left:1096.7px;top:28.0px;font-family:'Liberation Sans',sans-serif;font-size:12px;line-height:1;white-space:pre;color:#1c1c1c;font-weight:normal;font-style:normal;letter-spacing:-0.14px;">Tools</span><span style="position:absolute;left:1139.4px;top:28.0px;font-family:'Liberation Sans',sans-serif;font-size:12px;line-height:1;white-space:pre;color:#1c1c1c;font-weight:normal;font-style:normal;letter-spacing:0.33px;">Utilities</span><div style="position:absolute;left:788px;top:45px;width:1132px;height:25px;background:#3f3f3f;"></div><div style="position:absolute;left:788px;top:68.5px;width:765px;height:2.5px;background:#1c1c1c;"></div><div style="position:absolute;left:789px;top:46px;width:23px;height:21px;background:#4b88d2;border-radius:1px;"></div><div style="position:absolute;left:814.7px;top:48px;width:1.6px;height:19px;background:#2c2c2c;"></div><div style="position:absolute;left:896.2px;top:48px;width:1.6px;height:19px;background:#2c2c2c;"></div><div style="position:absolute;left:928.7px;top:48px;width:1.6px;height:19px;background:#2c2c2c;"></div><div style="position:absolute;left:1034.2px;top:48px;width:1.6px;height:19px;background:#2c2c2c;"></div><div style="position:absolute;left:1065.2px;top:48px;width:1.6px;height:19px;background:#2c2c2c;"></div><div style="position:absolute;left:1123.7px;top:48px;width:1.6px;height:19px;background:#2c2c2c;"></div><div style="position:absolute;left:1179.7px;top:48px;width:1.6px;height:19px;background:#2c2c2c;"></div><svg style="position:absolute;left:788px;top:45px" width="440" height="25" viewBox="788 45 440 25">
<path d="M796 49.5V63L799.4 60L801.8 65.4L804.2 64.3L801.8 59.2H806Z" fill="#e8e8e8" stroke="#cfd8e6" stroke-width=".4"/>
<path d="M825.5 63.5L827 59.5L834 52.5L836.6 55L829.5 62Z" fill="#e0e0e0"/><path d="M833.5 51.5 L836.5 48.8 Q838.8 48.4 839.6 50.4 L837.6 54Z" fill="#e6e6e6"/>
<g fill="#2b2b2b"><path d="M849 52l4-4 4 4-4 4z"/><circle cx="856.5" cy="59" r="6"/></g>
<g fill="#2d2d2d"><path d="M873 52l3.6-3.6 3.6 3.6-3.6 3.6z"/><path d="M880 54l3-3 3 3-3 3z"/><rect x="882" y="60" width="8" height="6"/></g>
<g fill="#cdcdcd"><rect x="908.5" y="52" width="9" height="12.5" rx="1"/><rect x="907.5" y="50.3" width="11" height="1.5"/><rect x="910.8" y="49" width="4.4" height="1.6"/></g>
<path d="M911.5 54V63M914.5 54V63" stroke="#3f3f3f" stroke-width="1.1"/>
<rect x="938" y="50" width="11.5" height="3.6" fill="#f0f0f0"/>
<g fill="#35b0a5"><rect x="941" y="55.5" width="7" height="2.2"/><rect x="950" y="55" width="3.6" height="3.4"/><path d="M938 61.5l4-3v2h6v2h-6v2z"/></g>
<g fill="#2d2d2d"><rect x="965" y="57" width="10" height="8" rx="1"/><path d="M967.5 57v-3a3 3 0 0 1 6 0v3" fill="none" stroke="#2d2d2d" stroke-width="1.6"/></g>
<rect x="985.5" y="49.5" width="17.5" height="15.5" rx="2" fill="#323232" stroke="#2a2a2a"/><circle cx="994.2" cy="57.2" r="4.6" fill="#3c3c3c"/>
<rect x="1010" y="48" width="18" height="17.5" fill="#0c0c0c"/><path d="M1019 50.5l6 6.2-6 6.2-6-6.2z" fill="none" stroke="#2e2e2e" stroke-width="1.6"/>
<rect x="1043.2" y="48.6" width="16.6" height="16.4" rx="2" fill="#3a3a3a" stroke="#0b0b0b" stroke-width="1.6"/>
<path d="M1060 67.5h4v-4z" fill="#e6e6e6"/>
<rect x="1080.6" y="50" width="5.6" height="4.6" fill="#f0f0f0"/><rect x="1080.6" y="59.6" width="5.6" height="4.6" fill="#f0f0f0"/><path d="M1091.5 67.5h4v-4z" fill="#e6e6e6"/>
<g stroke="#e4e4e4" fill="none" stroke-width="1.5"><path d="M1103 56.5h5M1112 51.5h-2.6q-1.5 0 -1.5 2v6q0 2 1.5 2h2.6"/></g><g fill="#e8e8e8"><rect x="1102" y="54.8" width="3.2" height="3.4"/><rect x="1110.6" y="49.4" width="2.8" height="4.4"/><rect x="1110.6" y="59.4" width="2.8" height="4.4"/></g>
<g fill="none" stroke="#e6e6e6" stroke-width="1.2"><path d="M1134.6 49.8l2.7 2.7-2.7 2.7-2.7-2.7z"/><path d="M1134.6 58.3l2.7 2.7-2.7 2.7-2.7-2.7z"/></g><rect x="1140" y="51.3" width="7.6" height="2.6" fill="#e6e6e6"/><rect x="1140" y="59.8" width="7.6" height="2.6" fill="#e6e6e6"/>
<rect x="1154.3" y="46.5" width="21" height="20.4" rx="2.5" fill="#546f93" stroke="#4f86cc" stroke-width="1.4"/>
<rect x="1158.3" y="50.6" width="13.6" height="13.6" fill="#e9edf3"/><rect x="1158.3" y="50.6" width="13.6" height="2.4" fill="#c5cfe0"/><circle cx="1165.2" cy="59" r="3.4" fill="#8e99ab" stroke="#5d6675" stroke-width="1"/>
<g fill="#2d2d2d"><path d="M1189 54l5-5 5 5-5 5z"/><circle cx="1200" cy="60" r="3.2"/></g>
</svg><span style="position:absolute;left:1047.5px;top:48.9px;font-family:'Liberation Sans',sans-serif;font-size:15px;line-height:1;white-space:pre;color:#0a0a0a;font-weight:bold;font-style:normal;letter-spacing:-0.34px;">0</span><div style="position:absolute;left:1707.5px;top:47.5px;width:212.5px;height:21.5px;background:#5a5a5a;"></div><span style="position:absolute;left:1713.8px;top:53.9px;font-family:'Liberation Sans',sans-serif;font-size:11px;line-height:1;white-space:pre;color:#c4c4c4;font-weight:normal;font-style:normal;letter-spacing:0.05px;">View1</span><svg style="position:absolute;left:1904px;top:56px" width="9" height="6"><path d="M0.5 0.5H8.5L4.5 5.5Z" fill="#dedede"/></svg><div style="position:absolute;left:788px;top:71px;width:765px;height:21px;background:#2b2b2b;"></div><div style="position:absolute;left:865px;top:72px;width:686px;height:19px;background:#3b3b3b;"></div><div style="position:absolute;left:789px;top:71px;width:76px;height:21px;background:#474747;border-top:1px solid #6a6a6a;border-right:1px solid #2a2a2a;"></div><span style="position:absolute;left:797.5px;top:74.1px;font-family:'Liberation Sans',sans-serif;font-size:12.5px;line-height:1;white-space:pre;color:#f2f2f2;font-weight:bold;font-style:italic;letter-spacing:0.60px;text-shadow:1px 1px 1px #111;">View1</span><div style="position:absolute;left:788px;top:92px;width:765px;height:720px;background:#2f2f2f;"></div><div style="position:absolute;left:790px;top:96px;width:761px;height:714px;background:#444444;"></div><div style="position:absolute;left:1553px;top:71px;width:5px;height:741px;background:#3e3e3e;"></div><div style="position:absolute;left:1558px;top:71px;width:362px;height:741px;background:#2f2f2f;"></div><div style="position:absolute;left:1559px;top:71px;width:361px;height:19px;background:linear-gradient(#4a4a4a,#303030);"></div><span style="position:absolute;left:1565.0px;top:73.8px;font-family:'Liberation Sans',sans-serif;font-size:12px;line-height:1;white-space:pre;color:#f0f0f0;font-weight:bold;font-style:normal;letter-spacing:0.58px;text-shadow:1px 1px 1px #111;">Material Parameter Editor</span><span style="position:absolute;left:1908.0px;top:74.8px;font-family:'Liberation Sans',sans-serif;font-size:11px;line-height:1;white-space:pre;color:#0c0c0c;font-weight:bold;font-style:normal;letter-spacing:-0.12px;">x</span><div style="position:absolute;left:1559px;top:91px;width:361px;height:719px;background:#444444;"></div><div style="position:absolute;left:1564px;top:95px;width:351px;height:19px;background:#616161;"></div><div style="position:absolute;left:792.5px;top:777.5px;width:30.5px;height:30.5px;background:#3c3c3c;border-radius:4px;border:1px solid #4e4e4e;"></div><svg style="position:absolute;left:797px;top:783px" width="22" height="20" viewBox="0 0 22 20"><path d="M3 16.5 L4.4 6.5 Q5 3.4 7.4 3.4 Q9.6 3.4 9.6 6.2 V16.5Z M18.6 16.5 L17.2 6.5 Q16.6 3.4 14.2 3.4 Q12 3.4 12 6.2 V16.5Z" fill="#f0f0f0"/><rect x="9.2" y="7" width="3.2" height="3" fill="#e0e0e0"/></svg><div style="position:absolute;left:788px;top:812px;width:1132px;height:24px;background:#444444;"></div><div style="position:absolute;left:788px;top:810.5px;width:1132px;height:2px;background:#2c2c2c;"></div><div style="position:absolute;left:789px;top:814px;width:22.5px;height:21.5px;background:#4b88d2;border-radius:2px;"></div><svg style="position:absolute;left:789px;top:814px" width="23" height="22" viewBox="0 0 23 22"><path d="M4.5 10.5 Q3 10 2.8 8.5 Q5 8.6 6 10.4 L8.5 10 L10 7.6 H13.5 L15 10 H18.4 Q17.6 15.6 14.6 16.6 H8.4 Q5.6 15.4 4.5 10.5Z" fill="#f2f2f2"/></svg><span style="position:absolute;left:816.0px;top:818.6px;font-family:'Liberation Sans',sans-serif;font-size:10.5px;line-height:1;white-space:pre;color:#f0f0f0;font-weight:normal;font-style:normal;letter-spacing:0.08px;text-shadow:0 0 1px #ddd;">Rendering finished</span><div style="position:absolute;left:1718.5px;top:814px;width:56.5px;height:21px;background:#5c5c5c;"></div><span style="position:absolute;left:1724.5px;top:819.3px;font-family:'Liberation Sans',sans-serif;font-size:11px;line-height:1;white-space:pre;color:#cfcfcf;font-weight:normal;font-style:normal;letter-spacing:0.62px;">111%</span><svg style="position:absolute;left:1760px;top:822px" width="8" height="6"><path d="M0.5 0.5H7.5L4 5Z" fill="#dcdcdc"/></svg><svg style="position:absolute;left:1776px;top:812px" width="144" height="24" viewBox="1776 812 144 24">
<path d="M1783 826.5 L1785.4 828.2 V820.5 Q1786.2 818.8 1787 820.5 V818.6 Q1788 817 1789 818.6 V818.2 Q1790 816.8 1791 818.6 V819.6 Q1792 818.4 1793 820 V828 Q1792.6 831.4 1790 832 H1787.4 Q1785.4 831.4 1783 828.4Z" fill="#ececec"/>
<circle cx="1814" cy="822.5" r="4.4" fill="none" stroke="#e8e8e8" stroke-width="2"/><path d="M1810.6 826.2L1805.8 831" stroke="#e8e8e8" stroke-width="2.4" stroke-linecap="round"/>
<rect x="1829.6" y="817" width="13.6" height="11" fill="none" stroke="#d8d8d8" stroke-width="1.3" stroke-dasharray="2 2"/>
<circle cx="1837" cy="824" r="3.3" fill="none" stroke="#31b6bd" stroke-width="1.8"/><path d="M1834.4 826.6L1830.6 830.6" stroke="#31b6bd" stroke-width="2.2" stroke-linecap="round"/>
<g fill="none" stroke="#e6e6e6" stroke-width="1.5"><path d="M1854.4 820v-3h3M1865.6 817h3v3M1868.6 829v3h-3M1857.4 832h-3v-3"/></g>
<path d="M1861.5 819l4.6 2.6v5.4l-4.6 2.6-4.6-2.6v-5.4z" fill="#ececec"/><path d="M1861.5 824.4v5M1861.5 824.4l-4.3-2.5M1861.5 824.4l4.3-2.5" stroke="#555" stroke-width="1"/>
<g fill="none" stroke="#e6e6e6" stroke-width="1.5"><path d="M1879 820v-3h3M1890.2 817h3v3M1893.2 829v3h-3M1882 832h-3v-3"/></g>
<path d="M1886.1 818.6l5 2.9v5.8l-5 2.9-5-2.9v-5.8z" fill="#31b6bd"/><path d="M1886.1 824.4v5M1886.1 824.4l-4.3-2.5M1886.1 824.4l4.3-2.5" stroke="#2a5c60" stroke-width="1"/>
<g fill="none" stroke="#e6e6e6" stroke-width="1.5"><path d="M1903.4 820v-3h3M1914.6 817h3v3M1917.6 829v3h-3M1906.4 832h-3v-3"/></g>
<path d="M1905 826 L1907 827.6 V820.4 Q1907.8 819 1908.6 820.4 V818.8 Q1909.6 817.4 1910.6 818.8 Q1911.6 817.4 1912.6 819 V820 Q1913.6 818.8 1914.6 820.4 V828 Q1914 831.2 1911.6 831.6 H1909 Q1907 831 1905 828Z" fill="#31b6bd"/>
</svg>
<div style="position:absolute;left:0px;top:1032.5px;width:1920px;height:26px;background:#444444;"></div><div style="position:absolute;left:0px;top:1037.5px;width:69px;height:16.5px;background:#5c5c5c;border-radius:2px;"></div><span style="position:absolute;left:-4.0px;top:1040.8px;font-family:'Liberation Sans',sans-serif;font-size:11px;line-height:1;white-space:pre;color:#d0d0d0;font-weight:normal;font-style:normal;letter-spacing:0.24px;">4 / 36</span><div style="position:absolute;left:72.5px;top:1037.5px;width:14.5px;height:16.5px;background:#5c5c5c;border-radius:2px;"></div><span style="position:absolute;left:76.0px;top:1039.8px;font-family:'Liberation Sans',sans-serif;font-size:11px;line-height:1;white-space:pre;color:#d8d8d8;font-weight:normal;font-style:normal;letter-spacing:1.06px;">&gt;</span><div style="position:absolute;left:0px;top:1058.5px;width:1875px;height:31px;background:linear-gradient(#1c1c1c,#2a2a2a 5px,#2a2a2a);"></div><div style="position:absolute;left:1875px;top:1058px;width:45px;height:31px;background:#444444;"></div><div style="position:absolute;left:0px;top:1087.8px;width:1875px;height:1.2px;background:#c4c4c4;"></div><div style="position:absolute;left:0px;top:1061px;width:3px;height:27px;background:#b59a22;"></div><svg style="position:absolute;left:0;top:1058px" width="1875" height="31" viewBox="0 1058 1875 31"><rect x="50.0" y="1059" width="1.3" height="29" fill="#626262"/><rect x="101.4" y="1059" width="1.3" height="29" fill="#626262"/><rect x="152.8" y="1059" width="1.3" height="29" fill="#626262"/><rect x="204.1" y="1059" width="1.3" height="29" fill="#626262"/><rect x="255.5" y="1059" width="1.3" height="29" fill="#626262"/><rect x="306.9" y="1059" width="1.3" height="29" fill="#626262"/><rect x="358.3" y="1059" width="1.3" height="29" fill="#626262"/><rect x="409.7" y="1059" width="1.3" height="29" fill="#626262"/><rect x="461.0" y="1059" width="1.3" height="29" fill="#626262"/><rect x="512.4" y="1059" width="1.3" height="29" fill="#626262"/><rect x="563.8" y="1059" width="1.3" height="29" fill="#626262"/><rect x="615.2" y="1059" width="1.3" height="29" fill="#626262"/><rect x="666.6" y="1059" width="1.3" height="29" fill="#626262"/><rect x="717.9" y="1059" width="1.3" height="29" fill="#626262"/><rect x="769.3" y="1059" width="1.3" height="29" fill="#626262"/><rect x="820.7" y="1059" width="1.3" height="29" fill="#626262"/><rect x="872.1" y="1059" width="1.3" height="29" fill="#626262"/><rect x="923.5" y="1059" width="1.3" height="29" fill="#626262"/><rect x="974.8" y="1059" width="1.3" height="29" fill="#626262"/><rect x="1026.2" y="1059" width="1.3" height="29" fill="#626262"/><rect x="1077.6" y="1059" width="1.3" height="29" fill="#626262"/><rect x="1129.0" y="1059" width="1.3" height="29" fill="#626262"/><rect x="1180.4" y="1059" width="1.3" height="29" fill="#626262"/><rect x="1231.7" y="1059" width="1.3" height="29" fill="#626262"/><rect x="1283.1" y="1059" width="1.3" height="29" fill="#626262"/><rect x="1334.5" y="1059" width="1.3" height="29" fill="#626262"/><rect x="1385.9" y="1059" width="1.3" height="29" fill="#626262"/><rect x="1437.3" y="1059" width="1.3" height="29" fill="#626262"/><rect x="1488.6" y="1059" width="1.3" height="29" fill="#626262"/><rect x="1540.0" y="1059" width="1.3" height="29" fill="#626262"/><rect x="1591.4" y="1059" width="1.3" height="29" fill="#626262"/><rect x="1642.8" y="1059" width="1.3" height="29" fill="#626262"/><rect x="1694.2" y="1059" width="1.3" height="29" fill="#626262"/><rect x="1745.5" y="1059" width="1.3" height="29" fill="#626262"/><rect x="1796.9" y="1059" width="1.3" height="29" fill="#626262"/><rect x="1848.3" y="1059" width="1.3" height="29" fill="#626262"/></svg><span style="position:absolute;left:40.1px;top:1074.3px;font-family:'Liberation Sans',sans-serif;font-size:11px;line-height:1;white-space:pre;color:#c9c9c9;font-weight:normal;font-style:normal;letter-spacing:0.55px;">365</span><span style="position:absolute;left:91.5px;top:1074.3px;font-family:'Liberation Sans',sans-serif;font-size:11px;line-height:1;white-space:pre;color:#c9c9c9;font-weight:normal;font-style:normal;letter-spacing:0.55px;">366</span><span style="position:absolute;left:142.9px;top:1074.3px;font-family:'Liberation Sans',sans-serif;font-size:11px;line-height:1;white-space:pre;color:#c9c9c9;font-weight:normal;font-style:normal;letter-spacing:0.55px;">367</span><span style="position:absolute;left:194.2px;top:1074.3px;font-family:'Liberation Sans',sans-serif;font-size:11px;line-height:1;white-space:pre;color:#c9c9c9;font-weight:normal;font-style:normal;letter-spacing:0.55px;">368</span><span style="position:absolute;left:245.6px;top:1074.3px;font-family:'Liberation Sans',sans-serif;font-size:11px;line-height:1;white-space:pre;color:#c9c9c9;font-weight:normal;font-style:normal;letter-spacing:0.55px;">369</span><span style="position:absolute;left:297.0px;top:1074.3px;font-family:'Liberation Sans',sans-serif;font-size:11px;line-height:1;white-space:pre;color:#c9c9c9;font-weight:normal;font-style:normal;letter-spacing:0.55px;">370</span><span style="position:absolute;left:348.4px;top:1074.3px;font-family:'Liberation Sans',sans-serif;font-size:11px;line-height:1;white-space:pre;color:#c9c9c9;font-weight:normal;font-style:normal;letter-spacing:0.55px;">371</span><span style="position:absolute;left:399.8px;top:1074.3px;font-family:'Liberation Sans',sans-serif;font-size:11px;line-height:1;white-space:pre;color:#c9c9c9;font-weight:normal;font-style:normal;letter-spacing:0.55px;">372</span><span style="position:absolute;left:451.1px;top:1074.3px;font-family:'Liberation Sans',sans-serif;font-size:11px;line-height:1;white-space:pre;color:#c9c9c9;font-weight:normal;font-style:normal;letter-spacing:0.55px;">373</span><span style="position:absolute;left:502.5px;top:1074.3px;font-family:'Liberation Sans',sans-serif;font-size:11px;line-height:1;white-space:pre;color:#c9c9c9;font-weight:normal;font-style:normal;letter-spacing:0.55px;">374</span><span style="position:absolute;left:553.9px;top:1074.3px;font-family:'Liberation Sans',sans-serif;font-size:11px;line-height:1;white-space:pre;color:#c9c9c9;font-weight:normal;font-style:normal;letter-spacing:0.55px;">375</span><span style="position:absolute;left:605.3px;top:1074.3px;font-family:'Liberation Sans',sans-serif;font-size:11px;line-height:1;white-space:pre;color:#c9c9c9;font-weight:normal;font-style:normal;letter-spacing:0.55px;">376</span><span style="position:absolute;left:656.7px;top:1074.3px;font-family:'Liberation Sans',sans-serif;font-size:11px;line-height:1;white-space:pre;color:#c9c9c9;font-weight:normal;font-style:normal;letter-spacing:0.55px;">377</span><span style="position:absolute;left:708.0px;top:1074.3px;font-family:'Liberation Sans',sans-serif;font-size:11px;line-height:1;white-space:pre;color:#c9c9c9;font-weight:normal;font-style:normal;letter-spacing:0.55px;">378</span><span style="position:absolute;left:759.4px;top:1074.3px;font-family:'Liberation Sans',sans-serif;font-size:11px;line-height:1;white-space:pre;color:#c9c9c9;font-weight:normal;font-style:normal;letter-spacing:0.55px;">379</span><span style="position:absolute;left:810.8px;top:1074.3px;font-family:'Liberation Sans',sans-serif;font-size:11px;line-height:1;white-space:pre;color:#c9c9c9;font-weight:normal;font-style:normal;letter-spacing:0.55px;">380</span><span style="position:absolute;left:862.2px;top:1074.3px;font-family:'Liberation Sans',sans-serif;font-size:11px;line-height:1;white-space:pre;color:#c9c9c9;font-weight:normal;font-style:normal;letter-spacing:0.55px;">381</span><span style="position:absolute;left:913.6px;top:1074.3px;font-family:'Liberation Sans',sans-serif;font-size:11px;line-height:1;white-space:pre;color:#c9c9c9;font-weight:normal;font-style:normal;letter-spacing:0.55px;">382</span><span style="position:absolute;left:964.9px;top:1074.3px;font-family:'Liberation Sans',sans-serif;font-size:11px;line-height:1;white-space:pre;color:#c9c9c9;font-weight:normal;font-style:normal;letter-spacing:0.55px;">383</span><span style="position:absolute;left:1016.3px;top:1074.3px;font-family:'Liberation Sans',sans-serif;font-size:11px;line-height:1;white-space:pre;color:#c9c9c9;font-weight:normal;font-style:normal;letter-spacing:0.55px;">384</span><span style="position:absolute;left:1067.7px;top:1074.3px;font-family:'Liberation Sans',sans-serif;font-size:11px;line-height:1;white-space:pre;color:#c9c9c9;font-weight:normal;font-style:normal;letter-spacing:0.55px;">385</span><span style="position:absolute;left:1119.1px;top:1074.3px;font-family:'Liberation Sans',sans-serif;font-size:11px;line-height:1;white-space:pre;color:#c9c9c9;font-weight:normal;font-style:normal;letter-spacing:0.55px;">386</span><span style="position:absolute;left:1170.5px;top:1074.3px;font-family:'Liberation Sans',sans-serif;font-size:11px;line-height:1;white-space:pre;color:#c9c9c9;font-weight:normal;font-style:normal;letter-spacing:0.55px;">387</span><span style="position:absolute;left:1221.8px;top:1074.3px;font-family:'Liberation Sans',sans-serif;font-size:11px;line-height:1;white-space:pre;color:#c9c9c9;font-weight:normal;font-style:normal;letter-spacing:0.55px;">388</span><span style="position:absolute;left:1273.2px;top:1074.3px;font-family:'Liberation Sans',sans-serif;font-size:11px;line-height:1;white-space:pre;color:#c9c9c9;font-weight:normal;font-style:normal;letter-spacing:0.55px;">389</span><span style="position:absolute;left:1324.6px;top:1074.3px;font-family:'Liberation Sans',sans-serif;font-size:11px;line-height:1;white-space:pre;color:#c9c9c9;font-weight:normal;font-style:normal;letter-spacing:0.55px;">390</span><span style="position:absolute;left:1376.0px;top:1074.3px;font-family:'Liberation Sans',sans-serif;font-size:11px;line-height:1;white-space:pre;color:#c9c9c9;font-weight:normal;font-style:normal;letter-spacing:0.55px;">391</span><span style="position:absolute;left:1427.4px;top:1074.3px;font-family:'Liberation Sans',sans-serif;font-size:11px;line-height:1;white-space:pre;color:#c9c9c9;font-weight:normal;font-style:normal;letter-spacing:0.55px;">392</span><span style="position:absolute;left:1478.7px;top:1074.3px;font-family:'Liberation Sans',sans-serif;font-size:11px;line-height:1;white-space:pre;color:#c9c9c9;font-weight:normal;font-style:normal;letter-spacing:0.55px;">393</span><span style="position:absolute;left:1530.1px;top:1074.3px;font-family:'Liberation Sans',sans-serif;font-size:11px;line-height:1;white-space:pre;color:#c9c9c9;font-weight:normal;font-style:normal;letter-spacing:0.55px;">394</span><span style="position:absolute;left:1581.5px;top:1074.3px;font-family:'Liberation Sans',sans-serif;font-size:11px;line-height:1;white-space:pre;color:#c9c9c9;font-weight:normal;font-style:normal;letter-spacing:0.55px;">395</span><span style="position:absolute;left:1632.9px;top:1074.3px;font-family:'Liberation Sans',sans-serif;font-size:11px;line-height:1;white-space:pre;color:#c9c9c9;font-weight:normal;font-style:normal;letter-spacing:0.55px;">396</span><span style="position:absolute;left:1684.3px;top:1074.3px;font-family:'Liberation Sans',sans-serif;font-size:11px;line-height:1;white-space:pre;color:#c9c9c9;font-weight:normal;font-style:normal;letter-spacing:0.55px;">397</span><span style="position:absolute;left:1735.6px;top:1074.3px;font-family:'Liberation Sans',sans-serif;font-size:11px;line-height:1;white-space:pre;color:#c9c9c9;font-weight:normal;font-style:normal;letter-spacing:0.55px;">398</span><span style="position:absolute;left:1787.0px;top:1074.3px;font-family:'Liberation Sans',sans-serif;font-size:11px;line-height:1;white-space:pre;color:#c9c9c9;font-weight:normal;font-style:normal;letter-spacing:0.55px;">399</span><span style="position:absolute;left:1838.4px;top:1074.3px;font-family:'Liberation Sans',sans-serif;font-size:11px;line-height:1;white-space:pre;color:#c9c9c9;font-weight:normal;font-style:normal;letter-spacing:0.55px;">400</span><span style="position:absolute;left:-1.0px;top:1074.3px;font-family:'Liberation Sans',sans-serif;font-size:11px;line-height:1;white-space:pre;color:#c9c9c9;font-weight:normal;font-style:normal;letter-spacing:1.38px;">4</span>
<div style="position:absolute;left:1253px;top:135px;width:206px;height:154px;background:#f2f2f2;box-shadow:2px 3px 5px rgba(0,0,0,.55);border:1px solid #d2d2d2;"></div><div style="position:absolute;left:1454px;top:135px;width:142px;height:76px;background:#f2f2f2;box-shadow:2px 3px 5px rgba(0,0,0,.55);border:1px solid #d2d2d2;"></div><div style="position:absolute;left:1590.5px;top:183px;width:181px;height:539px;background:#f2f2f2;box-shadow:2px 3px 5px rgba(0,0,0,.55);border:1px solid #d2d2d2;"></div><div style="position:absolute;left:1257px;top:139px;width:196px;height:22px;background:#91c9f7;"></div><div style="position:absolute;left:1457px;top:185.5px;width:133px;height:22px;background:#91c9f7;"></div><span style="position:absolute;left:1290.3px;top:143.7px;font-family:'Liberation Sans',sans-serif;font-size:12px;line-height:1;white-space:pre;color:#1f1f1f;font-weight:normal;font-style:normal;letter-spacing:0.28px;">Materials</span><span style="position:absolute;left:1290.3px;top:167.3px;font-family:'Liberation Sans',sans-serif;font-size:12px;line-height:1;white-space:pre;color:#1f1f1f;font-weight:normal;font-style:normal;letter-spacing:0.51px;">Maps</span><span style="position:absolute;left:1290.3px;top:190.7px;font-family:'Liberation Sans',sans-serif;font-size:12px;line-height:1;white-space:pre;color:#1f1f1f;font-weight:normal;font-style:normal;letter-spacing:0.36px;">Controllers</span><span style="position:absolute;left:1290.3px;top:214.5px;font-family:'Liberation Sans',sans-serif;font-size:12px;line-height:1;white-space:pre;color:#1f1f1f;font-weight:normal;font-style:normal;letter-spacing:0.08px;">Sample Slots</span><span style="position:absolute;left:1290.3px;top:245.0px;font-family:'Liberation Sans',sans-serif;font-size:12px;line-height:1;white-space:pre;color:#1f1f1f;font-weight:normal;font-style:normal;letter-spacing:0.42px;">Unhide All Children</span><span style="position:absolute;left:1290.3px;top:268.6px;font-family:'Liberation Sans',sans-serif;font-size:12px;line-height:1;white-space:pre;color:#1f1f1f;font-weight:normal;font-style:normal;letter-spacing:0.45px;">Hide All Children</span><div style="position:absolute;left:1286.5px;top:236.5px;width:169px;height:1px;background:#d0d0d0;"></div><span style="position:absolute;left:1491.0px;top:143.7px;font-family:'Liberation Sans',sans-serif;font-size:12px;line-height:1;white-space:pre;color:#1f1f1f;font-weight:normal;font-style:normal;letter-spacing:-0.10px;">General</span><span style="position:absolute;left:1491.0px;top:167.3px;font-family:'Liberation Sans',sans-serif;font-size:12px;line-height:1;white-space:pre;color:#1f1f1f;font-weight:normal;font-style:normal;letter-spacing:0.06px;">Scanline</span><span style="position:absolute;left:1491.0px;top:190.7px;font-family:'Liberation Sans',sans-serif;font-size:12px;line-height:1;white-space:pre;color:#1f1f1f;font-weight:normal;font-style:normal;letter-spacing:-0.04px;">V-Ray</span><svg style="position:absolute;left:1441px;top:144.5px" width="7" height="10" viewBox="0 0 7 10"><path d="M1.2 1L5.4 5L1.2 9" fill="none" stroke="#3a3a3a" stroke-width="1.2"/></svg><svg style="position:absolute;left:1441px;top:168.2px" width="7" height="10" viewBox="0 0 7 10"><path d="M1.2 1L5.4 5L1.2 9" fill="none" stroke="#3a3a3a" stroke-width="1.2"/></svg><svg style="position:absolute;left:1441px;top:191.6px" width="7" height="10" viewBox="0 0 7 10"><path d="M1.2 1L5.4 5L1.2 9" fill="none" stroke="#3a3a3a" stroke-width="1.2"/></svg><svg style="position:absolute;left:1441px;top:215.4px" width="7" height="10" viewBox="0 0 7 10"><path d="M1.2 1L5.4 5L1.2 9" fill="none" stroke="#3a3a3a" stroke-width="1.2"/></svg><svg style="position:absolute;left:1578px;top:144.5px" width="7" height="10" viewBox="0 0 7 10"><path d="M1.2 1L5.4 5L1.2 9" fill="none" stroke="#3a3a3a" stroke-width="1.2"/></svg><svg style="position:absolute;left:1578px;top:168.2px" width="7" height="10" viewBox="0 0 7 10"><path d="M1.2 1L5.4 5L1.2 9" fill="none" stroke="#3a3a3a" stroke-width="1.2"/></svg><svg style="position:absolute;left:1578px;top:191.6px" width="7" height="10" viewBox="0 0 7 10"><path d="M1.2 1L5.4 5L1.2 9" fill="none" stroke="#3a3a3a" stroke-width="1.2"/></svg><div style="position:absolute;left:1593px;top:442px;width:176px;height:20.5px;background:#0a6cd8;"></div><svg style="position:absolute;left:1594px;top:186px" width="18" height="534" viewBox="1594 186 18 534"><defs><radialGradient id="sg" cx="0.35" cy="0.3" r="0.8"><stop offset="0" stop-color="#d8d8d8"/><stop offset="0.5" stop-color="#909090"/><stop offset="1" stop-color="#3a3a3a"/></radialGradient><radialGradient id="sbg" cx="0.35" cy="0.3" r="0.8"><stop offset="0" stop-color="#c8d4e8"/><stop offset="0.5" stop-color="#7f8aa0"/><stop offset="1" stop-color="#2a3040"/></radialGradient><radialGradient id="slg" cx="0.35" cy="0.3" r="0.8"><stop offset="0" stop-color="#f0f0f0"/><stop offset="0.6" stop-color="#a8a8a8"/><stop offset="1" stop-color="#555"/></radialGradient></defs><rect x="1595.5" y="187.5" width="15" height="15" fill="#858585" stroke="#9a9a9a" stroke-width="1"/><rect x="1595.5" y="208.9" width="15" height="15" fill="#6e6e6e"/><circle cx="1603.0" cy="216.4" r="7" fill="url(#sg)"/><rect x="1595.5" y="230.2" width="15" height="15" fill="#858585" stroke="#9a9a9a" stroke-width="1"/><rect x="1595.5" y="251.6" width="15" height="15" fill="#858585" stroke="#9a9a9a" stroke-width="1"/><rect x="1595.5" y="273.0" width="15" height="15" fill="#6e6e6e"/><circle cx="1603.0" cy="280.5" r="7" fill="url(#sbg)"/><rect x="1595.5" y="294.4" width="15" height="15" fill="#6e6e6e"/><circle cx="1603.0" cy="301.9" r="7" fill="url(#slg)"/><rect x="1595.5" y="315.8" width="15" height="15" fill="#858585" stroke="#9a9a9a" stroke-width="1"/><rect x="1595.5" y="337.1" width="15" height="15" fill="#858585" stroke="#9a9a9a" stroke-width="1"/><rect x="1595.5" y="358.5" width="15" height="15" fill="#6a6a6a"/><circle cx="1603.0" cy="366.0" r="7.2" fill="#050505"/><rect x="1595.5" y="379.9" width="15" height="15" fill="#6b6355"/><circle cx="1603.0" cy="388.4" r="5" fill="#4a4236"/><rect x="1595.5" y="401.2" width="15" height="15" fill="#7a7a7a"/><circle cx="1603.0" cy="408.8" r="7" fill="#fdfdfd"/><rect x="1595.5" y="422.6" width="15" height="15" fill="#858585" stroke="#9a9a9a" stroke-width="1"/><rect x="1595.5" y="444.0" width="15" height="15" fill="#6e6e6e"/><circle cx="1603.0" cy="451.5" r="7" fill="url(#sg)"/><rect x="1595.5" y="465.4" width="15" height="15" fill="#6a6a6a"/><circle cx="1603.0" cy="472.9" r="7.2" fill="#050505"/><rect x="1595.5" y="486.8" width="15" height="15" fill="#858585" stroke="#9a9a9a" stroke-width="1"/><rect x="1595.5" y="508.1" width="15" height="15" fill="#6a6a6a"/><circle cx="1603.0" cy="515.6" r="7.2" fill="#050505"/><rect x="1595.5" y="529.5" width="15" height="15" fill="#858585" stroke="#9a9a9a" stroke-width="1"/><rect x="1595.5" y="550.9" width="15" height="15" fill="#6e6e6e"/><circle cx="1603.0" cy="558.4" r="7" fill="url(#sg)"/><rect x="1595.5" y="572.2" width="15" height="15" fill="#858585" stroke="#9a9a9a" stroke-width="1"/><rect x="1595.5" y="593.6" width="15" height="15" fill="#b4b4b4" stroke="#8c8c8c" stroke-width="1"/><rect x="1595.5" y="615.0" width="15" height="15" fill="#858585" stroke="#9a9a9a" stroke-width="1"/><rect x="1595.5" y="636.4" width="15" height="15" fill="#858585" stroke="#9a9a9a" stroke-width="1"/><rect x="1595.5" y="657.8" width="15" height="15" fill="#8a8a8a"/><circle cx="1603.0" cy="665.2" r="7" fill="#0a0a0a"/><circle cx="1601.0" cy="663.2" r="4.2" fill="#f4f4f4"/><rect x="1595.5" y="679.1" width="15" height="15" fill="#b4b4b4" stroke="#8c8c8c" stroke-width="1"/><rect x="1595.5" y="700.5" width="15" height="15" fill="#858585" stroke="#9a9a9a" stroke-width="1"/></svg><span style="position:absolute;left:1614.8px;top:189.4px;font-family:'Liberation Sans',sans-serif;font-size:12px;line-height:1;white-space:pre;color:#1f1f1f;font-weight:normal;font-style:normal;letter-spacing:0.17px;">VRay2SidedMtl</span><span style="position:absolute;left:1614.8px;top:210.8px;font-family:'Liberation Sans',sans-serif;font-size:12px;line-height:1;white-space:pre;color:#1f1f1f;font-weight:normal;font-style:normal;letter-spacing:0.17px;">VRayALSurfaceMtl</span><span style="position:absolute;left:1614.8px;top:232.2px;font-family:'Liberation Sans',sans-serif;font-size:12px;line-height:1;white-space:pre;color:#1f1f1f;font-weight:normal;font-style:normal;letter-spacing:0.17px;">VRayBlendMtl</span><span style="position:absolute;left:1614.8px;top:253.5px;font-family:'Liberation Sans',sans-serif;font-size:12px;line-height:1;white-space:pre;color:#1f1f1f;font-weight:normal;font-style:normal;letter-spacing:0.17px;">VRayBumpMtl</span><span style="position:absolute;left:1614.8px;top:274.9px;font-family:'Liberation Sans',sans-serif;font-size:12px;line-height:1;white-space:pre;color:#1f1f1f;font-weight:normal;font-style:normal;letter-spacing:0.17px;">VRayCarPaintMtl</span><span style="position:absolute;left:1614.8px;top:296.3px;font-family:'Liberation Sans',sans-serif;font-size:12px;line-height:1;white-space:pre;color:#1f1f1f;font-weight:normal;font-style:normal;letter-spacing:0.17px;">VRayFastSSS2</span><span style="position:absolute;left:1614.8px;top:317.7px;font-family:'Liberation Sans',sans-serif;font-size:12px;line-height:1;white-space:pre;color:#1f1f1f;font-weight:normal;font-style:normal;letter-spacing:0.17px;">VRayFlakesMtl</span><span style="position:absolute;left:1614.8px;top:339.0px;font-family:'Liberation Sans',sans-serif;font-size:12px;line-height:1;white-space:pre;color:#1f1f1f;font-weight:normal;font-style:normal;letter-spacing:0.17px;">VRayGLSLMtl</span><span style="position:absolute;left:1614.8px;top:360.4px;font-family:'Liberation Sans',sans-serif;font-size:12px;line-height:1;white-space:pre;color:#1f1f1f;font-weight:normal;font-style:normal;letter-spacing:0.17px;">VRayHairMtl</span><span style="position:absolute;left:1614.8px;top:381.8px;font-family:'Liberation Sans',sans-serif;font-size:12px;line-height:1;white-space:pre;color:#1f1f1f;font-weight:normal;font-style:normal;letter-spacing:0.17px;">VRayHairNextMtl</span><span style="position:absolute;left:1614.8px;top:403.2px;font-family:'Liberation Sans',sans-serif;font-size:12px;line-height:1;white-space:pre;color:#1f1f1f;font-weight:normal;font-style:normal;letter-spacing:0.17px;">VRayLightMtl</span><span style="position:absolute;left:1614.8px;top:424.5px;font-family:'Liberation Sans',sans-serif;font-size:12px;line-height:1;white-space:pre;color:#1f1f1f;font-weight:normal;font-style:normal;letter-spacing:0.17px;">VRayMDLMtl</span><span style="position:absolute;left:1614.8px;top:445.9px;font-family:'Liberation Sans',sans-serif;font-size:12px;line-height:1;white-space:pre;color:#ffffff;font-weight:normal;font-style:normal;letter-spacing:0.17px;">VRayMtl</span><span style="position:absolute;left:1614.8px;top:467.3px;font-family:'Liberation Sans',sans-serif;font-size:12px;line-height:1;white-space:pre;color:#1f1f1f;font-weight:normal;font-style:normal;letter-spacing:0.17px;">VRayMtlWrapper</span><span style="position:absolute;left:1614.8px;top:488.7px;font-family:'Liberation Sans',sans-serif;font-size:12px;line-height:1;white-space:pre;color:#1f1f1f;font-weight:normal;font-style:normal;letter-spacing:0.17px;">VRayOSLMtl</span><span style="position:absolute;left:1614.8px;top:510.0px;font-family:'Liberation Sans',sans-serif;font-size:12px;line-height:1;white-space:pre;color:#1f1f1f;font-weight:normal;font-style:normal;letter-spacing:0.17px;">VRayOverrideMtl</span><span style="position:absolute;left:1614.8px;top:531.4px;font-family:'Liberation Sans',sans-serif;font-size:12px;line-height:1;white-space:pre;color:#1f1f1f;font-weight:normal;font-style:normal;letter-spacing:0.17px;">VRayPluginNodeMtl</span><span style="position:absolute;left:1614.8px;top:552.8px;font-family:'Liberation Sans',sans-serif;font-size:12px;line-height:1;white-space:pre;color:#1f1f1f;font-weight:normal;font-style:normal;letter-spacing:0.17px;">VRayPointParticleMtl</span><span style="position:absolute;left:1614.8px;top:574.2px;font-family:'Liberation Sans',sans-serif;font-size:12px;line-height:1;white-space:pre;color:#1f1f1f;font-weight:normal;font-style:normal;letter-spacing:0.17px;">VRayScannedMtl</span><span style="position:absolute;left:1614.8px;top:595.5px;font-family:'Liberation Sans',sans-serif;font-size:12px;line-height:1;white-space:pre;color:#1f1f1f;font-weight:normal;font-style:normal;letter-spacing:0.17px;">VRayScatterVolume</span><span style="position:absolute;left:1614.8px;top:616.9px;font-family:'Liberation Sans',sans-serif;font-size:12px;line-height:1;white-space:pre;color:#1f1f1f;font-weight:normal;font-style:normal;letter-spacing:0.17px;">VRayStochasticFlakesMtl</span><span style="position:absolute;left:1614.8px;top:638.3px;font-family:'Liberation Sans',sans-serif;font-size:12px;line-height:1;white-space:pre;color:#1f1f1f;font-weight:normal;font-style:normal;letter-spacing:0.17px;">VRaySwitchMtl</span><span style="position:absolute;left:1614.8px;top:659.7px;font-family:'Liberation Sans',sans-serif;font-size:12px;line-height:1;white-space:pre;color:#1f1f1f;font-weight:normal;font-style:normal;letter-spacing:0.17px;">VRayToonMtl</span><span style="position:absolute;left:1614.8px;top:681.0px;font-family:'Liberation Sans',sans-serif;font-size:12px;line-height:1;white-space:pre;color:#1f1f1f;font-weight:normal;font-style:normal;letter-spacing:0.17px;">VRayVectorDisplBake</span><span style="position:absolute;left:1614.8px;top:702.4px;font-family:'Liberation Sans',sans-serif;font-size:12px;line-height:1;white-space:pre;color:#1f1f1f;font-weight:normal;font-style:normal;letter-spacing:0.17px;">VRayVRmatMtl</span><svg style="position:absolute;left:1631px;top:444px" width="16" height="22" viewBox="0 0 16 22"><path d="M2.5 2.5V17.5L6.2 14.2L8.8 20L11.4 18.8L8.8 13.2H13.5Z" fill="#ffffff" stroke="#111" stroke-width="1.1"/></svg>
</body></html>
